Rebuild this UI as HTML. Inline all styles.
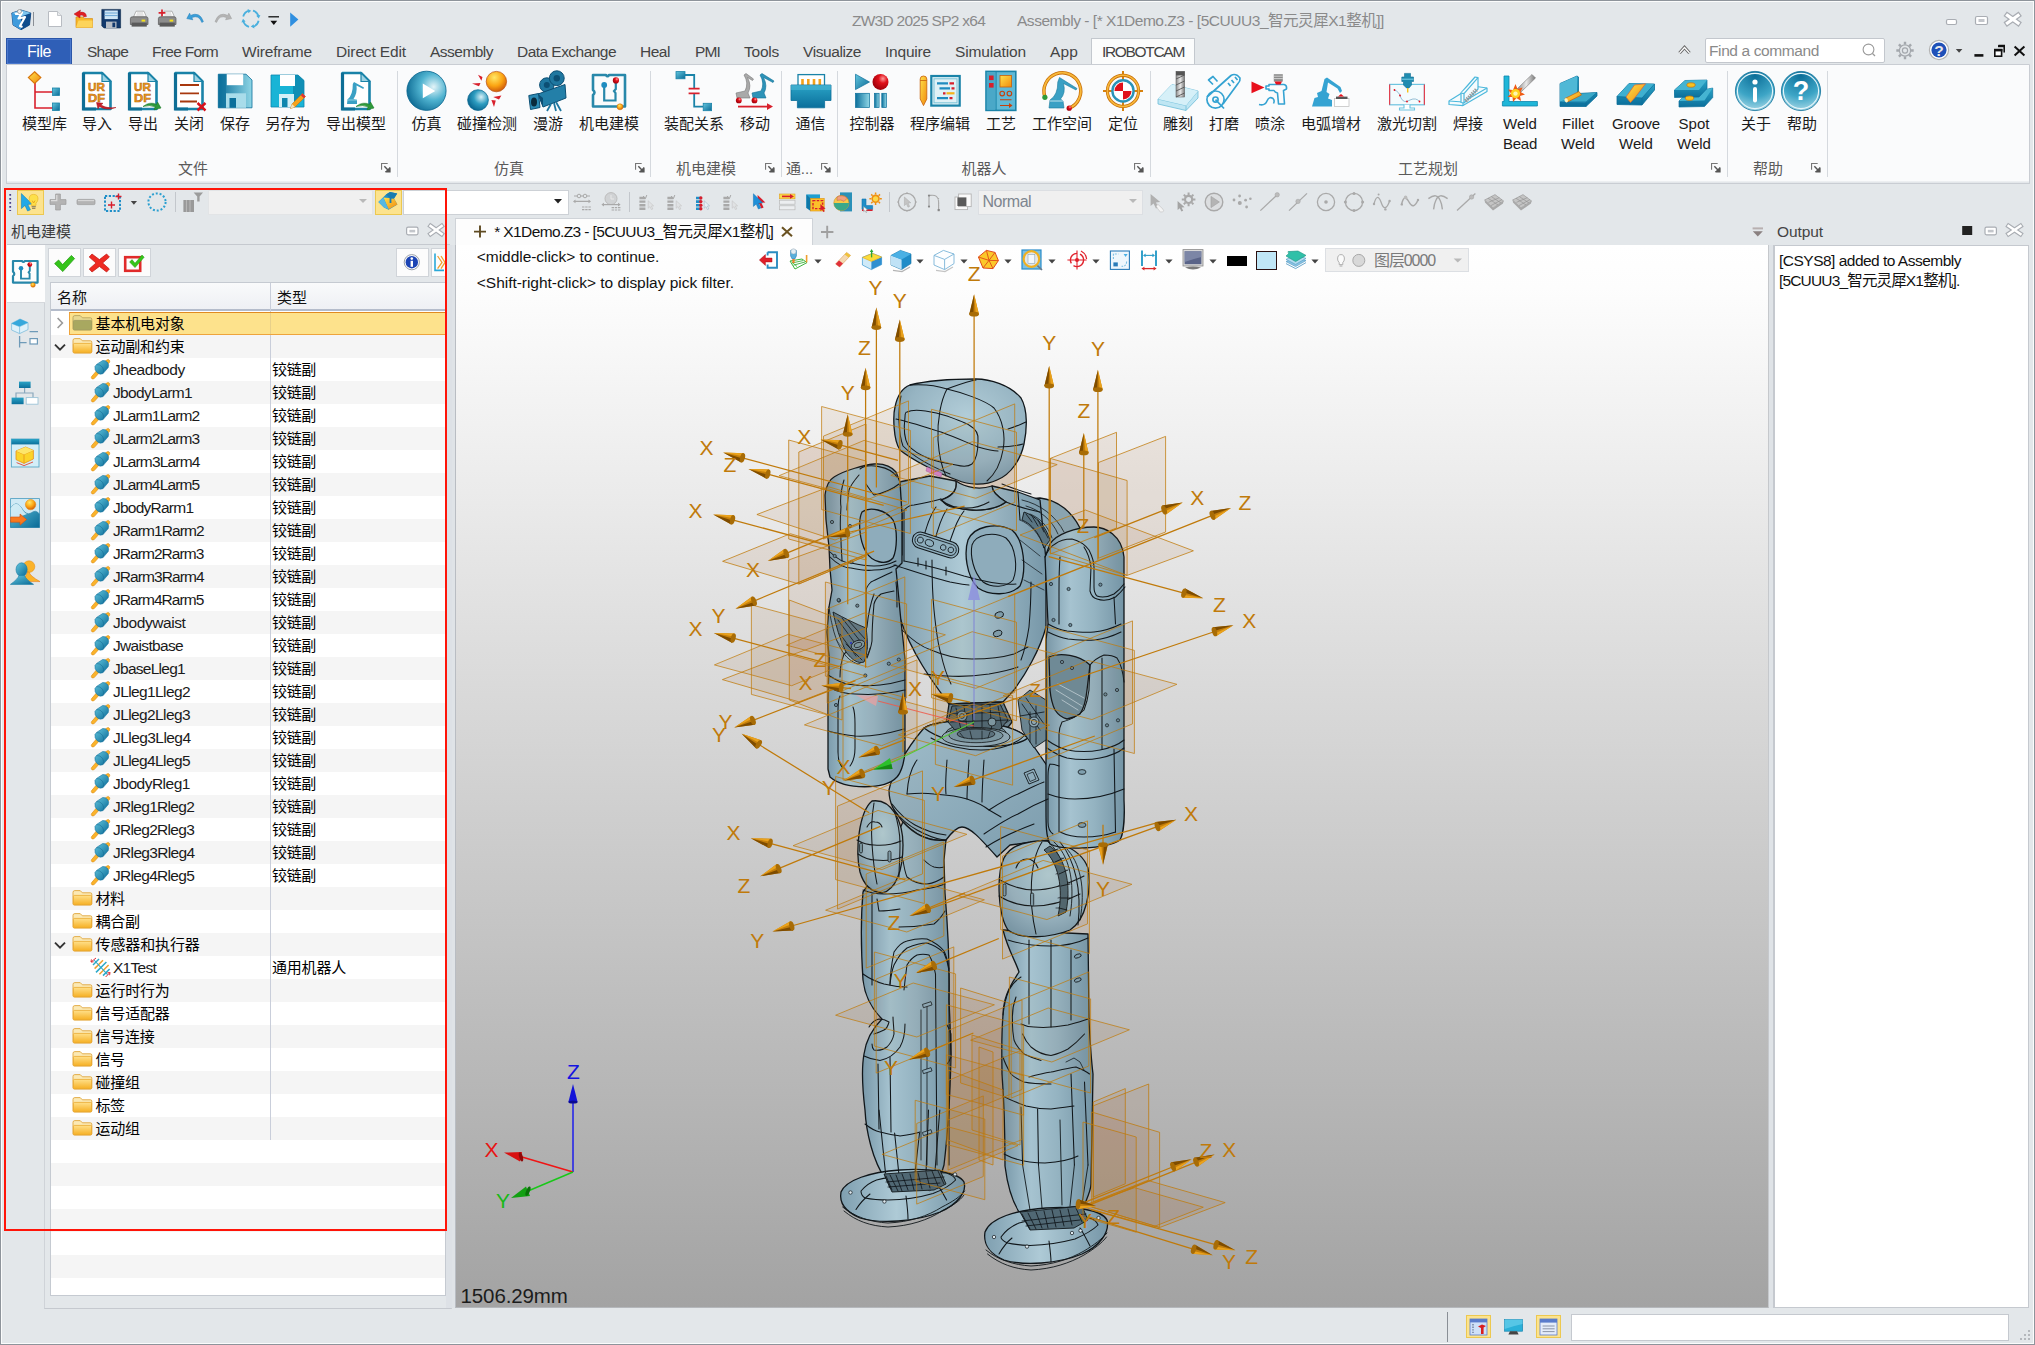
<!DOCTYPE html>
<html lang="zh"><head><meta charset="utf-8"><title>ZW3D 2025 SP2 x64 - Assembly</title><style>
html,body{margin:0;padding:0;background:#e3e7ea;}
body{width:2035px;height:1345px;overflow:hidden;position:relative;font-family:"Liberation Sans","Noto Sans CJK SC",sans-serif;font-size:15px;}
.a{position:absolute;box-sizing:border-box;}
.t{position:absolute;white-space:nowrap;}
svg{position:absolute;overflow:visible;}
</style></head><body>
<div class="a" style="left:0px;top:0px;width:2035px;height:1345px;border:1px solid #8e949b;"></div>
<div class="a" style="left:1px;top:1px;width:2033px;height:1343px;border:1px solid #fbfcfc;"></div>
<span class="t " style="left:852px;top:10.5px;line-height:20px;font-size:15.5px;color:#8a8a8a;letter-spacing:-0.74px;">ZW3D 2025 SP2 x64</span>
<span class="t " style="left:1017px;top:10.5px;line-height:20px;font-size:15.5px;color:#8a8a8a;letter-spacing:-0.47px;">Assembly - [* X1Demo.Z3 - [5CUUU3_智元灵犀X1整机]]</span>
<svg style="left:1940px;top:8px" width="90" height="24" viewBox="1940 8 90 24">
<rect x="1946.5" y="19.5" width="10" height="5" rx="1.5" fill="#fff" stroke="#a9adb3" stroke-width="1.2"/>
<rect x="1975.5" y="16.5" width="12" height="8" rx="1.5" fill="#fff" stroke="#a9adb3" stroke-width="1.2"/>
<rect x="1978.5" y="19" width="6" height="3" fill="#c3c6cb"/>
<path d="M2007.4 15.4 L2018 23 M2018 15.4 L2007.4 23" stroke="#a9adb3" stroke-width="5.6" stroke-linecap="square"/>
<path d="M2007.4 15.4 L2018 23 M2018 15.4 L2007.4 23" stroke="#fff" stroke-width="3.2" stroke-linecap="square"/>
</svg>
<div class="a" style="left:6px;top:38px;width:66px;height:26px;background:#2f5fb7;border:1px solid #2a55a8;border-bottom:none;box-shadow:inset 0 0 0 1px #4a78cd;"></div>
<span class="t " style="left:27px;top:41.5px;line-height:20px;font-size:16px;color:#fff;letter-spacing:-0.45px;">File</span>
<span class="t " style="left:87px;top:41.5px;line-height:20px;font-size:15.5px;color:#444;letter-spacing:-0.76px;">Shape</span>
<span class="t " style="left:152px;top:41.5px;line-height:20px;font-size:15.5px;color:#444;letter-spacing:-0.70px;">Free Form</span>
<span class="t " style="left:242px;top:41.5px;line-height:20px;font-size:15.5px;color:#444;letter-spacing:-0.16px;">Wireframe</span>
<span class="t " style="left:336px;top:41.5px;line-height:20px;font-size:15.5px;color:#444;letter-spacing:-0.14px;">Direct Edit</span>
<span class="t " style="left:430px;top:41.5px;line-height:20px;font-size:15.5px;color:#444;letter-spacing:-0.52px;">Assembly</span>
<span class="t " style="left:517px;top:41.5px;line-height:20px;font-size:15.5px;color:#444;letter-spacing:-0.54px;">Data Exchange</span>
<span class="t " style="left:640px;top:41.5px;line-height:20px;font-size:15.5px;color:#444;letter-spacing:-0.47px;">Heal</span>
<span class="t " style="left:695px;top:41.5px;line-height:20px;font-size:15.5px;color:#444;letter-spacing:-0.85px;">PMI</span>
<span class="t " style="left:744px;top:41.5px;line-height:20px;font-size:15.5px;color:#444;letter-spacing:-0.24px;">Tools</span>
<span class="t " style="left:803px;top:41.5px;line-height:20px;font-size:15.5px;color:#444;letter-spacing:-0.42px;">Visualize</span>
<span class="t " style="left:885px;top:41.5px;line-height:20px;font-size:15.5px;color:#444;letter-spacing:-0.20px;">Inquire</span>
<span class="t " style="left:955px;top:41.5px;line-height:20px;font-size:15.5px;color:#444;letter-spacing:-0.14px;">Simulation</span>
<span class="t " style="left:1050px;top:41.5px;line-height:20px;font-size:15.5px;color:#444;letter-spacing:0.14px;">App</span>
<div class="a" style="left:1091px;top:38px;width:104px;height:27px;background:#fbfcfc;border:1px solid #c3c8ce;border-bottom:none;"></div>
<span class="t " style="left:1102px;top:41.5px;line-height:20px;font-size:15.5px;color:#444;letter-spacing:-1.32px;">IROBOTCAM</span>
<svg style="left:0;top:0" width="310" height="38" viewBox="0 0 310 38">
<!-- app icon -->
<path d="M11.8 13 L21 10 L30.8 13 L29.5 25 L21 29.8 L13 25Z" fill="#1d6fb8" stroke="#0e3f78" stroke-width=".8"/>
<path d="M11.8 13 L21 16.5 L21 29.8 L13 25Z" fill="#3f9bdc"/><path d="M21 16.5 L30.8 13 L29.5 25 L21 29.8Z" fill="#0f4c8c"/>
<path d="M11.8 13 L21 10 L30.8 13 L21 16.5Z" fill="#7cc4ee"/>
<path d="M15 14 L22 12.5 L18.5 18.5 L25 17 L20 26 L22.5 27" fill="none" stroke="#fff" stroke-width="2.2" stroke-linejoin="round"/>
<circle cx="19.5" cy="11.5" r="2" fill="#eee" stroke="#666" stroke-width=".5"/>
<path d="M33.5 12 V26" stroke="#8a8f96" stroke-width="1"/>
<!-- new -->
<path d="M48.5 11.5 H57.5 L61.5 15.5 V26.5 H48.5Z" fill="#fff" stroke="#b8bcc2" stroke-width="1"/><path d="M57.5 11.5 V15.5 H61.5" fill="#e8eaec" stroke="#b8bcc2" stroke-width=".8"/>
<!-- open -->
<path d="M76 17 H83 L84.5 18.5 H92.5 V27.5 H76Z" fill="#f6b628" stroke="#d8901a" stroke-width=".7"/><path d="M76 27.5 L78.5 20.5 H92.5 V27.5Z" fill="#fdd45a"/>
<path d="M86.5 16.5 Q86 11.5 80 12.2 L80.5 10 L74 14 L80 18 L80.2 15.2 Q83.5 14.5 83.8 17Z" fill="#e01e22" stroke="#a81016" stroke-width=".4"/>
<!-- save -->
<path d="M101.8 9.4 H120.6 V28 H104 L101.8 26Z" fill="#12396c" stroke="#0a2648" stroke-width=".6"/><rect x="104.6" y="10.5" width="13.2" height="8.6" fill="#cfe6f6"/><path d="M104.6 13 H117.8 M104.6 15.6 H117.8" stroke="#6aa6d6" stroke-width="1"/><rect x="106" y="21.6" width="10.5" height="6.4" fill="#b8bec6"/><rect x="112.4" y="22.6" width="2.8" height="4.6" fill="#12396c"/>
<!-- print -->
<g id="prn"><path d="M133.5 17 L136 11.2 H144 L146.5 17Z" fill="#fafafa" stroke="#999" stroke-width=".7"/><path d="M137 13 H143 M136.4 15 H143.6" stroke="#bbb" stroke-width=".7"/><path d="M130.4 18.5 Q130.4 16.8 132.5 16.8 H146 Q148 16.8 148 18.5 V24.5 H130.4Z" fill="#8c8c8c" stroke="#555" stroke-width=".7"/><rect x="131.6" y="22.6" width="15.2" height="4" fill="#5a5a5a"/><rect x="141.6" y="19.6" width="3.6" height="2" fill="#f4e01a"/></g>
<use href="#prn" x="28"/><path d="M158.6 12.8 H165.4 M162 9.4 V16.2" stroke="#d8202c" stroke-width="1.7"/>
<!-- undo / redo -->
<path d="M201.8 22.4 Q199 14.5 191.8 17.6 L192.8 19.8 L186.8 18.6 L189.6 13.2 L190.6 15.4 Q199.8 11.2 203.4 21.6Z" fill="#3b9fd8" stroke="#1a78b8" stroke-width=".5"/>
<path d="M216.6 22.4 Q219.4 14.5 226.6 17.6 L225.6 19.8 L231.6 18.6 L228.8 13.2 L227.8 15.4 Q218.6 11.2 215 21.6Z" fill="#b4b4b4" stroke="#9a9a9a" stroke-width=".5"/>
<!-- refresh -->
<g fill="none" stroke="#4ab0de" stroke-width="1.8"><path d="M243.2 16.5 A8.3 8.3 0 0 1 249 10.6"/><path d="M253 10.6 A8.3 8.3 0 0 1 258.6 16.5"/><path d="M258.6 20.8 A8.3 8.3 0 0 1 253 26.8"/><path d="M249 26.8 A8.3 8.3 0 0 1 243.2 20.8"/></g>
<path d="M247.6 9 L251.2 10.8 L248.4 13.2Z M260.4 15 L258.8 18.6 L256.2 15.8Z M254.4 28.4 L250.8 26.6 L253.6 24.2Z M241.4 22.4 L243 18.8 L245.6 21.6Z" fill="#4ab0de"/>
<!-- customize dropdown -->
<path d="M268.4 16.8 H279" stroke="#111" stroke-width="1.3"/><path d="M270.4 20.8 H277.2 L273.8 25Z" fill="#111"/>
<path d="M290.2 12.4 L298.4 19.6 L290.2 26.8Z" fill="#2f8fe0"/>
</svg>
<svg style="left:1670px;top:38px" width="365" height="26" viewBox="1670 38 365 26">
<path d="M1679.5 53 L1684.5 47.5 L1689.5 53" fill="none" stroke="#666" stroke-width="3.2" stroke-linejoin="miter"/><path d="M1679.5 53 L1684.5 47.5 L1689.5 53" fill="none" stroke="#fff" stroke-width="1.2"/>
<rect x="1705.5" y="38.5" width="179" height="24" rx="1.5" fill="#fff" stroke="#c3c7cd"/>
<circle cx="1868.5" cy="49.5" r="5.4" fill="none" stroke="#9a9a9a" stroke-width="1.1"/><path d="M1872.5 53.5 L1875 56" stroke="#9a9a9a" stroke-width="1.2"/>
<g fill="none" stroke="#a4a8ad" stroke-width="1.2"><circle cx="1905" cy="50.5" r="5.6"/><circle cx="1905" cy="50.5" r="2.6"/><path d="M1905 41.8 V44.6 M1905 56.4 V59.2 M1896.3 50.5 H1899.1 M1910.9 50.5 H1913.7 M1898.9 44.4 L1900.9 46.4 M1909.1 54.6 L1911.1 56.6 M1898.9 56.6 L1900.9 54.6 M1909.1 46.4 L1911.1 44.4" stroke-width="2.4"/></g>
<circle cx="1939" cy="50" r="9.6" fill="#fff" stroke="#b4b4b4" stroke-width="1.2"/><circle cx="1939" cy="50" r="7.6" fill="#1f50b8"/>
<text x="1939" y="55.6" font-size="15.5" font-weight="bold" fill="#e8e8e8" text-anchor="middle" font-family="Liberation Sans,sans-serif">?</text>
<path d="M1955.8 49 H1962.4 L1959.1 52.8Z" fill="#444"/>
<path d="M1974.4 55.4 H1983.4" stroke="#111" stroke-width="2.6"/>
<path d="M1998.4 45.6 H2004.2 V52.4" fill="none" stroke="#111" stroke-width="1.6"/><path d="M1998 45.2 H2004.6 V47.2 H1998Z" fill="#111"/><rect x="1994.8" y="49.6" width="6.8" height="6.6" fill="#fff" stroke="#111" stroke-width="1.6"/><path d="M1994 49 H2002.4 V51.4 H1994Z" fill="#111"/>
<path d="M2014.6 46.4 L2024.4 55.6 M2024.4 46.4 L2014.6 55.6" stroke="#111" stroke-width="2"/>
</svg>
<span class="t " style="left:1709px;top:41.0px;line-height:20px;font-size:15.5px;color:#8a8a8a;letter-spacing:-0.39px;">Find a command</span>
<svg width="0" height="0" style="left:0;top:0"><defs>
<linearGradient id="gT" x1="0" y1="0" x2="1" y2="1"><stop offset="0" stop-color="#63c6de"/><stop offset="1" stop-color="#0a6a96"/></linearGradient>
<linearGradient id="gT2" x1="0" y1="0" x2="0" y2="1"><stop offset="0" stop-color="#2aa3c6"/><stop offset="1" stop-color="#0b6f9b"/></linearGradient>
<linearGradient id="gTh" x1="0" y1="0" x2="1" y2="0"><stop offset="0" stop-color="#0b6f9b"/><stop offset="1" stop-color="#8fd6e6"/></linearGradient>
<linearGradient id="gO" x1="0" y1="0" x2="1" y2="1"><stop offset="0" stop-color="#ffe14a"/><stop offset="1" stop-color="#f08a0e"/></linearGradient>
<linearGradient id="gG" x1="0" y1="0" x2="1" y2="0"><stop offset="0" stop-color="#8a8a8a"/><stop offset=".5" stop-color="#e8e8e8"/><stop offset="1" stop-color="#777"/></linearGradient>
<radialGradient id="rT" cx=".68" cy=".4" r=".75"><stop offset="0" stop-color="#e4f4f8"/><stop offset=".45" stop-color="#4fb3d0"/><stop offset="1" stop-color="#07648e"/></radialGradient>
<radialGradient id="rB" cx=".65" cy=".35" r=".7"><stop offset="0" stop-color="#d8f0f6"/><stop offset=".5" stop-color="#2d9cc0"/><stop offset="1" stop-color="#07648e"/></radialGradient>
<radialGradient id="rO" cx=".4" cy=".3" r=".75"><stop offset="0" stop-color="#ffe766"/><stop offset=".55" stop-color="#fba412"/><stop offset="1" stop-color="#c8500a"/></radialGradient>
<radialGradient id="rR" cx=".65" cy=".3" r=".7"><stop offset="0" stop-color="#ff9a9a"/><stop offset=".4" stop-color="#e0101a"/><stop offset="1" stop-color="#a0000a"/></radialGradient>
<radialGradient id="rI" cx=".5" cy=".1" r="1"><stop offset="0" stop-color="#0b6e98"/><stop offset=".55" stop-color="#3da5c6"/><stop offset="1" stop-color="#bfe4ee"/></radialGradient>
<linearGradient id="gF" x1="0" y1="0" x2="0" y2="1"><stop offset="0" stop-color="#ffe08a"/><stop offset="1" stop-color="#f6b024"/></linearGradient>
</defs></svg>
<div class="a" style="left:6px;top:64px;width:2024px;height:120px;background:#fafbfc;border:1px solid #c9cdd3;border-radius:0 0 2px 2px;"></div>
<div class="a" style="left:6px;top:181px;width:2024px;height:3px;background:linear-gradient(#f1f3f5,#dfe3e7);border:1px solid #c9cdd3;border-top:none;"></div>
<svg style="left:23.5px;top:71px" width="40" height="40" viewBox="0 0 40 40"><path d="M11 11 V37 H29 M11 21 H29" fill="none" stroke="#d9202c" stroke-width="1.6"/><path d="M10.6 .8 L16.8 6.6 L10.6 12.4 L4.4 6.6Z" fill="url(#gO)" stroke="#d8760c" stroke-width="1.2"/><rect x="28.5" y="17" width="7" height="7.5" fill="url(#gT)" stroke="#1a83a8" stroke-width=".8"/><rect x="28.5" y="32" width="7" height="7.5" fill="url(#gT)" stroke="#1a83a8" stroke-width=".8"/></svg>
<span class="t " style="left:22.0px;top:113.5px;line-height:20px;font-size:15px;color:#1a1a1a;">模型库</span>
<svg style="left:76px;top:71px" width="40" height="40" viewBox="0 0 40 40"><path d="M7.5 2 H26 L34.5 10.5 V38 H7.5 Z" fill="#fff" stroke="#1a83a8" stroke-width="2.6" stroke-linejoin="round"/><path d="M26 2 V10.5 H34.5 Z" fill="#9fd3e3" stroke="#1a83a8" stroke-width="1.2"/><path d="M7.5 2 V38 H20" fill="none" stroke="#0f6f96" stroke-width="3.2"/><text x="12" y="20" font-size="11.5" font-weight="bold" fill="#f0a018" stroke="#b05a10" stroke-width=".5" font-family="Liberation Sans,sans-serif" textLength="17" lengthAdjust="spacingAndGlyphs">UR</text><text x="12" y="30.5" font-size="11.5" font-weight="bold" fill="#f0a018" stroke="#b05a10" stroke-width=".5" font-family="Liberation Sans,sans-serif" textLength="17" lengthAdjust="spacingAndGlyphs">DF</text><path d="M40 36.5 Q30 40 23.5 35.5 L22 37.8 L20.5 31.5 L27 32.3 L25 34 Q31 37.8 40 36.5Z" fill="#c8202c" stroke="#a01018" stroke-width=".5"/></svg>
<span class="t " style="left:82.0px;top:113.5px;line-height:20px;font-size:15px;color:#1a1a1a;">导入</span>
<svg style="left:122px;top:71px" width="40" height="40" viewBox="0 0 40 40"><path d="M7.5 2 H26 L34.5 10.5 V38 H7.5 Z" fill="#fff" stroke="#1a83a8" stroke-width="2.6" stroke-linejoin="round"/><path d="M26 2 V10.5 H34.5 Z" fill="#9fd3e3" stroke="#1a83a8" stroke-width="1.2"/><path d="M7.5 2 V38 H20" fill="none" stroke="#0f6f96" stroke-width="3.2"/><text x="12" y="20" font-size="11.5" font-weight="bold" fill="#f0a018" stroke="#b05a10" stroke-width=".5" font-family="Liberation Sans,sans-serif" textLength="17" lengthAdjust="spacingAndGlyphs">UR</text><text x="12" y="30.5" font-size="11.5" font-weight="bold" fill="#f0a018" stroke="#b05a10" stroke-width=".5" font-family="Liberation Sans,sans-serif" textLength="17" lengthAdjust="spacingAndGlyphs">DF</text><path d="M21 35.5 Q28 30 34.5 33.5 L35.5 31 L39 37 L32 38.8 L33.2 36 Q28 33.5 21 35.5Z" fill="#2e9a3a" stroke="#1e7a2a" stroke-width=".6"/></svg>
<span class="t " style="left:128.0px;top:113.5px;line-height:20px;font-size:15px;color:#1a1a1a;">导出</span>
<svg style="left:168px;top:71px" width="40" height="40" viewBox="0 0 40 40"><path d="M7.5 2 H26 L34.5 10.5 V38 H7.5 Z" fill="#fff" stroke="#1a83a8" stroke-width="2.6" stroke-linejoin="round"/><path d="M26 2 V10.5 H34.5 Z" fill="#9fd3e3" stroke="#1a83a8" stroke-width="1.2"/><path d="M7.5 2 V38 H20" fill="none" stroke="#0f6f96" stroke-width="3.2"/><path d="M12 14 H31 M12 22.3 H31 M12 30.5 H29" stroke="#a8380e" stroke-width="1.8"/><path d="M29.5 32 L37.5 39.5 M37.5 32 L29.5 39.5" stroke="#d8101c" stroke-width="2.4"/></svg>
<span class="t " style="left:174.0px;top:113.5px;line-height:20px;font-size:15px;color:#1a1a1a;">关闭</span>
<svg style="left:214px;top:71px" width="40" height="40" viewBox="0 0 40 40"><path d="M4.3 3.2 H32 L38 9 V36.8 H4.3Z" fill="url(#gTh)" stroke="#0b6f9b" stroke-width=".8"/><path d="M4.3 3.2 H12 V36.8 H4.3Z" fill="#0b6f9b" opacity=".55"/><rect x="12.8" y="3.2" width="16.4" height="11" fill="#fff"/><rect x="12" y="22.3" width="20" height="14.5" fill="#a8dcea"/><rect x="15.5" y="27" width="6.5" height="9.8" fill="#0b6f9b"/></svg>
<span class="t " style="left:220.0px;top:113.5px;line-height:20px;font-size:15px;color:#1a1a1a;">保存</span>
<svg style="left:267px;top:71px" width="40" height="40" viewBox="0 0 40 40"><path d="M4 4 H31 L37 9.5 V36 H4Z" fill="#19b4d6" stroke="#0e86ad" stroke-width=".8"/><path d="M26 4 H31 L37 9.5 V24 L30 30 H26Z" fill="#0e86ad" opacity=".8"/><rect x="13" y="4" width="15" height="11" fill="#fff"/><rect x="12" y="23" width="15" height="13" fill="#d4f0f7"/><rect x="15" y="27" width="5.5" height="9" fill="#0e86ad"/><path d="M35.5 22.5 L38.5 25.5 L28 36 L23.5 37.5 L25 33Z" fill="#f6a21a" stroke="#c87610" stroke-width=".6"/><path d="M35.5 22.5 L38.5 25.5 L36.8 27.2 L33.8 24.2Z" fill="#e0303a"/><path d="M25 33 L28 36 L23.5 37.5Z" fill="#f3e3c0"/></svg>
<span class="t " style="left:265.5px;top:113.5px;line-height:20px;font-size:15px;color:#1a1a1a;">另存为</span>
<svg style="left:335px;top:71px" width="40" height="40" viewBox="0 0 40 40"><path d="M7.5 2 H26 L34.5 10.5 V38 H7.5 Z" fill="#fff" stroke="#1a83a8" stroke-width="2.6" stroke-linejoin="round"/><path d="M26 2 V10.5 H34.5 Z" fill="#9fd3e3" stroke="#1a83a8" stroke-width="1.2"/><path d="M7.5 2 V38 H20" fill="none" stroke="#0f6f96" stroke-width="3.2"/><path d="M19 11 L29 16.5 L28.3 18 L21.5 14.6 Q22.5 22 18.5 28 L22 29 L22 33 L12 33 L12.5 28.5 Q18 24 17.8 13Z" fill="#3aa0c4"/><path d="M12 29 H22" stroke="#8fd0e2" stroke-width="1"/><path d="M21 35.5 Q28 30 34.5 33.5 L35.5 31 L39 37 L32 38.8 L33.2 36 Q28 33.5 21 35.5Z" fill="#2e9a3a" stroke="#1e7a2a" stroke-width=".6"/></svg>
<span class="t " style="left:326.0px;top:113.5px;line-height:20px;font-size:15px;color:#1a1a1a;">导出模型</span>
<svg style="left:405.5px;top:71px" width="40" height="40" viewBox="0 0 40 40"><circle cx="20.5" cy="19.8" r="19.6" fill="url(#rT)" stroke="#07648e" stroke-width=".8"/><path d="M16.8 12.6 L29.2 19.9 L16.8 27.2Z" fill="#fff"/></svg>
<span class="t " style="left:411.5px;top:113.5px;line-height:20px;font-size:15px;color:#1a1a1a;">仿真</span>
<svg style="left:466px;top:71px" width="40" height="40" viewBox="0 0 40 40"><circle cx="30.4" cy="10.6" r="10.2" fill="url(#rO)" stroke="#b84a08" stroke-width=".7"/><circle cx="12" cy="29.1" r="10.4" fill="url(#rB)" stroke="#07648e" stroke-width=".7"/><path d="M12 3.8 L16.5 6 L15.4 9.8Z M6 12.4 L14.5 12 L13 15.2Z M27.2 26 L35.4 24.6 L33 28.6Z M25.4 29 L29.8 29.6 L28 36Z" fill="#d8202c"/></svg>
<span class="t " style="left:457.0px;top:113.5px;line-height:20px;font-size:15px;color:#1a1a1a;">碰撞检测</span>
<svg style="left:527px;top:71px" width="40" height="40" viewBox="0 0 40 40"><circle cx="19.8" cy="14" r="7.2" fill="#1f77a0" stroke="#0c4f74" stroke-width="1"/><circle cx="19.8" cy="14" r="3" fill="#0c4f74"/><circle cx="29.8" cy="7.2" r="7.4" fill="#1f77a0" stroke="#0c4f74" stroke-width="1"/><circle cx="29.8" cy="7.2" r="3.2" fill="#0c4f74"/><path d="M11 23 L38 13.5 L39 27 L16 36Z" fill="#237fa8" stroke="#0c4f74" stroke-width="1"/><path d="M11 23 L16 36 L16 27Z" fill="#0c4f74"/><path d="M1.8 24.5 L11.5 22.5 L13 36.5 L3.5 38.5Z" fill="#2b8ab4" stroke="#0c4f74" stroke-width="1"/><ellipse cx="7" cy="31" rx="3" ry="4.5" fill="#0a2a3c"/><path d="M24 33 L20 40 M27 32 L29 40 M29 31 L34 40" stroke="#1f77a0" stroke-width="1.8"/></svg>
<span class="t " style="left:533.0px;top:113.5px;line-height:20px;font-size:15px;color:#1a1a1a;">漫游</span>
<svg style="left:588px;top:71px" width="40" height="40" viewBox="0 0 40 40"><path d="M5 4 H18 Q19.5 6.5 21 4 H37 V35.5 H5 V24 Q8 21.5 5 19Z" fill="none" stroke="#2888aa" stroke-width="2.6" stroke-linejoin="round"/><path d="M16.2 16 V29.5 H27.5 V22 L26 20 L27.8 18 V11" fill="none" stroke="#2888aa" stroke-width="2.2"/><circle cx="16.2" cy="14" r="2.9" fill="#1f8cc0"/><circle cx="27.9" cy="9.4" r="3.1" fill="url(#rR)"/><circle cx="32" cy="35.8" r="3" fill="url(#rO)" stroke="#d8760c" stroke-width=".6"/></svg>
<span class="t " style="left:579.0px;top:113.5px;line-height:20px;font-size:15px;color:#1a1a1a;">机电建模</span>
<svg style="left:673px;top:71px" width="40" height="40" viewBox="0 0 40 40"><path d="M12 4 H21.2 V17.5 M21.2 22.6 V35.6 H30" fill="none" stroke="#1a83a8" stroke-width="1.8"/><path d="M15.6 17.7 H26.6 M15.6 22.3 H26.6" stroke="#d8202c" stroke-width="1.7"/><rect x="3" y=".6" width="9" height="7.2" fill="url(#gT)" stroke="#1a83a8" stroke-width=".8"/><rect x="30.2" y="32.3" width="8.4" height="7.4" fill="url(#gT)" stroke="#1a83a8" stroke-width=".8"/></svg>
<span class="t " style="left:664.0px;top:113.5px;line-height:20px;font-size:15px;color:#1a1a1a;">装配关系</span>
<svg style="left:734px;top:71px" width="40" height="40" viewBox="0 0 40 40"><path d="M2 22 L11 20 Q15 12 10 4 L12 2.5 L19.5 8 L18.5 9.5 L13.5 6.5 Q18 15 14 22 L16 27 H3Z" fill="#a9a9a9" stroke="#777" stroke-width=".6"/><path d="M18 22 L27 20 Q31 12 26 4 L28 2.5 L40 10 L39 11.5 L29.5 6.5 Q34 15 30 22 L32 27 H19Z" fill="#2d93b8" stroke="#0f6f96" stroke-width=".6"/><circle cx="4.8" cy="29.4" r="2.9" fill="url(#rR)"/><circle cx="20.5" cy="29.4" r="2.9" fill="url(#rR)"/><path d="M4 35.6 H34" stroke="#d8202c" stroke-width="1.8"/><path d="M33 32.2 L39 35.6 L33 39Z" fill="#d8202c"/></svg>
<span class="t " style="left:740.0px;top:113.5px;line-height:20px;font-size:15px;color:#1a1a1a;">移动</span>
<svg style="left:789.5px;top:71px" width="40" height="40" viewBox="0 0 40 40"><rect x="8" y="3.6" width="26.5" height="12" fill="#fff" stroke="#1a83a8" stroke-width="1.3"/><path d="M12.5 8 V14 M18.3 8 V14 M24 8 V14 M29.8 8 V14" stroke="#f6a21a" stroke-width="2.6"/><path d="M1 14 H41 V29.5 H34.6 V36.8 H7.4 V29.5 H1Z" fill="url(#gT2)" stroke="#0b6f9b" stroke-width=".8"/><path d="M1 14 H41 V19 H1Z" fill="#4fb8d6" opacity=".6"/></svg>
<span class="t " style="left:795.5px;top:113.5px;line-height:20px;font-size:15px;color:#1a1a1a;">通信</span>
<svg style="left:851px;top:71px" width="40" height="40" viewBox="0 0 40 40"><path d="M4.5 3.2 L18.5 11 L4.5 18.6Z" fill="url(#gT)" stroke="#0b6f9b" stroke-width=".7"/><circle cx="29.5" cy="10.9" r="8" fill="url(#rR)"/><rect x="4.5" y="22.3" width="14" height="14.2" fill="url(#gTh)" stroke="#0b6f9b" stroke-width=".7"/><rect x="23.5" y="22.3" width="4.6" height="14.2" fill="url(#gTh)" stroke="#0b6f9b" stroke-width=".7"/><rect x="30.8" y="22.3" width="4.6" height="14.2" fill="url(#gTh)" stroke="#0b6f9b" stroke-width=".7"/></svg>
<span class="t " style="left:849.5px;top:113.5px;line-height:20px;font-size:15px;color:#1a1a1a;">控制器</span>
<svg style="left:919px;top:71px" width="40" height="40" viewBox="0 0 40 40"><path d="M1.2 8 Q1.2 5 4.5 5 Q7.8 5 7.8 8 V28 L4.5 34.6 L1.2 28Z" fill="url(#gO)" stroke="#c8600a" stroke-width=".8"/><path d="M1.2 9.5 H7.8" stroke="#c8600a" stroke-width=".8"/><rect x="12.3" y="5" width="28.4" height="29.6" fill="#dff1f6" stroke="#1a83a8" stroke-width="2.2"/><rect x="15" y="7.8" width="23" height="24" fill="none" stroke="#7cc4d8" stroke-width="1"/><path d="M18 12.4 H29 M20.5 17.3 H31 M18 27.2 H29" stroke="#1f8cc0" stroke-width="2.2"/><path d="M30.5 12.4 H35 M32.5 17.3 H35.5 M24 22.3 H26.5 M30.5 27.2 H33.5" stroke="#d8202c" stroke-width="2.2"/><path d="M27.5 22.3 H35.5" stroke="#f6b21a" stroke-width="2.2"/></svg>
<span class="t " style="left:910.0px;top:113.5px;line-height:20px;font-size:15px;color:#1a1a1a;">程序编辑</span>
<svg style="left:980px;top:71px" width="40" height="40" viewBox="0 0 40 40"><rect x="6" y=".4" width="29.8" height="39" fill="#5fb9d6" stroke="#1a83a8" stroke-width="1.6"/><path d="M16 .4 V39.4" stroke="#1a83a8" stroke-width="1.2"/><rect x="6.8" y="1.2" width="8.6" height="37.4" fill="#4aa8c8"/><rect x="9" y="4.5" width="4.6" height="4.6" fill="#d8202c"/><rect x="9" y="12" width="4.6" height="4.6" fill="#d8202c"/><rect x="20" y="4.5" width="11.5" height="11.5" fill="url(#gO)" stroke="#c8600a" stroke-width=".8"/><circle cx="22.2" cy="22.6" r="2.3" fill="none" stroke="#c8400a" stroke-width="1.1"/><circle cx="29.4" cy="22.6" r="2.3" fill="none" stroke="#c8400a" stroke-width="1.1"/><path d="M20 28.8 H31.5 M20 34.5 H30" stroke="#c8400a" stroke-width="1.1"/><path d="M29 32 L32.5 34.5 L29 37Z" fill="#c8400a"/></svg>
<span class="t " style="left:986.0px;top:113.5px;line-height:20px;font-size:15px;color:#1a1a1a;">工艺</span>
<svg style="left:1041px;top:71px" width="40" height="40" viewBox="0 0 40 40"><path d="M4 26.3 A18.4 18.4 0 1 1 28.2 37.2" fill="none" stroke="#c8700a" stroke-width="3.4"/><path d="M4 26.3 A18.4 18.4 0 1 1 28.2 37.2" fill="none" stroke="#f8b83a" stroke-width="1.8"/><path d="M18.5 6.5 L36 17.5 L35 19 L22.5 12.5 Q25 22 19.5 28 L22 30 L23 37 H8 L9 29 Q17 24 16.8 11Z" fill="#3aa0c4" stroke="#1a7a9c" stroke-width=".6"/><path d="M9 30 H22" stroke="#bfe4ee" stroke-width="1"/><circle cx="3.9" cy="26.3" r="2.6" fill="#2e9a3a"/><circle cx="28.2" cy="37.2" r="2.6" fill="url(#rR)"/></svg>
<span class="t " style="left:1032.0px;top:113.5px;line-height:20px;font-size:15px;color:#1a1a1a;">工作空间</span>
<svg style="left:1102px;top:71px" width="40" height="40" viewBox="0 0 40 40"><path d="M21 0 V40 M1 19.9 H41" stroke="#d8820e" stroke-width="2"/><circle cx="21" cy="19.9" r="15.6" fill="none" stroke="#c8700a" stroke-width="3.2"/><circle cx="21" cy="19.9" r="15.6" fill="none" stroke="#f8b83a" stroke-width="1.6"/><circle cx="21" cy="19.9" r="10.6" fill="#fff" stroke="#2a93b8" stroke-width="2.4"/><path d="M21 19.9 V11.4 A8.5 8.5 0 0 0 12.5 19.9Z M21 19.9 V28.4 A8.5 8.5 0 0 0 29.5 19.9Z" fill="#e0101a"/></svg>
<span class="t " style="left:1108.0px;top:113.5px;line-height:20px;font-size:15px;color:#1a1a1a;">定位</span>
<svg style="left:1157px;top:71px" width="40" height="40" viewBox="0 0 40 40"><path d="M1 28 L15 13.5 L41 20 L41 27 L29 39.5 L1 33Z" fill="#bfe6f3" stroke="#6cbcd8" stroke-width=".8"/><path d="M1 28 L29 34.5 L41 20 M29 34.5 V39.5" fill="none" stroke="#6cbcd8" stroke-width=".8"/><path d="M15 13.5 L41 20 L29 34.5 L1 28Z" fill="#d6f0f8"/><rect x="19" y=".4" width="8.6" height="25.6" fill="url(#gG)" stroke="#666" stroke-width=".6"/><path d="M19 8 L27.6 4 M19 14 L27.6 10 M19 20 L27.6 16 M19 26 L27.6 22" stroke="#555" stroke-width=".9"/><rect x="19" y=".4" width="8.6" height="4" fill="#555"/></svg>
<span class="t " style="left:1163.0px;top:113.5px;line-height:20px;font-size:15px;color:#1a1a1a;">雕刻</span>
<svg style="left:1203px;top:71px" width="40" height="40" viewBox="0 0 40 40"><g fill="none" stroke="#35a3d2" stroke-width="1.7" stroke-linejoin="round"><circle cx="12.5" cy="28.6" r="8.6"/><circle cx="12.5" cy="28.6" r="2.6"/><path d="M4 26 L28 4.5 Q31 2.5 34.5 4.5 L37 7 Q37.5 10 35 12.5 L20 33"/><path d="M10 13.5 L5.5 9 L10 5.5 L14.5 10.5"/><path d="M25 12 L27.5 15 M28.5 9 L31 12 M32 6 L34.5 9"/><path d="M12.5 28.6 L21 37.5"/></g></svg>
<span class="t " style="left:1209.0px;top:113.5px;line-height:20px;font-size:15px;color:#1a1a1a;">打磨</span>
<svg style="left:1249px;top:71px" width="40" height="40" viewBox="0 0 40 40"><path d="M2.5 10.5 L15.5 16.4 L2.5 22.3Z" fill="#e8101c"/><g fill="none" stroke="#35a3d2" stroke-width="1.6" stroke-linejoin="round"><path d="M17 15 H20 V13.5 H35 Q38 14 37.5 18 L34.5 19.5 L35.5 33 H29.5 L28.5 22 Q26 21.5 25 19.5 H20 V18 H17Z"/><path d="M10 33.5 Q16 35 18 30 Q20 25 24 27.5 Q26 29.5 24.5 32.5"/></g><rect x="24.8" y="3.2" width="9" height="7.4" fill="#8a8a8a"/><path d="M24.8 5.2 H33.8 M24.8 7.6 H33.8" stroke="#d8d8d8" stroke-width=".9"/><path d="M25.5 10.6 H33 L31.5 13.5 H27Z" fill="#e8101c"/></svg>
<span class="t " style="left:1255.0px;top:113.5px;line-height:20px;font-size:15px;color:#1a1a1a;">喷涂</span>
<svg style="left:1310px;top:71px" width="40" height="40" viewBox="0 0 40 40"><path d="M2 35.4 L4.5 27 L8 26 L7 22 L11.5 20 L14.5 8 L17 6.5 L30.5 16 L32 20 L30 22 L27.5 17.5 L18 11.5 L16.5 21 L19.5 23 L18 27.5 L22 29 L22 35.4Z" fill="#35a3d2"/><rect x="24.5" y="27.5" width="14.5" height="8" fill="#fff" stroke="#bbb" stroke-width=".7"/><rect x="26" y="25.6" width="11.5" height="2.4" fill="#555"/><path d="M28 25.6 L31 23 L34 25.6Z" fill="#e8101c"/></svg>
<span class="t " style="left:1301.0px;top:113.5px;line-height:20px;font-size:15px;color:#1a1a1a;">电弧增材</span>
<svg style="left:1386px;top:71px" width="40" height="40" viewBox="0 0 40 40"><rect x="3.6" y="13.4" width="34.8" height="20.4" fill="#f4fbfd" stroke="#6cc4e0" stroke-width="1.2"/><path d="M3.6 13.4 V33.8 M38.4 13.4 V33.8" stroke="#e04050" stroke-width="1.2"/><path d="M8 19 Q13 20 15 27 Q18 33 24 29 Q30 26 34 31" fill="none" stroke="#8ab8d0" stroke-width=".9"/><circle cx="8.5" cy="19" r=".9" fill="#e8101c"/><circle cx="14" cy="24.5" r=".9" fill="#e8101c"/><circle cx="21" cy="30.5" r=".9" fill="#e8101c"/><circle cx="33.5" cy="30.5" r=".9" fill="#e8101c"/><path d="M18 33.8 V37 H13.5 V39 H28.5 V37 H24 V33.8" fill="#fff" stroke="#6cc4e0" stroke-width="1.1"/><path d="M18.5 2.4 H24.5 V6 H27.5 V10.5 H25.5 V14 L23 17 H20.5 L17.5 14 V10.5 H15.8 V6 H18.5Z" fill="#1f8cb0" stroke="#0f6f96" stroke-width=".6"/><path d="M15.8 8.2 H27.5" stroke="#7cd0e6" stroke-width="1"/><path d="M21.7 17 V21.5" stroke="#f6c21a" stroke-width="1.4"/></svg>
<span class="t " style="left:1377.0px;top:113.5px;line-height:20px;font-size:15px;color:#1a1a1a;">激光切割</span>
<svg style="left:1447px;top:71px" width="40" height="40" viewBox="0 0 40 40"><g fill="#f4fbfd" stroke="#4cb8dc" stroke-width="1.2" stroke-linejoin="round"><path d="M2 30 L26 15 L40 17 L40 20.5 L16 34.6 L2 33.5Z"/><path d="M2 30 L16 31 L40 17 M16 31 V34.6"/><path d="M14 22 L28 6 L31 6.6 L31 18 L17 32 L14 31.5Z"/><path d="M14 22 L17 22.6 L31 6.6 M17 22.6 V32"/></g><path d="M18.5 30 L30 18" stroke="#9a9a9a" stroke-width="4" stroke-dasharray="1.4 1"/></svg>
<span class="t " style="left:1453.0px;top:113.5px;line-height:20px;font-size:15px;color:#1a1a1a;">焊接</span>
<svg style="left:1499px;top:71px" width="40" height="40" viewBox="0 0 40 40"><path d="M5 5 H10 V30.5 H38.4 V35 H3.4 V30.5 H5Z" fill="#1fb6d8" stroke="#0e86ad" stroke-width=".8"/><path d="M33 3.5 L36.5 7 L21.5 21.5 L18 18Z" fill="url(#gG)" stroke="#777" stroke-width=".6"/><path d="M16.5 13 L18.5 18 L23.5 16.5 L21.5 21 L26 23.5 L21 25 L22 30 L17.5 27 L14 31 L13.5 26 L8.5 26 L12 22.5 L9 18.5 L14 19Z" fill="#f05a14"/><circle cx="16.5" cy="22.6" r="4.6" fill="#ffd21e"/><circle cx="16.5" cy="22.6" r="2.2" fill="#fff6b0"/></svg>
<span class="t " style="left:1503.0px;top:113.5px;line-height:20px;font-size:15px;color:#1a1a1a;letter-spacing:0.02px;">Weld</span>
<span class="t " style="left:1503.0px;top:133.5px;line-height:20px;font-size:15px;color:#1a1a1a;letter-spacing:-0.26px;">Bead</span>
<svg style="left:1557px;top:71px" width="40" height="40" viewBox="0 0 40 40"><path d="M3 12.5 L20 5 L21.5 6 L21.5 22.5 L40 21.5 L40 25 L29 35.5 L3 35.5Z" fill="url(#gT2)" stroke="#0b6f9b" stroke-width=".8"/><path d="M3 12.5 L20 5 L20 23 L3 31Z" fill="#4fb8d6"/><path d="M20 23 L40 21.5 L29 31.5 L3 31Z" fill="#39a8c8"/><path d="M3 31 H29 L40 21.5 M29 31 V35.5" fill="none" stroke="#0b6f9b" stroke-width=".7"/><path d="M8 27.5 L22 20.5 L24.5 24 L10.5 31Z" fill="url(#gO)" stroke="#c8600a" stroke-width=".7"/><ellipse cx="9.2" cy="29.3" rx="1.6" ry="2.2" fill="#fff3c0" transform="rotate(-25 9.2 29.3)"/></svg>
<span class="t " style="left:1562.0px;top:113.5px;line-height:20px;font-size:15px;color:#1a1a1a;letter-spacing:0.05px;">Fillet</span>
<span class="t " style="left:1561.0px;top:133.5px;line-height:20px;font-size:15px;color:#1a1a1a;letter-spacing:0.02px;">Weld</span>
<svg style="left:1615px;top:71px" width="40" height="40" viewBox="0 0 40 40"><path d="M2 25.5 L14 12.5 L39.5 13 L39.5 19 L27 34 L2 33.5Z" fill="url(#gT2)" stroke="#0b6f9b" stroke-width=".8"/><path d="M2 25.5 L14 12.5 L39.5 13 L27 27Z" fill="#3fb0d0"/><path d="M2 25.5 L27 27 L39.5 13 M27 27 V34 M15 26.2 V33.8" fill="none" stroke="#0b6f9b" stroke-width=".7"/><path d="M11 26 L19.5 14 L30.5 12.8 L20 26.6 L15.5 31.5Z" fill="url(#gO)" stroke="#e06030" stroke-width=".7"/></svg>
<span class="t " style="left:1612.0px;top:113.5px;line-height:20px;font-size:15px;color:#1a1a1a;letter-spacing:-0.20px;">Groove</span>
<span class="t " style="left:1619.0px;top:133.5px;line-height:20px;font-size:15px;color:#1a1a1a;letter-spacing:0.02px;">Weld</span>
<svg style="left:1673px;top:71px" width="40" height="40" viewBox="0 0 40 40"><path d="M1.5 19 L12 16 L12 21.5 L1.5 24.5Z M1.5 24.5 L6 24 L12 21.5" fill="#2aa3c6"/><path d="M6 30 L14 22.5 L39.7 17 L39.7 26.5 L31.5 35.5 L6 36Z" fill="url(#gT2)" stroke="#0b6f9b" stroke-width=".7"/><path d="M6 30 L14 22.5 L39.7 17 L31.5 29.5Z" fill="#45b4d2"/><path d="M1.5 19 L12 9.5 L34 9 L34 17.5 L26 26 L1.5 26.5Z" fill="url(#gT2)" stroke="#0b6f9b" stroke-width=".7"/><path d="M1.5 19 L12 9.5 L34 9 L26 19Z" fill="#45b4d2"/><ellipse cx="18" cy="14" rx="4.2" ry="2.2" fill="#f8c21e" stroke="#c8700a" stroke-width=".7"/><ellipse cx="16.5" cy="27.2" rx="4.2" ry="2.2" fill="#f8c21e" stroke="#c8700a" stroke-width=".7"/></svg>
<span class="t " style="left:1678.5px;top:113.5px;line-height:20px;font-size:15px;color:#1a1a1a;letter-spacing:0.04px;">Spot</span>
<span class="t " style="left:1677.0px;top:133.5px;line-height:20px;font-size:15px;color:#1a1a1a;letter-spacing:0.02px;">Weld</span>
<svg style="left:1735px;top:71px" width="40" height="40" viewBox="0 0 40 40"><circle cx="20" cy="20" r="19.6" fill="url(#rI)" stroke="#0b6e98" stroke-width=".8"/><circle cx="20" cy="20" r="17.6" fill="none" stroke="#e8f6fa" stroke-width="1.1"/><circle cx="20" cy="11" r="2.6" fill="#fff"/><rect x="18" y="16" width="4" height="15.5" rx="2" fill="#fff"/></svg>
<span class="t " style="left:1741.0px;top:113.5px;line-height:20px;font-size:15px;color:#1a1a1a;">关于</span>
<svg style="left:1781px;top:71px" width="40" height="40" viewBox="0 0 40 40"><circle cx="20" cy="20" r="19.6" fill="url(#rI)" stroke="#0b6e98" stroke-width=".8"/><circle cx="20" cy="20" r="17.6" fill="none" stroke="#e8f6fa" stroke-width="1.1"/><text x="20" y="29" font-size="27" font-weight="bold" fill="#fff" text-anchor="middle" font-family="Liberation Sans,sans-serif">?</text></svg>
<span class="t " style="left:1787.0px;top:113.5px;line-height:20px;font-size:15px;color:#1a1a1a;">帮助</span>
<div class="a" style="left:397px;top:71px;width:1px;height:106px;background:#d5d9de;"></div>
<div class="a" style="left:650px;top:71px;width:1px;height:106px;background:#d5d9de;"></div>
<div class="a" style="left:781px;top:71px;width:1px;height:106px;background:#d5d9de;"></div>
<div class="a" style="left:837px;top:71px;width:1px;height:106px;background:#d5d9de;"></div>
<div class="a" style="left:1150px;top:71px;width:1px;height:106px;background:#d5d9de;"></div>
<div class="a" style="left:1727px;top:71px;width:1px;height:106px;background:#d5d9de;"></div>
<div class="a" style="left:1827px;top:71px;width:1px;height:106px;background:#d5d9de;"></div>
<span class="t " style="left:178.0px;top:158.6px;line-height:20px;font-size:15px;color:#5a5a5a;">文件</span>
<span class="t " style="left:494.0px;top:158.6px;line-height:20px;font-size:15px;color:#5a5a5a;">仿真</span>
<span class="t " style="left:676.0px;top:158.6px;line-height:20px;font-size:15px;color:#5a5a5a;">机电建模</span>
<span class="t " style="left:961.5px;top:158.6px;line-height:20px;font-size:15px;color:#5a5a5a;">机器人</span>
<span class="t " style="left:1398.0px;top:158.6px;line-height:20px;font-size:15px;color:#5a5a5a;">工艺规划</span>
<span class="t " style="left:1753.0px;top:158.6px;line-height:20px;font-size:15px;color:#5a5a5a;">帮助</span>
<span class="t " style="left:786px;top:158.6px;line-height:20px;font-size:15px;color:#5a5a5a;letter-spacing:-0.13px;">通...</span>
<svg style="left:381px;top:163px" width="10" height="10" viewBox="0 0 9 9"><path d="M.5 6 V.5 H6" fill="none" stroke="#777" stroke-width="1"/><path d="M3 3 L8 8 M8 4 V8 H4" fill="none" stroke="#555" stroke-width="1.3"/><path d="M8 3.5 V8 H3.5Z" fill="#555"/></svg>
<svg style="left:635px;top:163px" width="10" height="10" viewBox="0 0 9 9"><path d="M.5 6 V.5 H6" fill="none" stroke="#777" stroke-width="1"/><path d="M3 3 L8 8 M8 4 V8 H4" fill="none" stroke="#555" stroke-width="1.3"/><path d="M8 3.5 V8 H3.5Z" fill="#555"/></svg>
<svg style="left:765px;top:163px" width="10" height="10" viewBox="0 0 9 9"><path d="M.5 6 V.5 H6" fill="none" stroke="#777" stroke-width="1"/><path d="M3 3 L8 8 M8 4 V8 H4" fill="none" stroke="#555" stroke-width="1.3"/><path d="M8 3.5 V8 H3.5Z" fill="#555"/></svg>
<svg style="left:821px;top:163px" width="10" height="10" viewBox="0 0 9 9"><path d="M.5 6 V.5 H6" fill="none" stroke="#777" stroke-width="1"/><path d="M3 3 L8 8 M8 4 V8 H4" fill="none" stroke="#555" stroke-width="1.3"/><path d="M8 3.5 V8 H3.5Z" fill="#555"/></svg>
<svg style="left:1134px;top:163px" width="10" height="10" viewBox="0 0 9 9"><path d="M.5 6 V.5 H6" fill="none" stroke="#777" stroke-width="1"/><path d="M3 3 L8 8 M8 4 V8 H4" fill="none" stroke="#555" stroke-width="1.3"/><path d="M8 3.5 V8 H3.5Z" fill="#555"/></svg>
<svg style="left:1711px;top:163px" width="10" height="10" viewBox="0 0 9 9"><path d="M.5 6 V.5 H6" fill="none" stroke="#777" stroke-width="1"/><path d="M3 3 L8 8 M8 4 V8 H4" fill="none" stroke="#555" stroke-width="1.3"/><path d="M8 3.5 V8 H3.5Z" fill="#555"/></svg>
<svg style="left:1811px;top:163px" width="10" height="10" viewBox="0 0 9 9"><path d="M.5 6 V.5 H6" fill="none" stroke="#777" stroke-width="1"/><path d="M3 3 L8 8 M8 4 V8 H4" fill="none" stroke="#555" stroke-width="1.3"/><path d="M8 3.5 V8 H3.5Z" fill="#555"/></svg>
<svg style="left:8px;top:192px" width="5" height="20" viewBox="0 0 5 20"><path d="M2.2 2 V19" stroke="#4a4088" stroke-width="1.8" stroke-dasharray="1.8 2.2"/></svg>
<div class="a" style="left:17px;top:190px;width:27px;height:25px;background:#fce38e;border:1px solid #ecc850;"></div>
<svg style="left:19px;top:190.5px" width="22" height="22" viewBox="-11 -11 22 22"><path d="M-8.6 -8.4 L-8.6 6.6 L-5 3.4 L-2.4 9 L.4 7.8 L-2.2 2.4 L2 2Z" fill="#23a9e6" stroke="#1383bd" stroke-width=".6"/><path d="M3.6 -7.6 Q8 -7.6 8 -3.2 Q8 -.6 6 1.2 V3.4 H1.4 V1.2 Q-.8 -.6 -.8 -3.2 Q-.8 -7.6 3.6 -7.6Z" fill="#fde04a" stroke="#e8b020" stroke-width=".6"/><path d="M1.6 4.6 H5.8 M2 6.4 H5.4" stroke="#9a8a60" stroke-width="1.1"/><path d="M2.2 -1.4 L3.6 1 L5 -1.4" fill="none" stroke="#e89a10" stroke-width=".8"/></svg>
<svg style="left:46.8px;top:191px" width="22" height="22" viewBox="-11 -11 22 22"><path d="M-2.4 -8 H2.4 V-2.4 H8 V2.4 H2.4 V8 H-2.4 V2.4 H-8 V-2.4 H-2.4Z" fill="#b4b4b4" stroke="#9c9c9c" stroke-width=".7"/><path d="M-1.2 -7 V-1.4 H-7" fill="none" stroke="#dcdcdc" stroke-width="1.2"/></svg>
<svg style="left:74.8px;top:191.2px" width="22" height="22" viewBox="-11 -11 22 22"><rect x="-9" y="-2.6" width="18" height="5.2" rx="1.2" fill="#b4b4b4" stroke="#9c9c9c" stroke-width=".7"/><path d="M-8 -1.4 H8" stroke="#d8d8d8" stroke-width="1.1"/></svg>
<svg style="left:102.2px;top:191.2px" width="22" height="22" viewBox="-11 -11 22 22"><rect x="-8" y="-6" width="15" height="15" fill="none" stroke="#1f8fc8" stroke-width="2" stroke-dasharray="2.2 1.6"/><path d="M-5 3 H2 M-1.5 -.5 V6.5 M2.5 -5.5 H8.5 M5.5 -8.5 V-2.5" stroke="#d81e2c" stroke-width="1.4"/></svg>
<svg style="left:130px;top:200px" width="8" height="6" viewBox="0 0 8 6"><path d="M.8 1 H7 L3.9 4.8Z" fill="#444"/></svg>
<svg style="left:146px;top:190.8px" width="22" height="22" viewBox="-11 -11 22 22"><circle r="8.6" fill="none" stroke="#2a9fd0" stroke-width="2" stroke-dasharray="2 1.9"/></svg>
<div class="a" style="left:175px;top:192px;width:1px;height:20px;background:#c3c7cc;"></div>
<svg style="left:181.8px;top:190.5px" width="22" height="22" viewBox="-11 -11 22 22"><rect x="-9.6" y="-2" width="10.6" height="12" fill="#999"/><path d="M-6.6 -2 V10 M-3 -2 V10" stroke="#bbb" stroke-width="1"/><path d="M.6 -9.6 H10 L6.6 -5.4 V-.6 H4.2 V-5.4Z" fill="#9c9c9c"/></svg>
<div class="a" style="left:208px;top:190px;width:165px;height:25px;background:#f0f0f0;border:1px solid #e2e4e6;"></div>
<svg style="left:358px;top:198px" width="10" height="6" viewBox="0 0 10 6"><path d="M1 1 H9 L5 5Z" fill="#b9b9b9"/></svg>
<div class="a" style="left:375px;top:190px;width:27px;height:25px;background:#fce38e;border:1px solid #ecc850;"></div>
<svg style="left:377px;top:189.6px" width="22" height="22" viewBox="-11 -11 22 22"><path d="M-9.6 1 L-2 -6.4 L2 -9 L9.2 -7.4 L6 -2.4 L9.4 3.4 L.6 8.8 L-4 6.6Z" fill="#1f8fc8"/><path d="M-4.6 -3.4 L6 -2.4 L9.4 3.4 L.6 8.2Z" fill="url(#gO)"/><path d="M-9.6 1 L-4.6 -3.4 L.6 8.2 L-4 6.6Z" fill="#56b8e4"/><path d="M-2 -6.4 L2 -9 L9.2 -7.4 L6 -2.4 L3.4 -2.6 L3.4 2 H1.6 V-3Z" fill="#1a7cb0"/></svg>
<div class="a" style="left:403px;top:190px;width:166px;height:25px;background:#fff;border:1px solid #cdd1d6;"></div>
<svg style="left:553px;top:198px" width="10" height="6" viewBox="0 0 10 6"><path d="M1 1 H9 L5 5.4Z" fill="#222"/></svg>
<svg style="left:571px;top:190.5px" width="22" height="22" viewBox="-11 -11 22 22"><path d="M-8 -6 H8 M-8 -.6 H8" stroke="#a9a9a9" stroke-width="1.1"/><circle cx="-3" cy="-6" r="1.8" fill="#e3e7ea" stroke="#a9a9a9"/><circle cx="3" cy="-6" r="1.8" fill="#e3e7ea" stroke="#a9a9a9"/><path d="M-9 -.6 L-6.5 -2.4 V1.2Z M9 -.6 L6.5 -2.4 V1.2Z" fill="#a9a9a9"/><path d="M0 5 H9 M0 7.6 H9" stroke="#a9a9a9" stroke-width="1.2" stroke-dasharray="2.4 .8"/></svg>
<svg style="left:599.5px;top:190.5px" width="22" height="22" viewBox="-11 -11 22 22"><circle cx="0" cy="-3.4" r="6" fill="#d0d2d4" stroke="#bcbcbc" stroke-width="1"/><path d="M0 -7 V-3 H3" fill="none" stroke="#e8e8e8" stroke-width="1"/><path d="M-9 2.6 H9" stroke="#a9a9a9" stroke-width="1.2"/><path d="M-9.6 2.6 L-7 .8 V4.4Z M9.6 2.6 L7 .8 V4.4Z" fill="#a9a9a9"/><path d="M.6 5.6 H9.6 M.6 8 H9.6" stroke="#a9a9a9" stroke-width="1.2" stroke-dasharray="2.4 .8"/></svg>
<div class="a" style="left:629px;top:192px;width:1px;height:20px;background:#c3c7cc;"></div>
<svg style="left:636px;top:190.5px" width="22" height="22" viewBox="-11 -11 22 22"><path d="M-7.6 -4 H-1.6 M-7.6 -.4 H-1.6 M-7.6 3.2 H-1.6 M-7.6 6.8 H-1.6" stroke="#a9a9a9" stroke-width="2.4"/><path d="M-4 -6 L-1.5 -3.5 L-.2 -7" fill="none" stroke="#a9a9a9" stroke-width="1"/><path d="M1.2 -1.2 L1.2 6.2 L3 4.6 L4.4 7.6 L5.8 7 L4.4 4 L6.6 3.8Z" fill="#e0e2e4" stroke="#c4c4c4" stroke-width=".6"/></svg>
<svg style="left:663.5px;top:190.5px" width="22" height="22" viewBox="-11 -11 22 22"><path d="M-7.6 -4 H-1.6 M-7.6 -.4 H-1.6 M-7.6 3.2 H-1.6 M-7.6 6.8 H-1.6" stroke="#a9a9a9" stroke-width="2.4"/><path d="M-4 -6 L-1.5 -3.5 L-.2 -7" fill="none" stroke="#a9a9a9" stroke-width="1"/><path d="M1.2 -1.2 L1.2 6.2 L3 4.6 L4.4 7.6 L5.8 7 L4.4 4 L6.6 3.8Z" fill="#e0e2e4" stroke="#c4c4c4" stroke-width=".6"/></svg>
<svg style="left:691.7px;top:190.5px" width="22" height="22" viewBox="-11 -11 22 22"><path d="M-7 -4 H-1.6 M-7 -.4 H-1.6 M-7 3.2 H-1.6 M-7 6.8 H-1.6" stroke="#1f8fc8" stroke-width="2.6"/><circle cx="-2.2" cy="-4" r="1.7" fill="#d81e2c"/><circle cx="-2.2" cy="-.4" r="1.7" fill="#d81e2c"/><circle cx="-2.2" cy="3.2" r="1.7" fill="#d81e2c"/><circle cx="-2.2" cy="6.8" r="1.7" fill="#d81e2c"/><path d="M1.2 -1.2 L1.2 6.2 L3 4.6 L4.4 7.6 L5.8 7 L4.4 4 L6.6 3.8Z" fill="#e8f0f6" stroke="#a4b8c8" stroke-width=".6"/></svg>
<svg style="left:719.5px;top:190.5px" width="22" height="22" viewBox="-11 -11 22 22"><path d="M-7.6 -4 H-1.6 M-7.6 -.4 H-1.6 M-7.6 3.2 H-1.6 M-7.6 6.8 H-1.6" stroke="#a9a9a9" stroke-width="2.4"/><path d="M-4 -6 L-1.5 -3.5 L-.2 -7" fill="none" stroke="#a9a9a9" stroke-width="1"/><path d="M1.2 -1.2 L1.2 6.2 L3 4.6 L4.4 7.6 L5.8 7 L4.4 4 L6.6 3.8Z" fill="#e0e2e4" stroke="#c4c4c4" stroke-width=".6"/></svg>
<svg style="left:747.8px;top:190.5px" width="22" height="22" viewBox="-11 -11 22 22"><path d="M-1.4 -7 L6.4 .4 L2.4 .8 L4.6 5.6 L2.4 6.6 L.2 1.8 L-1.4 3.6Z" fill="#d81e2c"/><path d="M-5.6 -8.2 L-5.6 4.4 L-2.8 2 L-.6 7 L1.8 6 L-.4 1.2 L3.6 .8Z" fill="#1f8fd8" stroke="#1572b0" stroke-width=".5"/></svg>
<svg style="left:776px;top:190.5px" width="22" height="22" viewBox="-11 -11 22 22"><rect x="-7.6" y="-8" width="15.6" height="4.8" fill="#fbd84a" stroke="#e0a020" stroke-width=".6"/><path d="M-5 -5.6 H4" stroke="#d81e2c" stroke-width="1.6"/><path d="M3 -8 L7 -5.6 L3 -3.2Z" fill="#d81e2c"/><rect x="-7.6" y="-1.8" width="15.6" height="4" fill="#eceef0" stroke="#b8b8b8" stroke-width=".7"/><rect x="-7.6" y="3.8" width="15.6" height="4" fill="#eceef0" stroke="#b8b8b8" stroke-width=".7"/></svg>
<svg style="left:804.6px;top:190.5px" width="22" height="22" viewBox="-11 -11 22 22"><path d="M-9.6 -7.6 H4 V6 H-9.6Z" fill="#1f9fd0"/><path d="M-9.6 -7.6 L-5.4 -3.6 V9 L-9.6 6Z" fill="#0f78a8"/><rect x="-5.4" y="-3.6" width="13.6" height="12.6" fill="#fbc02a" stroke="#e09010" stroke-width=".6"/><rect x="-3" y="-1.4" width="9.6" height="8" fill="none" stroke="#d81e2c" stroke-width="1.4" stroke-dasharray="2.4 1.4"/><path d="M4.4 2 L4.4 9 L6 7.6 L7.4 10 L8.6 9.4 L7.4 7 L9.6 6.8Z" fill="#d81e2c"/></svg>
<svg style="left:832px;top:190.5px" width="22" height="22" viewBox="-11 -11 22 22"><rect x="-3" y="-9.6" width="12" height="19" fill="#2a90b8"/><circle cx="-1.6" cy="1" r="7.6" fill="#f8c84a" stroke="#c89020" stroke-width=".6"/><path d="M-9.2 1 A7.6 7.6 0 0 0 6 1Z" fill="#3aa88a"/><path d="M-6 -5 Q-1 -8 4.4 -4 L1 -.6 Q-2 -3 -6 -1.6Z" fill="#f0a080" stroke="#c06040" stroke-width=".5"/></svg>
<svg style="left:860px;top:190.5px" width="22" height="22" viewBox="-11 -11 22 22"><path d="M-9 -3 H-5 V3.6 H1.6 V7.4 H-9Z" fill="#1f8fc8" stroke="#1572b0" stroke-width=".6"/><path d="M-9 7.4 H1.6 L1.6 9 H-9Z" fill="#d81e2c"/><circle cx="4.6" cy="-3.2" r="3.4" fill="#fbd84a" stroke="#f09010" stroke-width="1.6"/><path d="M4.6 -9.4 V-7.4 M4.6 1 V3 M-1.6 -3.2 H.4 M8.8 -3.2 H10.8 M.2 -7.6 L1.6 -6.2 M7.6 -.2 L9 1.2 M.2 1.2 L1.6 -.2 M7.6 -6.2 L9 -7.6" stroke="#f09010" stroke-width="1.5"/><path d="M-7.4 4.6 L-7.4 9.6 L-6 8.6 L-5 10.6 L-4 10 L-5 8 L-3.4 7.8Z" fill="#fff" stroke="#888" stroke-width=".5"/></svg>
<div class="a" style="left:889px;top:192px;width:1px;height:20px;background:#c3c7cc;"></div>
<svg style="left:895.7px;top:190.5px" width="22" height="22" viewBox="-11 -11 22 22"><circle r="8.6" fill="none" stroke="#a9a9a9" stroke-width="1.3"/><path d="M-2.6 -5 L-2.6 3.6 L-.6 1.8 L1 5.2 L2.6 4.4 L1 1 L3.8 .8Z" fill="#c4c4c4" stroke="#a9a9a9" stroke-width=".5"/><path d="M0 -10 L1.4 -8.2 H-1.4Z M0 10 L1.4 8.2 H-1.4Z M-10 0 L-8.2 -1.4 V1.4Z M10 0 L8.2 -1.4 V1.4Z" fill="#a9a9a9"/></svg>
<svg style="left:923px;top:190.5px" width="22" height="22" viewBox="-11 -11 22 22"><path d="M-5 5 V-6 M-4 -6.6 Q4.6 -8 4.6 0 V8" fill="none" stroke="#a9a9a9" stroke-width="1.1"/><path d="M4.6 -4 V8" stroke="#a9a9a9" stroke-width="1" stroke-dasharray="1 1.4"/><circle cx="-5" cy="4.6" r="1.1" fill="#888"/><circle cx="-5" cy="-6.4" r="1.1" fill="#888"/><rect x="3.6" y="7" width="2.2" height="2.2" fill="#888"/></svg>
<svg style="left:952px;top:190.8px" width="22" height="22" viewBox="-11 -11 22 22"><rect x="-8" y="-5" width="12.6" height="12.6" fill="#fafafa" stroke="#b4b4b4" stroke-width=".9"/><rect x="-4.4" y="-8" width="12.6" height="12.6" fill="#fafafa" stroke="#b4b4b4" stroke-width=".9"/><rect x="-5.6" y="-4.6" width="9" height="8.6" fill="#5a5a5a"/></svg>
<div class="a" style="left:978px;top:189.5px;width:165px;height:25px;background:#f0f0f0;border:1px solid #dcdfe3;"></div>
<span class="t " style="left:982.4px;top:192.4px;line-height:20px;font-size:16px;color:#7d858f;letter-spacing:-0.46px;">Normal</span>
<svg style="left:1128px;top:198px" width="10" height="6" viewBox="0 0 10 6"><path d="M1 1 H9 L5 5Z" fill="#b9b9b9"/></svg>
<svg style="left:1146px;top:190.5px" width="22" height="22" viewBox="-11 -11 22 22"><path d="M-6.4 -8 L-6.4 4 L-3.4 1.4 L-1 6.4 L1.4 5.4 L-1 .4 L3.2 0Z" fill="#b0b0b0"/><path d="M.6 2 L6 7.2 Q7.6 9 5.6 10 Q3.4 10.6 2 8.6 L-.6 4.6Z" fill="#f4f4f4" stroke="#c4c4c4" stroke-width=".7"/></svg>
<svg style="left:1175px;top:190.5px" width="22" height="22" viewBox="-11 -11 22 22"><circle cx="2.6" cy="-2.6" r="3.6" fill="none" stroke="#a9a9a9" stroke-width="2.2"/><path d="M2.6 -9.4 V-7 M2.6 1.8 V4.2 M-4.2 -2.6 H-1.8 M7 -2.6 H9.4 M-2.2 -7.4 L-.6 -5.8 M5.8 .6 L7.4 2.2 M-2.2 2.2 L-.6 .6 M5.8 -5.8 L7.4 -7.4" stroke="#a9a9a9" stroke-width="2"/><path d="M-8.4 -1 L-8.4 8 L-6.2 6.2 L-4.6 9.6 L-2.8 8.8 L-4.4 5.4 L-1.4 5.2Z" fill="#a4a4a4"/></svg>
<svg style="left:1203px;top:190.5px" width="22" height="22" viewBox="-11 -11 22 22"><circle r="8.8" fill="#dcdee0" stroke="#a9a9a9" stroke-width="1.4"/><path d="M-3 -5.6 L5.4 0 L-3 5.6Z" fill="#b4b4b4" stroke="#a0a0a0" stroke-width=".6"/></svg>
<svg style="left:1230.7px;top:190.5px" width="22" height="22" viewBox="-11 -11 22 22"><circle cx="-8" cy="-2" r="1.4" fill="#a9a9a9"/><circle cx="-2.4" cy="-6" r="1.4" fill="#a9a9a9"/><circle cx="-2.2" cy="1" r="2" fill="#a9a9a9"/><circle cx="3.6" cy="-1.8" r="1.4" fill="#a9a9a9"/><circle cx="8.4" cy="-3.2" r="1.3" fill="#a9a9a9"/><circle cx="4.6" cy="5" r="1.4" fill="#a9a9a9"/></svg>
<svg style="left:1259px;top:190.5px" width="22" height="22" viewBox="-11 -11 22 22"><path d="M-9.6 8.6 L7 -7" stroke="#a9a9a9" stroke-width="1.3"/><circle cx="7.2" cy="-7.2" r="2.2" fill="#bcbcbc" stroke="#a0a0a0" stroke-width=".5"/></svg>
<svg style="left:1287px;top:190.5px" width="22" height="22" viewBox="-11 -11 22 22"><path d="M-9 8.6 L9 -8.6" stroke="#a9a9a9" stroke-width="1.3"/><circle cx="0" cy="-.6" r="2.2" fill="#bcbcbc" stroke="#a0a0a0" stroke-width=".5"/></svg>
<svg style="left:1315px;top:190.8px" width="22" height="22" viewBox="-11 -11 22 22"><circle r="8.6" fill="none" stroke="#a9a9a9" stroke-width="1.3"/><circle r="1.8" fill="#a9a9a9"/></svg>
<svg style="left:1343px;top:190.8px" width="22" height="22" viewBox="-11 -11 22 22"><circle r="8.6" fill="none" stroke="#a9a9a9" stroke-width="1.3"/><circle cx="0" cy="-8.6" r="1.5" fill="#a9a9a9"/><circle cx="0" cy="8.6" r="1.5" fill="#a9a9a9"/><circle cx="-8.6" cy="0" r="1.5" fill="#a9a9a9"/><circle cx="8.6" cy="0" r="1.5" fill="#a9a9a9"/></svg>
<svg style="left:1371px;top:190.5px" width="22" height="22" viewBox="-11 -11 22 22"><path d="M-8 2 Q-5 -10 -1 0 Q3 12 7.6 -1" fill="none" stroke="#a9a9a9" stroke-width="1.3"/><circle cx="-3.4" cy="-7.4" r="1" fill="#a9a9a9"/><circle cx="3.4" cy="7.4" r="1.2" fill="#a9a9a9"/><circle cx="-8" cy="2" r="1.2" fill="#a9a9a9"/><circle cx="7.6" cy="-1" r="1.2" fill="#a9a9a9"/></svg>
<svg style="left:1399px;top:190.5px" width="22" height="22" viewBox="-11 -11 22 22"><path d="M-8.4 2.4 Q-6 -9 -1 0 Q3.4 8.4 8 -2" fill="none" stroke="#a9a9a9" stroke-width="1.5"/><circle cx="-4.4" cy="-4.6" r="1.8" fill="#bcbcbc"/><circle cx="-8.2" cy="2.4" r="1.2" fill="#a9a9a9"/><circle cx="8" cy="-2" r="1.2" fill="#a9a9a9"/></svg>
<svg style="left:1427px;top:190.5px" width="22" height="22" viewBox="-11 -11 22 22"><path d="M-9.6 -3.4 Q-1 -9.6 2 -2 Q4 2 4.4 7.4" fill="none" stroke="#a9a9a9" stroke-width="1.4"/><path d="M9.6 -3.4 Q1 -9.6 -2 -2 Q-4 2 -4.4 7.4" fill="none" stroke="#a9a9a9" stroke-width="1.4"/></svg>
<svg style="left:1455px;top:190.5px" width="22" height="22" viewBox="-11 -11 22 22"><path d="M-9 8.6 L9.4 -8.4" stroke="#a9a9a9" stroke-width="1.3"/><circle cx="5.6" cy="-5" r="2.2" fill="#bcbcbc" stroke="#a0a0a0" stroke-width=".5"/></svg>
<svg style="left:1482.6px;top:190.5px" width="22" height="22" viewBox="-11 -11 22 22"><path d="M-9.4 -2 L1 -7.4 L9.6 -1 L-1 6Z" fill="#c4c4c4" stroke="#9c9c9c" stroke-width=".7"/><path d="M-6 -3.8 L4 3 M-2.6 -5.4 L7 1 M-5.6 .4 L5.4 -4.4 M-3 3.6 L8 -2.4" stroke="#8e8e8e" stroke-width=".6"/><path d="M-9.4 -2 L-1 6 L9.6 -1 L9 1.4 L-1 8.6 L-9 .6Z" fill="#a8a8a8"/></svg>
<svg style="left:1510.8px;top:190.5px" width="22" height="22" viewBox="-11 -11 22 22"><path d="M-9.4 -2 L1 -7.4 L9.6 -1 L-1 6Z" fill="#c4c4c4" stroke="#9c9c9c" stroke-width=".7"/><path d="M-6 -3.8 L4 3 M-2.6 -5.4 L7 1 M-5.6 .4 L5.4 -4.4 M-3 3.6 L8 -2.4" stroke="#8e8e8e" stroke-width=".6"/><path d="M-9.4 -2 L-1 6 L9.6 -1 L9 1.4 L-1 8.6 L-9 .6Z" fill="#a8a8a8"/></svg>
<span class="t " style="left:11px;top:222.0px;line-height:20px;font-size:15px;color:#3c3c3c;">机电建模</span>
<svg style="left:400px;top:222px" width="48" height="16" viewBox="400 222 48 16">
<rect x="406.6" y="227.2" width="11.4" height="7.6" rx="1.5" fill="#fff" stroke="#a9adb3" stroke-width="1.2"/><rect x="409.4" y="229.8" width="5.8" height="2.6" fill="#c3c6cb"/>
<path d="M430.6 226 L441.6 234 M441.6 226 L430.6 234" stroke="#a9adb3" stroke-width="4.8" stroke-linecap="square"/><path d="M430.6 226 L441.6 234 M441.6 226 L430.6 234" stroke="#fff" stroke-width="2.6" stroke-linecap="square"/>
</svg>
<div class="a" style="left:7px;top:244px;width:443px;height:1px;background:#c5c9cf;"></div>
<div class="a" style="left:44px;top:245px;width:408px;height:1064px;border-left:1px solid #cfd3d8;border-bottom:1px solid #c5c9cf;border-right:1px solid #cfd3d8;"></div>
<div class="a" style="left:446px;top:245px;width:6px;height:1063px;background:#dde1e6;"></div>
<div class="a" style="left:7px;top:245px;width:38px;height:58px;background:#fdfdfd;border-bottom:1px solid #d5d8dc;"></div>
<svg style="left:10px;top:259px" width="30" height="30" viewBox="0 0 30 30"><path d="M3 2 H12 Q13.4 4 14.8 2 H27.6 V23.6 H3 V17 Q5.6 15 3 12.6Z" fill="none" stroke="#2888aa" stroke-width="2.2" stroke-linejoin="round"/><path d="M11 10.6 V19.6 H19.6 V14.6 L18.6 13.2 L19.8 11.8 V7.6" fill="none" stroke="#2888aa" stroke-width="1.9"/><circle cx="11" cy="9.2" r="2.3" fill="#1f8cc0"/><circle cx="19.8" cy="5.6" r="2.4" fill="url(#rR)"/><circle cx="23" cy="26" r="2.3" fill="url(#rO)" stroke="#d8760c" stroke-width=".5"/></svg>
<svg style="left:10px;top:318px" width="30" height="30" viewBox="0 0 30 30"><path d="M1.6 5.4 L10 1 L18 4.6 L18 11.6 L9.6 15.6 L1.6 12Z" fill="#dff1fa" stroke="#7cbcdc" stroke-width=".8"/><path d="M1.6 5.4 L9.6 8.6 L18 4.6 M9.6 8.6 V15.6" fill="none" stroke="#7cbcdc" stroke-width=".8"/><path d="M1.6 5.4 L10 1 L18 4.6 L9.6 8.6Z" fill="#36a8dc"/><path d="M19.6 13.6 H28 M9.6 18 V29.4 M9.6 24.6 H16.6" fill="none" stroke="#6e9ab8" stroke-width="1.3"/><rect x="20" y="20.6" width="7.4" height="5.4" fill="#fff" stroke="#6e9ab8" stroke-width="1.2"/></svg>
<svg style="left:10px;top:381px" width="30" height="24" viewBox="0 0 30 24"><path d="M14.6 6 V12 M6 17 V12 H23 V17" fill="none" stroke="#8aa8bc" stroke-width="1.2"/><rect x="9" y=".6" width="11.6" height="6.4" fill="url(#gT2)"/><rect x="1.6" y="16.6" width="12" height="6.6" fill="url(#gT2)"/><rect x="16.2" y="16.6" width="11.8" height="6.6" fill="#fff" stroke="#9cc4d8" stroke-width=".9"/></svg>
<svg style="left:10px;top:438px" width="30" height="30" viewBox="0 0 30 30"><rect x="1.4" y="1" width="27.6" height="28" fill="#d4eef8" stroke="#5aa8c8" stroke-width=".9"/><rect x="1.4" y="1" width="27.6" height="5.4" fill="url(#gT2)"/><path d="M6 13 L15.6 9 L23.4 12.4 L23.4 21 L14 25.4 L6 21.6Z" fill="#fbd42a" stroke="#e8901a" stroke-width=".8"/><path d="M6 13 L14 16.4 L23.4 12.4 M14 16.4 V25.4" fill="none" stroke="#e8901a" stroke-width=".8"/><path d="M6 13 L15.6 9 L23.4 12.4 L14 16.4Z" fill="#fde66a"/><path d="M6.6 24.6 L14 27.6 L23 24" fill="none" stroke="#e0584a" stroke-width="1"/></svg>
<svg style="left:10px;top:498px" width="30" height="30" viewBox="0 0 30 30"><rect x=".6" y=".6" width="28.8" height="28.8" fill="#cfeaf5" stroke="#4a9cc0" stroke-width=".8"/><path d="M.6 10 Q6 2 11 9 Q16 18 21 15 Q26 11 29.4 16 V29.4 H.6Z" fill="url(#gT)" stroke="#2a7ca4" stroke-width=".6"/><path d="M.6 10 Q6 2 11 9 Q14 15 17 16 L.6 22Z" fill="#e4f4fa" opacity=".85"/><circle cx="20.6" cy="6.6" r="5.2" fill="url(#rO)" stroke="#e8901a" stroke-width=".6"/><path d="M.6 19 H10 V16 L16.6 21.6 L10 27.2 V24.2 H.6Z" fill="#f87a1e" stroke="#d8500a" stroke-width=".6"/></svg>
<svg style="left:10px;top:559px" width="30" height="27" viewBox="0 0 30 27"><circle cx="19" cy="7.6" r="5.8" fill="#fbb32a" stroke="#e8901a" stroke-width=".6"/><path d="M19 13 Q20 17 30 22.6 H10 Q17 17 17 13Z" fill="#fbb32a" stroke="#e8801a" stroke-width=".6"/><ellipse cx="11.6" cy="10.6" rx="5.6" ry="6.8" fill="url(#gT)" stroke="#1a7ca4" stroke-width=".6"/><path d="M9 16.4 Q8 20 .4 25.4 H23.6 Q15.4 20 14.6 16.4Z" fill="url(#gT)" stroke="#1a7ca4" stroke-width=".6"/></svg>
<div class="a" style="left:48px;top:248px;width:33px;height:29px;background:#fcfcfc;border:1px solid #d0d4d9;"></div>
<div class="a" style="left:83px;top:248px;width:33px;height:29px;background:#fcfcfc;border:1px solid #d0d4d9;"></div>
<div class="a" style="left:118px;top:248px;width:33px;height:29px;background:#fcfcfc;border:1px solid #d0d4d9;"></div>
<div class="a" style="left:396px;top:248px;width:33px;height:29px;background:#fcfcfc;border:1px solid #d0d4d9;"></div>
<div class="a" style="left:431px;top:248px;width:15px;height:29px;background:#fcfcfc;border:1px solid #d0d4d9;border-right:none;"></div>
<svg style="left:48px;top:248px" width="400" height="29" viewBox="48 248 400 29">
<path d="M54.6 263.6 L58.6 260 L62.6 264.6 L71.4 255.4 L74.6 258.6 L62.8 271.6Z" fill="#35c41a" stroke="#1e9a0c" stroke-width=".7"/>
<path d="M92 254 L99.4 259.6 L106.6 254 L109.4 257 L102.6 263 L109.4 269 L106.6 272 L99.4 266.4 L92 272 L89.2 269 L96 263 L89.2 257Z" fill="#ee2a22" stroke="#c0140e" stroke-width=".7"/>
<rect x="125.2" y="257.2" width="15" height="13.6" fill="none" stroke="#e02a2a" stroke-width="2.6"/>
<path d="M129.6 262 L132 259.6 L135 263.2 L142 255 L144.2 257.2 L135 267.6Z" fill="#35c41a" stroke="#1e9a0c" stroke-width=".5"/>
<circle cx="411.8" cy="262.2" r="7.6" fill="#fff" stroke="#9aa0a8" stroke-width="1"/><circle cx="411.8" cy="262.2" r="6.2" fill="#1c44b4"/><circle cx="411.8" cy="258.6" r="1.3" fill="#fff"/><rect x="410.6" y="260.8" width="2.4" height="6" fill="#fff"/>
<path d="M435 253.6 V270.4 H444" fill="none" stroke="#2aa8d8" stroke-width="1.6"/><path d="M437.6 256 L442 262.4 L437.6 268.6 M441 256 L445 262.4 L441 268.6" fill="none" stroke="#f0a030" stroke-width="1.3"/>
</svg>
<div class="a" style="left:50px;top:282px;width:396px;height:1014px;background:#fff;border:1px solid #c5cad1;"></div>
<div class="a" style="left:51px;top:334.5px;width:394px;height:23px;background:#f5f5f5"></div><div class="a" style="left:51px;top:380.5px;width:394px;height:23px;background:#f5f5f5"></div><div class="a" style="left:51px;top:426.5px;width:394px;height:23px;background:#f5f5f5"></div><div class="a" style="left:51px;top:472.5px;width:394px;height:23px;background:#f5f5f5"></div><div class="a" style="left:51px;top:518.5px;width:394px;height:23px;background:#f5f5f5"></div><div class="a" style="left:51px;top:564.5px;width:394px;height:23px;background:#f5f5f5"></div><div class="a" style="left:51px;top:610.5px;width:394px;height:23px;background:#f5f5f5"></div><div class="a" style="left:51px;top:656.5px;width:394px;height:23px;background:#f5f5f5"></div><div class="a" style="left:51px;top:702.5px;width:394px;height:23px;background:#f5f5f5"></div><div class="a" style="left:51px;top:748.5px;width:394px;height:23px;background:#f5f5f5"></div><div class="a" style="left:51px;top:794.5px;width:394px;height:23px;background:#f5f5f5"></div><div class="a" style="left:51px;top:840.5px;width:394px;height:23px;background:#f5f5f5"></div><div class="a" style="left:51px;top:886.5px;width:394px;height:23px;background:#f5f5f5"></div><div class="a" style="left:51px;top:932.5px;width:394px;height:23px;background:#f5f5f5"></div><div class="a" style="left:51px;top:978.5px;width:394px;height:23px;background:#f5f5f5"></div><div class="a" style="left:51px;top:1024.5px;width:394px;height:23px;background:#f5f5f5"></div><div class="a" style="left:51px;top:1070.5px;width:394px;height:23px;background:#f5f5f5"></div><div class="a" style="left:51px;top:1116.5px;width:394px;height:23px;background:#f5f5f5"></div><div class="a" style="left:51px;top:1162.5px;width:394px;height:23px;background:#f5f5f5"></div><div class="a" style="left:51px;top:1208.5px;width:394px;height:23px;background:#f5f5f5"></div><div class="a" style="left:51px;top:1254.5px;width:394px;height:23px;background:#f5f5f5"></div>
<div class="a" style="left:51px;top:283px;width:394px;height:28px;background:linear-gradient(#f9fafb,#eef0f4);border-bottom:2px solid #b4bccb;"></div>
<div class="a" style="left:270px;top:283px;width:1px;height:857px;background:#c9ceda;"></div>
<span class="t " style="left:57px;top:287.5px;line-height:20px;font-size:15px;color:#111;">名称</span>
<span class="t " style="left:277px;top:287.5px;line-height:20px;font-size:15px;color:#111;">类型</span>
<div class="a" style="left:69px;top:312px;width:377px;height:23px;background:#fde28c;border:1px solid #eea43c;border-top:1.5px solid #e08a20;"></div>
<div class="a" style="left:270px;top:313px;width:1px;height:21px;background:#e8d08a;"></div>
<svg style="left:72px;top:314.4px" width="21" height="17" viewBox="0 0 21 17"><path d="M1 3.4 Q1 1.6 2.8 1.6 H8.2 L10.4 3.8 H18.4 Q19.8 3.8 19.8 5.2 V14.8 Q19.8 16 18.4 16 H2.4 Q1 16 1 14.8Z" fill="#e8d890" stroke="#b8a45c" stroke-width=".9"/><path d="M1.4 7.4 Q1.4 6.4 2.6 6.4 H18.4 Q19.6 6.4 19.6 7.4 V14.8 Q19.6 15.8 18.4 15.8 H2.6 Q1.4 15.8 1.4 14.8Z" fill="#a8a860" stroke="#98965a" stroke-width=".7"/></svg>
<span class="t " style="left:95.6px;top:313.0px;line-height:22px;font-size:15px;color:#000;letter-spacing:-0.17px;">基本机电对象</span>
<svg style="left:56px;top:317.4px" width="8" height="12" viewBox="0 0 8 12"><path d="M1.6 1 L6.4 6 L1.6 11" fill="none" stroke="#9a9a9a" stroke-width="1.6"/></svg>
<svg style="left:72px;top:337.4px" width="21" height="17" viewBox="0 0 21 17"><path d="M1 3.4 Q1 1.6 2.8 1.6 H8.2 L10.4 3.8 H18.4 Q19.8 3.8 19.8 5.2 V14.8 Q19.8 16 18.4 16 H2.4 Q1 16 1 14.8Z" fill="#fbe9b4" stroke="#e0a63c" stroke-width=".9"/><path d="M1.4 7.4 Q1.4 6.4 2.6 6.4 H18.4 Q19.6 6.4 19.6 7.4 V14.8 Q19.6 15.8 18.4 15.8 H2.6 Q1.4 15.8 1.4 14.8Z" fill="url(#gF)" stroke="#e8a020" stroke-width=".7"/></svg>
<span class="t " style="left:95.6px;top:336.0px;line-height:22px;font-size:15px;color:#000;letter-spacing:-0.17px;">运动副和约束</span>
<svg style="left:53.6px;top:342.8px" width="12" height="9" viewBox="0 0 12 9"><path d="M1 1.6 L6 6.6 L11 1.6" fill="none" stroke="#333" stroke-width="1.9"/></svg>
<svg style="left:90px;top:358.6px" width="21" height="21" viewBox="0 0 21 21"><path d="M1.6 17.6 L6.4 12 L9 14.2 L4.2 19.6 Q2.6 20.4 1.6 19.4 Q1 18.4 1.6 17.6Z" fill="#fbb32a" stroke="#d88a10" stroke-width=".6"/><path d="M14.6 2.6 L17.2 .8 Q18.8 .2 19.6 1.6 Q20.2 3 19 4 L17 5.6Z" fill="#fbb32a" stroke="#d88a10" stroke-width=".6"/><path d="M6.6 5.4 L12.6 1.6 Q15.4 1 17.6 3.6 Q19.4 6.2 18.2 8.6 L13 14.6 Q10 16.2 7 13.6 Q4.4 10.6 5 7.6Z" fill="url(#gT)" stroke="#1272a0" stroke-width=".6"/><path d="M6.6 5.6 Q10 5 12.6 8.4 Q14.6 11.6 13 14.6" fill="none" stroke="#0d5f88" stroke-width=".7" opacity=".6"/></svg>
<span class="t " style="left:113px;top:359.0px;line-height:22px;font-size:15.5px;color:#1a1a1a;letter-spacing:-0.46px;">Jheadbody</span>
<span class="t " style="left:272px;top:359.0px;line-height:22px;font-size:15px;color:#000;letter-spacing:-0.33px;">铰链副</span>
<svg style="left:90px;top:381.6px" width="21" height="21" viewBox="0 0 21 21"><path d="M1.6 17.6 L6.4 12 L9 14.2 L4.2 19.6 Q2.6 20.4 1.6 19.4 Q1 18.4 1.6 17.6Z" fill="#fbb32a" stroke="#d88a10" stroke-width=".6"/><path d="M14.6 2.6 L17.2 .8 Q18.8 .2 19.6 1.6 Q20.2 3 19 4 L17 5.6Z" fill="#fbb32a" stroke="#d88a10" stroke-width=".6"/><path d="M6.6 5.4 L12.6 1.6 Q15.4 1 17.6 3.6 Q19.4 6.2 18.2 8.6 L13 14.6 Q10 16.2 7 13.6 Q4.4 10.6 5 7.6Z" fill="url(#gT)" stroke="#1272a0" stroke-width=".6"/><path d="M6.6 5.6 Q10 5 12.6 8.4 Q14.6 11.6 13 14.6" fill="none" stroke="#0d5f88" stroke-width=".7" opacity=".6"/></svg>
<span class="t " style="left:113px;top:382.0px;line-height:22px;font-size:15.5px;color:#1a1a1a;letter-spacing:-0.63px;">JbodyLarm1</span>
<span class="t " style="left:272px;top:382.0px;line-height:22px;font-size:15px;color:#000;letter-spacing:-0.33px;">铰链副</span>
<svg style="left:90px;top:404.6px" width="21" height="21" viewBox="0 0 21 21"><path d="M1.6 17.6 L6.4 12 L9 14.2 L4.2 19.6 Q2.6 20.4 1.6 19.4 Q1 18.4 1.6 17.6Z" fill="#fbb32a" stroke="#d88a10" stroke-width=".6"/><path d="M14.6 2.6 L17.2 .8 Q18.8 .2 19.6 1.6 Q20.2 3 19 4 L17 5.6Z" fill="#fbb32a" stroke="#d88a10" stroke-width=".6"/><path d="M6.6 5.4 L12.6 1.6 Q15.4 1 17.6 3.6 Q19.4 6.2 18.2 8.6 L13 14.6 Q10 16.2 7 13.6 Q4.4 10.6 5 7.6Z" fill="url(#gT)" stroke="#1272a0" stroke-width=".6"/><path d="M6.6 5.6 Q10 5 12.6 8.4 Q14.6 11.6 13 14.6" fill="none" stroke="#0d5f88" stroke-width=".7" opacity=".6"/></svg>
<span class="t " style="left:113px;top:405.0px;line-height:22px;font-size:15.5px;color:#1a1a1a;letter-spacing:-0.84px;">JLarm1Larm2</span>
<span class="t " style="left:272px;top:405.0px;line-height:22px;font-size:15px;color:#000;letter-spacing:-0.33px;">铰链副</span>
<svg style="left:90px;top:427.6px" width="21" height="21" viewBox="0 0 21 21"><path d="M1.6 17.6 L6.4 12 L9 14.2 L4.2 19.6 Q2.6 20.4 1.6 19.4 Q1 18.4 1.6 17.6Z" fill="#fbb32a" stroke="#d88a10" stroke-width=".6"/><path d="M14.6 2.6 L17.2 .8 Q18.8 .2 19.6 1.6 Q20.2 3 19 4 L17 5.6Z" fill="#fbb32a" stroke="#d88a10" stroke-width=".6"/><path d="M6.6 5.4 L12.6 1.6 Q15.4 1 17.6 3.6 Q19.4 6.2 18.2 8.6 L13 14.6 Q10 16.2 7 13.6 Q4.4 10.6 5 7.6Z" fill="url(#gT)" stroke="#1272a0" stroke-width=".6"/><path d="M6.6 5.6 Q10 5 12.6 8.4 Q14.6 11.6 13 14.6" fill="none" stroke="#0d5f88" stroke-width=".7" opacity=".6"/></svg>
<span class="t " style="left:113px;top:428.0px;line-height:22px;font-size:15.5px;color:#1a1a1a;letter-spacing:-0.84px;">JLarm2Larm3</span>
<span class="t " style="left:272px;top:428.0px;line-height:22px;font-size:15px;color:#000;letter-spacing:-0.33px;">铰链副</span>
<svg style="left:90px;top:450.6px" width="21" height="21" viewBox="0 0 21 21"><path d="M1.6 17.6 L6.4 12 L9 14.2 L4.2 19.6 Q2.6 20.4 1.6 19.4 Q1 18.4 1.6 17.6Z" fill="#fbb32a" stroke="#d88a10" stroke-width=".6"/><path d="M14.6 2.6 L17.2 .8 Q18.8 .2 19.6 1.6 Q20.2 3 19 4 L17 5.6Z" fill="#fbb32a" stroke="#d88a10" stroke-width=".6"/><path d="M6.6 5.4 L12.6 1.6 Q15.4 1 17.6 3.6 Q19.4 6.2 18.2 8.6 L13 14.6 Q10 16.2 7 13.6 Q4.4 10.6 5 7.6Z" fill="url(#gT)" stroke="#1272a0" stroke-width=".6"/><path d="M6.6 5.6 Q10 5 12.6 8.4 Q14.6 11.6 13 14.6" fill="none" stroke="#0d5f88" stroke-width=".7" opacity=".6"/></svg>
<span class="t " style="left:113px;top:451.0px;line-height:22px;font-size:15.5px;color:#1a1a1a;letter-spacing:-0.82px;">JLarm3Larm4</span>
<span class="t " style="left:272px;top:451.0px;line-height:22px;font-size:15px;color:#000;letter-spacing:-0.33px;">铰链副</span>
<svg style="left:90px;top:473.6px" width="21" height="21" viewBox="0 0 21 21"><path d="M1.6 17.6 L6.4 12 L9 14.2 L4.2 19.6 Q2.6 20.4 1.6 19.4 Q1 18.4 1.6 17.6Z" fill="#fbb32a" stroke="#d88a10" stroke-width=".6"/><path d="M14.6 2.6 L17.2 .8 Q18.8 .2 19.6 1.6 Q20.2 3 19 4 L17 5.6Z" fill="#fbb32a" stroke="#d88a10" stroke-width=".6"/><path d="M6.6 5.4 L12.6 1.6 Q15.4 1 17.6 3.6 Q19.4 6.2 18.2 8.6 L13 14.6 Q10 16.2 7 13.6 Q4.4 10.6 5 7.6Z" fill="url(#gT)" stroke="#1272a0" stroke-width=".6"/><path d="M6.6 5.6 Q10 5 12.6 8.4 Q14.6 11.6 13 14.6" fill="none" stroke="#0d5f88" stroke-width=".7" opacity=".6"/></svg>
<span class="t " style="left:113px;top:474.0px;line-height:22px;font-size:15.5px;color:#1a1a1a;letter-spacing:-0.84px;">JLarm4Larm5</span>
<span class="t " style="left:272px;top:474.0px;line-height:22px;font-size:15px;color:#000;letter-spacing:-0.33px;">铰链副</span>
<svg style="left:90px;top:496.6px" width="21" height="21" viewBox="0 0 21 21"><path d="M1.6 17.6 L6.4 12 L9 14.2 L4.2 19.6 Q2.6 20.4 1.6 19.4 Q1 18.4 1.6 17.6Z" fill="#fbb32a" stroke="#d88a10" stroke-width=".6"/><path d="M14.6 2.6 L17.2 .8 Q18.8 .2 19.6 1.6 Q20.2 3 19 4 L17 5.6Z" fill="#fbb32a" stroke="#d88a10" stroke-width=".6"/><path d="M6.6 5.4 L12.6 1.6 Q15.4 1 17.6 3.6 Q19.4 6.2 18.2 8.6 L13 14.6 Q10 16.2 7 13.6 Q4.4 10.6 5 7.6Z" fill="url(#gT)" stroke="#1272a0" stroke-width=".6"/><path d="M6.6 5.6 Q10 5 12.6 8.4 Q14.6 11.6 13 14.6" fill="none" stroke="#0d5f88" stroke-width=".7" opacity=".6"/></svg>
<span class="t " style="left:113px;top:497.0px;line-height:22px;font-size:15.5px;color:#1a1a1a;letter-spacing:-0.76px;">JbodyRarm1</span>
<span class="t " style="left:272px;top:497.0px;line-height:22px;font-size:15px;color:#000;letter-spacing:-0.33px;">铰链副</span>
<svg style="left:90px;top:519.6px" width="21" height="21" viewBox="0 0 21 21"><path d="M1.6 17.6 L6.4 12 L9 14.2 L4.2 19.6 Q2.6 20.4 1.6 19.4 Q1 18.4 1.6 17.6Z" fill="#fbb32a" stroke="#d88a10" stroke-width=".6"/><path d="M14.6 2.6 L17.2 .8 Q18.8 .2 19.6 1.6 Q20.2 3 19 4 L17 5.6Z" fill="#fbb32a" stroke="#d88a10" stroke-width=".6"/><path d="M6.6 5.4 L12.6 1.6 Q15.4 1 17.6 3.6 Q19.4 6.2 18.2 8.6 L13 14.6 Q10 16.2 7 13.6 Q4.4 10.6 5 7.6Z" fill="url(#gT)" stroke="#1272a0" stroke-width=".6"/><path d="M6.6 5.6 Q10 5 12.6 8.4 Q14.6 11.6 13 14.6" fill="none" stroke="#0d5f88" stroke-width=".7" opacity=".6"/></svg>
<span class="t " style="left:113px;top:520.0px;line-height:22px;font-size:15.5px;color:#1a1a1a;letter-spacing:-0.92px;">JRarm1Rarm2</span>
<span class="t " style="left:272px;top:520.0px;line-height:22px;font-size:15px;color:#000;letter-spacing:-0.33px;">铰链副</span>
<svg style="left:90px;top:542.6px" width="21" height="21" viewBox="0 0 21 21"><path d="M1.6 17.6 L6.4 12 L9 14.2 L4.2 19.6 Q2.6 20.4 1.6 19.4 Q1 18.4 1.6 17.6Z" fill="#fbb32a" stroke="#d88a10" stroke-width=".6"/><path d="M14.6 2.6 L17.2 .8 Q18.8 .2 19.6 1.6 Q20.2 3 19 4 L17 5.6Z" fill="#fbb32a" stroke="#d88a10" stroke-width=".6"/><path d="M6.6 5.4 L12.6 1.6 Q15.4 1 17.6 3.6 Q19.4 6.2 18.2 8.6 L13 14.6 Q10 16.2 7 13.6 Q4.4 10.6 5 7.6Z" fill="url(#gT)" stroke="#1272a0" stroke-width=".6"/><path d="M6.6 5.6 Q10 5 12.6 8.4 Q14.6 11.6 13 14.6" fill="none" stroke="#0d5f88" stroke-width=".7" opacity=".6"/></svg>
<span class="t " style="left:113px;top:543.0px;line-height:22px;font-size:15.5px;color:#1a1a1a;letter-spacing:-0.94px;">JRarm2Rarm3</span>
<span class="t " style="left:272px;top:543.0px;line-height:22px;font-size:15px;color:#000;letter-spacing:-0.33px;">铰链副</span>
<svg style="left:90px;top:565.6px" width="21" height="21" viewBox="0 0 21 21"><path d="M1.6 17.6 L6.4 12 L9 14.2 L4.2 19.6 Q2.6 20.4 1.6 19.4 Q1 18.4 1.6 17.6Z" fill="#fbb32a" stroke="#d88a10" stroke-width=".6"/><path d="M14.6 2.6 L17.2 .8 Q18.8 .2 19.6 1.6 Q20.2 3 19 4 L17 5.6Z" fill="#fbb32a" stroke="#d88a10" stroke-width=".6"/><path d="M6.6 5.4 L12.6 1.6 Q15.4 1 17.6 3.6 Q19.4 6.2 18.2 8.6 L13 14.6 Q10 16.2 7 13.6 Q4.4 10.6 5 7.6Z" fill="url(#gT)" stroke="#1272a0" stroke-width=".6"/><path d="M6.6 5.6 Q10 5 12.6 8.4 Q14.6 11.6 13 14.6" fill="none" stroke="#0d5f88" stroke-width=".7" opacity=".6"/></svg>
<span class="t " style="left:113px;top:566.0px;line-height:22px;font-size:15.5px;color:#1a1a1a;letter-spacing:-0.92px;">JRarm3Rarm4</span>
<span class="t " style="left:272px;top:566.0px;line-height:22px;font-size:15px;color:#000;letter-spacing:-0.33px;">铰链副</span>
<svg style="left:90px;top:588.6px" width="21" height="21" viewBox="0 0 21 21"><path d="M1.6 17.6 L6.4 12 L9 14.2 L4.2 19.6 Q2.6 20.4 1.6 19.4 Q1 18.4 1.6 17.6Z" fill="#fbb32a" stroke="#d88a10" stroke-width=".6"/><path d="M14.6 2.6 L17.2 .8 Q18.8 .2 19.6 1.6 Q20.2 3 19 4 L17 5.6Z" fill="#fbb32a" stroke="#d88a10" stroke-width=".6"/><path d="M6.6 5.4 L12.6 1.6 Q15.4 1 17.6 3.6 Q19.4 6.2 18.2 8.6 L13 14.6 Q10 16.2 7 13.6 Q4.4 10.6 5 7.6Z" fill="url(#gT)" stroke="#1272a0" stroke-width=".6"/><path d="M6.6 5.6 Q10 5 12.6 8.4 Q14.6 11.6 13 14.6" fill="none" stroke="#0d5f88" stroke-width=".7" opacity=".6"/></svg>
<span class="t " style="left:113px;top:589.0px;line-height:22px;font-size:15.5px;color:#1a1a1a;letter-spacing:-0.94px;">JRarm4Rarm5</span>
<span class="t " style="left:272px;top:589.0px;line-height:22px;font-size:15px;color:#000;letter-spacing:-0.33px;">铰链副</span>
<svg style="left:90px;top:611.6px" width="21" height="21" viewBox="0 0 21 21"><path d="M1.6 17.6 L6.4 12 L9 14.2 L4.2 19.6 Q2.6 20.4 1.6 19.4 Q1 18.4 1.6 17.6Z" fill="#fbb32a" stroke="#d88a10" stroke-width=".6"/><path d="M14.6 2.6 L17.2 .8 Q18.8 .2 19.6 1.6 Q20.2 3 19 4 L17 5.6Z" fill="#fbb32a" stroke="#d88a10" stroke-width=".6"/><path d="M6.6 5.4 L12.6 1.6 Q15.4 1 17.6 3.6 Q19.4 6.2 18.2 8.6 L13 14.6 Q10 16.2 7 13.6 Q4.4 10.6 5 7.6Z" fill="url(#gT)" stroke="#1272a0" stroke-width=".6"/><path d="M6.6 5.6 Q10 5 12.6 8.4 Q14.6 11.6 13 14.6" fill="none" stroke="#0d5f88" stroke-width=".7" opacity=".6"/></svg>
<span class="t " style="left:113px;top:612.0px;line-height:22px;font-size:15.5px;color:#1a1a1a;letter-spacing:-0.42px;">Jbodywaist</span>
<span class="t " style="left:272px;top:612.0px;line-height:22px;font-size:15px;color:#000;letter-spacing:-0.33px;">铰链副</span>
<svg style="left:90px;top:634.6px" width="21" height="21" viewBox="0 0 21 21"><path d="M1.6 17.6 L6.4 12 L9 14.2 L4.2 19.6 Q2.6 20.4 1.6 19.4 Q1 18.4 1.6 17.6Z" fill="#fbb32a" stroke="#d88a10" stroke-width=".6"/><path d="M14.6 2.6 L17.2 .8 Q18.8 .2 19.6 1.6 Q20.2 3 19 4 L17 5.6Z" fill="#fbb32a" stroke="#d88a10" stroke-width=".6"/><path d="M6.6 5.4 L12.6 1.6 Q15.4 1 17.6 3.6 Q19.4 6.2 18.2 8.6 L13 14.6 Q10 16.2 7 13.6 Q4.4 10.6 5 7.6Z" fill="url(#gT)" stroke="#1272a0" stroke-width=".6"/><path d="M6.6 5.6 Q10 5 12.6 8.4 Q14.6 11.6 13 14.6" fill="none" stroke="#0d5f88" stroke-width=".7" opacity=".6"/></svg>
<span class="t " style="left:113px;top:635.0px;line-height:22px;font-size:15.5px;color:#1a1a1a;letter-spacing:-0.67px;">Jwaistbase</span>
<span class="t " style="left:272px;top:635.0px;line-height:22px;font-size:15px;color:#000;letter-spacing:-0.33px;">铰链副</span>
<svg style="left:90px;top:657.6px" width="21" height="21" viewBox="0 0 21 21"><path d="M1.6 17.6 L6.4 12 L9 14.2 L4.2 19.6 Q2.6 20.4 1.6 19.4 Q1 18.4 1.6 17.6Z" fill="#fbb32a" stroke="#d88a10" stroke-width=".6"/><path d="M14.6 2.6 L17.2 .8 Q18.8 .2 19.6 1.6 Q20.2 3 19 4 L17 5.6Z" fill="#fbb32a" stroke="#d88a10" stroke-width=".6"/><path d="M6.6 5.4 L12.6 1.6 Q15.4 1 17.6 3.6 Q19.4 6.2 18.2 8.6 L13 14.6 Q10 16.2 7 13.6 Q4.4 10.6 5 7.6Z" fill="url(#gT)" stroke="#1272a0" stroke-width=".6"/><path d="M6.6 5.6 Q10 5 12.6 8.4 Q14.6 11.6 13 14.6" fill="none" stroke="#0d5f88" stroke-width=".7" opacity=".6"/></svg>
<span class="t " style="left:113px;top:658.0px;line-height:22px;font-size:15.5px;color:#1a1a1a;letter-spacing:-0.73px;">JbaseLleg1</span>
<span class="t " style="left:272px;top:658.0px;line-height:22px;font-size:15px;color:#000;letter-spacing:-0.33px;">铰链副</span>
<svg style="left:90px;top:680.6px" width="21" height="21" viewBox="0 0 21 21"><path d="M1.6 17.6 L6.4 12 L9 14.2 L4.2 19.6 Q2.6 20.4 1.6 19.4 Q1 18.4 1.6 17.6Z" fill="#fbb32a" stroke="#d88a10" stroke-width=".6"/><path d="M14.6 2.6 L17.2 .8 Q18.8 .2 19.6 1.6 Q20.2 3 19 4 L17 5.6Z" fill="#fbb32a" stroke="#d88a10" stroke-width=".6"/><path d="M6.6 5.4 L12.6 1.6 Q15.4 1 17.6 3.6 Q19.4 6.2 18.2 8.6 L13 14.6 Q10 16.2 7 13.6 Q4.4 10.6 5 7.6Z" fill="url(#gT)" stroke="#1272a0" stroke-width=".6"/><path d="M6.6 5.6 Q10 5 12.6 8.4 Q14.6 11.6 13 14.6" fill="none" stroke="#0d5f88" stroke-width=".7" opacity=".6"/></svg>
<span class="t " style="left:113px;top:681.0px;line-height:22px;font-size:15.5px;color:#1a1a1a;letter-spacing:-0.60px;">JLleg1Lleg2</span>
<span class="t " style="left:272px;top:681.0px;line-height:22px;font-size:15px;color:#000;letter-spacing:-0.33px;">铰链副</span>
<svg style="left:90px;top:703.6px" width="21" height="21" viewBox="0 0 21 21"><path d="M1.6 17.6 L6.4 12 L9 14.2 L4.2 19.6 Q2.6 20.4 1.6 19.4 Q1 18.4 1.6 17.6Z" fill="#fbb32a" stroke="#d88a10" stroke-width=".6"/><path d="M14.6 2.6 L17.2 .8 Q18.8 .2 19.6 1.6 Q20.2 3 19 4 L17 5.6Z" fill="#fbb32a" stroke="#d88a10" stroke-width=".6"/><path d="M6.6 5.4 L12.6 1.6 Q15.4 1 17.6 3.6 Q19.4 6.2 18.2 8.6 L13 14.6 Q10 16.2 7 13.6 Q4.4 10.6 5 7.6Z" fill="url(#gT)" stroke="#1272a0" stroke-width=".6"/><path d="M6.6 5.6 Q10 5 12.6 8.4 Q14.6 11.6 13 14.6" fill="none" stroke="#0d5f88" stroke-width=".7" opacity=".6"/></svg>
<span class="t " style="left:113px;top:704.0px;line-height:22px;font-size:15.5px;color:#1a1a1a;letter-spacing:-0.60px;">JLleg2Lleg3</span>
<span class="t " style="left:272px;top:704.0px;line-height:22px;font-size:15px;color:#000;letter-spacing:-0.33px;">铰链副</span>
<svg style="left:90px;top:726.6px" width="21" height="21" viewBox="0 0 21 21"><path d="M1.6 17.6 L6.4 12 L9 14.2 L4.2 19.6 Q2.6 20.4 1.6 19.4 Q1 18.4 1.6 17.6Z" fill="#fbb32a" stroke="#d88a10" stroke-width=".6"/><path d="M14.6 2.6 L17.2 .8 Q18.8 .2 19.6 1.6 Q20.2 3 19 4 L17 5.6Z" fill="#fbb32a" stroke="#d88a10" stroke-width=".6"/><path d="M6.6 5.4 L12.6 1.6 Q15.4 1 17.6 3.6 Q19.4 6.2 18.2 8.6 L13 14.6 Q10 16.2 7 13.6 Q4.4 10.6 5 7.6Z" fill="url(#gT)" stroke="#1272a0" stroke-width=".6"/><path d="M6.6 5.6 Q10 5 12.6 8.4 Q14.6 11.6 13 14.6" fill="none" stroke="#0d5f88" stroke-width=".7" opacity=".6"/></svg>
<span class="t " style="left:113px;top:727.0px;line-height:22px;font-size:15.5px;color:#1a1a1a;letter-spacing:-0.56px;">JLleg3Lleg4</span>
<span class="t " style="left:272px;top:727.0px;line-height:22px;font-size:15px;color:#000;letter-spacing:-0.33px;">铰链副</span>
<svg style="left:90px;top:749.6px" width="21" height="21" viewBox="0 0 21 21"><path d="M1.6 17.6 L6.4 12 L9 14.2 L4.2 19.6 Q2.6 20.4 1.6 19.4 Q1 18.4 1.6 17.6Z" fill="#fbb32a" stroke="#d88a10" stroke-width=".6"/><path d="M14.6 2.6 L17.2 .8 Q18.8 .2 19.6 1.6 Q20.2 3 19 4 L17 5.6Z" fill="#fbb32a" stroke="#d88a10" stroke-width=".6"/><path d="M6.6 5.4 L12.6 1.6 Q15.4 1 17.6 3.6 Q19.4 6.2 18.2 8.6 L13 14.6 Q10 16.2 7 13.6 Q4.4 10.6 5 7.6Z" fill="url(#gT)" stroke="#1272a0" stroke-width=".6"/><path d="M6.6 5.6 Q10 5 12.6 8.4 Q14.6 11.6 13 14.6" fill="none" stroke="#0d5f88" stroke-width=".7" opacity=".6"/></svg>
<span class="t " style="left:113px;top:750.0px;line-height:22px;font-size:15.5px;color:#1a1a1a;letter-spacing:-0.60px;">JLleg4Lleg5</span>
<span class="t " style="left:272px;top:750.0px;line-height:22px;font-size:15px;color:#000;letter-spacing:-0.33px;">铰链副</span>
<svg style="left:90px;top:772.6px" width="21" height="21" viewBox="0 0 21 21"><path d="M1.6 17.6 L6.4 12 L9 14.2 L4.2 19.6 Q2.6 20.4 1.6 19.4 Q1 18.4 1.6 17.6Z" fill="#fbb32a" stroke="#d88a10" stroke-width=".6"/><path d="M14.6 2.6 L17.2 .8 Q18.8 .2 19.6 1.6 Q20.2 3 19 4 L17 5.6Z" fill="#fbb32a" stroke="#d88a10" stroke-width=".6"/><path d="M6.6 5.4 L12.6 1.6 Q15.4 1 17.6 3.6 Q19.4 6.2 18.2 8.6 L13 14.6 Q10 16.2 7 13.6 Q4.4 10.6 5 7.6Z" fill="url(#gT)" stroke="#1272a0" stroke-width=".6"/><path d="M6.6 5.6 Q10 5 12.6 8.4 Q14.6 11.6 13 14.6" fill="none" stroke="#0d5f88" stroke-width=".7" opacity=".6"/></svg>
<span class="t " style="left:113px;top:773.0px;line-height:22px;font-size:15.5px;color:#1a1a1a;letter-spacing:-0.49px;">JbodyRleg1</span>
<span class="t " style="left:272px;top:773.0px;line-height:22px;font-size:15px;color:#000;letter-spacing:-0.33px;">铰链副</span>
<svg style="left:90px;top:795.6px" width="21" height="21" viewBox="0 0 21 21"><path d="M1.6 17.6 L6.4 12 L9 14.2 L4.2 19.6 Q2.6 20.4 1.6 19.4 Q1 18.4 1.6 17.6Z" fill="#fbb32a" stroke="#d88a10" stroke-width=".6"/><path d="M14.6 2.6 L17.2 .8 Q18.8 .2 19.6 1.6 Q20.2 3 19 4 L17 5.6Z" fill="#fbb32a" stroke="#d88a10" stroke-width=".6"/><path d="M6.6 5.4 L12.6 1.6 Q15.4 1 17.6 3.6 Q19.4 6.2 18.2 8.6 L13 14.6 Q10 16.2 7 13.6 Q4.4 10.6 5 7.6Z" fill="url(#gT)" stroke="#1272a0" stroke-width=".6"/><path d="M6.6 5.6 Q10 5 12.6 8.4 Q14.6 11.6 13 14.6" fill="none" stroke="#0d5f88" stroke-width=".7" opacity=".6"/></svg>
<span class="t " style="left:113px;top:796.0px;line-height:22px;font-size:15.5px;color:#1a1a1a;letter-spacing:-0.70px;">JRleg1Rleg2</span>
<span class="t " style="left:272px;top:796.0px;line-height:22px;font-size:15px;color:#000;letter-spacing:-0.33px;">铰链副</span>
<svg style="left:90px;top:818.6px" width="21" height="21" viewBox="0 0 21 21"><path d="M1.6 17.6 L6.4 12 L9 14.2 L4.2 19.6 Q2.6 20.4 1.6 19.4 Q1 18.4 1.6 17.6Z" fill="#fbb32a" stroke="#d88a10" stroke-width=".6"/><path d="M14.6 2.6 L17.2 .8 Q18.8 .2 19.6 1.6 Q20.2 3 19 4 L17 5.6Z" fill="#fbb32a" stroke="#d88a10" stroke-width=".6"/><path d="M6.6 5.4 L12.6 1.6 Q15.4 1 17.6 3.6 Q19.4 6.2 18.2 8.6 L13 14.6 Q10 16.2 7 13.6 Q4.4 10.6 5 7.6Z" fill="url(#gT)" stroke="#1272a0" stroke-width=".6"/><path d="M6.6 5.6 Q10 5 12.6 8.4 Q14.6 11.6 13 14.6" fill="none" stroke="#0d5f88" stroke-width=".7" opacity=".6"/></svg>
<span class="t " style="left:113px;top:819.0px;line-height:22px;font-size:15.5px;color:#1a1a1a;letter-spacing:-0.70px;">JRleg2Rleg3</span>
<span class="t " style="left:272px;top:819.0px;line-height:22px;font-size:15px;color:#000;letter-spacing:-0.33px;">铰链副</span>
<svg style="left:90px;top:841.6px" width="21" height="21" viewBox="0 0 21 21"><path d="M1.6 17.6 L6.4 12 L9 14.2 L4.2 19.6 Q2.6 20.4 1.6 19.4 Q1 18.4 1.6 17.6Z" fill="#fbb32a" stroke="#d88a10" stroke-width=".6"/><path d="M14.6 2.6 L17.2 .8 Q18.8 .2 19.6 1.6 Q20.2 3 19 4 L17 5.6Z" fill="#fbb32a" stroke="#d88a10" stroke-width=".6"/><path d="M6.6 5.4 L12.6 1.6 Q15.4 1 17.6 3.6 Q19.4 6.2 18.2 8.6 L13 14.6 Q10 16.2 7 13.6 Q4.4 10.6 5 7.6Z" fill="url(#gT)" stroke="#1272a0" stroke-width=".6"/><path d="M6.6 5.6 Q10 5 12.6 8.4 Q14.6 11.6 13 14.6" fill="none" stroke="#0d5f88" stroke-width=".7" opacity=".6"/></svg>
<span class="t " style="left:113px;top:842.0px;line-height:22px;font-size:15.5px;color:#1a1a1a;letter-spacing:-0.67px;">JRleg3Rleg4</span>
<span class="t " style="left:272px;top:842.0px;line-height:22px;font-size:15px;color:#000;letter-spacing:-0.33px;">铰链副</span>
<svg style="left:90px;top:864.6px" width="21" height="21" viewBox="0 0 21 21"><path d="M1.6 17.6 L6.4 12 L9 14.2 L4.2 19.6 Q2.6 20.4 1.6 19.4 Q1 18.4 1.6 17.6Z" fill="#fbb32a" stroke="#d88a10" stroke-width=".6"/><path d="M14.6 2.6 L17.2 .8 Q18.8 .2 19.6 1.6 Q20.2 3 19 4 L17 5.6Z" fill="#fbb32a" stroke="#d88a10" stroke-width=".6"/><path d="M6.6 5.4 L12.6 1.6 Q15.4 1 17.6 3.6 Q19.4 6.2 18.2 8.6 L13 14.6 Q10 16.2 7 13.6 Q4.4 10.6 5 7.6Z" fill="url(#gT)" stroke="#1272a0" stroke-width=".6"/><path d="M6.6 5.6 Q10 5 12.6 8.4 Q14.6 11.6 13 14.6" fill="none" stroke="#0d5f88" stroke-width=".7" opacity=".6"/></svg>
<span class="t " style="left:113px;top:865.0px;line-height:22px;font-size:15.5px;color:#1a1a1a;letter-spacing:-0.70px;">JRleg4Rleg5</span>
<span class="t " style="left:272px;top:865.0px;line-height:22px;font-size:15px;color:#000;letter-spacing:-0.33px;">铰链副</span>
<svg style="left:72px;top:889.4px" width="21" height="17" viewBox="0 0 21 17"><path d="M1 3.4 Q1 1.6 2.8 1.6 H8.2 L10.4 3.8 H18.4 Q19.8 3.8 19.8 5.2 V14.8 Q19.8 16 18.4 16 H2.4 Q1 16 1 14.8Z" fill="#fbe9b4" stroke="#e0a63c" stroke-width=".9"/><path d="M1.4 7.4 Q1.4 6.4 2.6 6.4 H18.4 Q19.6 6.4 19.6 7.4 V14.8 Q19.6 15.8 18.4 15.8 H2.6 Q1.4 15.8 1.4 14.8Z" fill="url(#gF)" stroke="#e8a020" stroke-width=".7"/></svg>
<span class="t " style="left:95.6px;top:888.0px;line-height:22px;font-size:15px;color:#000;letter-spacing:-0.50px;">材料</span>
<svg style="left:72px;top:912.4px" width="21" height="17" viewBox="0 0 21 17"><path d="M1 3.4 Q1 1.6 2.8 1.6 H8.2 L10.4 3.8 H18.4 Q19.8 3.8 19.8 5.2 V14.8 Q19.8 16 18.4 16 H2.4 Q1 16 1 14.8Z" fill="#fbe9b4" stroke="#e0a63c" stroke-width=".9"/><path d="M1.4 7.4 Q1.4 6.4 2.6 6.4 H18.4 Q19.6 6.4 19.6 7.4 V14.8 Q19.6 15.8 18.4 15.8 H2.6 Q1.4 15.8 1.4 14.8Z" fill="url(#gF)" stroke="#e8a020" stroke-width=".7"/></svg>
<span class="t " style="left:95.6px;top:911.0px;line-height:22px;font-size:15px;color:#000;letter-spacing:-0.33px;">耦合副</span>
<svg style="left:72px;top:935.4px" width="21" height="17" viewBox="0 0 21 17"><path d="M1 3.4 Q1 1.6 2.8 1.6 H8.2 L10.4 3.8 H18.4 Q19.8 3.8 19.8 5.2 V14.8 Q19.8 16 18.4 16 H2.4 Q1 16 1 14.8Z" fill="#fbe9b4" stroke="#e0a63c" stroke-width=".9"/><path d="M1.4 7.4 Q1.4 6.4 2.6 6.4 H18.4 Q19.6 6.4 19.6 7.4 V14.8 Q19.6 15.8 18.4 15.8 H2.6 Q1.4 15.8 1.4 14.8Z" fill="url(#gF)" stroke="#e8a020" stroke-width=".7"/></svg>
<span class="t " style="left:95.6px;top:934.0px;line-height:22px;font-size:15px;color:#000;letter-spacing:-0.14px;">传感器和执行器</span>
<svg style="left:53.6px;top:940.8px" width="12" height="9" viewBox="0 0 12 9"><path d="M1 1.6 L6 6.6 L11 1.6" fill="none" stroke="#333" stroke-width="1.9"/></svg>
<svg style="left:90px;top:956.6px" width="21" height="21" viewBox="0 0 21 21"><g stroke-width="1.5" fill="none"><path d="M3 8 L9 2" stroke="#2aa8c8"/><path d="M4.6 11.6 L13 3.2" stroke="#f0a030"/><path d="M6 15.4 L16.4 5" stroke="#2aa8c8"/><path d="M9.4 17.2 L18.6 8" stroke="#f0a030"/><path d="M13 18.6 L19.6 12" stroke="#2aa8c8"/><path d="M4 3 L17.6 17.6" stroke="#2aa8c8" stroke-width="1.1"/></g><path d="M1 5 L6 1 M1 5 L1.4 2.4 M1 5 L3.6 4.8 M15.6 20 L20 15.6 M20 15.6 L19.6 18.2 M20 15.6 L17.4 15.8" stroke="#e0303a" stroke-width="1" fill="none"/></svg>
<span class="t " style="left:113px;top:957.0px;line-height:22px;font-size:15.5px;color:#1a1a1a;letter-spacing:-0.73px;">X1Test</span>
<span class="t " style="left:272px;top:957.0px;line-height:22px;font-size:15px;color:#000;letter-spacing:-0.20px;">通用机器人</span>
<svg style="left:72px;top:981.4px" width="21" height="17" viewBox="0 0 21 17"><path d="M1 3.4 Q1 1.6 2.8 1.6 H8.2 L10.4 3.8 H18.4 Q19.8 3.8 19.8 5.2 V14.8 Q19.8 16 18.4 16 H2.4 Q1 16 1 14.8Z" fill="#fbe9b4" stroke="#e0a63c" stroke-width=".9"/><path d="M1.4 7.4 Q1.4 6.4 2.6 6.4 H18.4 Q19.6 6.4 19.6 7.4 V14.8 Q19.6 15.8 18.4 15.8 H2.6 Q1.4 15.8 1.4 14.8Z" fill="url(#gF)" stroke="#e8a020" stroke-width=".7"/></svg>
<span class="t " style="left:95.6px;top:980.0px;line-height:22px;font-size:15px;color:#000;letter-spacing:-0.20px;">运行时行为</span>
<svg style="left:72px;top:1004.4px" width="21" height="17" viewBox="0 0 21 17"><path d="M1 3.4 Q1 1.6 2.8 1.6 H8.2 L10.4 3.8 H18.4 Q19.8 3.8 19.8 5.2 V14.8 Q19.8 16 18.4 16 H2.4 Q1 16 1 14.8Z" fill="#fbe9b4" stroke="#e0a63c" stroke-width=".9"/><path d="M1.4 7.4 Q1.4 6.4 2.6 6.4 H18.4 Q19.6 6.4 19.6 7.4 V14.8 Q19.6 15.8 18.4 15.8 H2.6 Q1.4 15.8 1.4 14.8Z" fill="url(#gF)" stroke="#e8a020" stroke-width=".7"/></svg>
<span class="t " style="left:95.6px;top:1003.0px;line-height:22px;font-size:15px;color:#000;letter-spacing:-0.20px;">信号适配器</span>
<svg style="left:72px;top:1027.4px" width="21" height="17" viewBox="0 0 21 17"><path d="M1 3.4 Q1 1.6 2.8 1.6 H8.2 L10.4 3.8 H18.4 Q19.8 3.8 19.8 5.2 V14.8 Q19.8 16 18.4 16 H2.4 Q1 16 1 14.8Z" fill="#fbe9b4" stroke="#e0a63c" stroke-width=".9"/><path d="M1.4 7.4 Q1.4 6.4 2.6 6.4 H18.4 Q19.6 6.4 19.6 7.4 V14.8 Q19.6 15.8 18.4 15.8 H2.6 Q1.4 15.8 1.4 14.8Z" fill="url(#gF)" stroke="#e8a020" stroke-width=".7"/></svg>
<span class="t " style="left:95.6px;top:1026.0px;line-height:22px;font-size:15px;color:#000;letter-spacing:-0.25px;">信号连接</span>
<svg style="left:72px;top:1050.4px" width="21" height="17" viewBox="0 0 21 17"><path d="M1 3.4 Q1 1.6 2.8 1.6 H8.2 L10.4 3.8 H18.4 Q19.8 3.8 19.8 5.2 V14.8 Q19.8 16 18.4 16 H2.4 Q1 16 1 14.8Z" fill="#fbe9b4" stroke="#e0a63c" stroke-width=".9"/><path d="M1.4 7.4 Q1.4 6.4 2.6 6.4 H18.4 Q19.6 6.4 19.6 7.4 V14.8 Q19.6 15.8 18.4 15.8 H2.6 Q1.4 15.8 1.4 14.8Z" fill="url(#gF)" stroke="#e8a020" stroke-width=".7"/></svg>
<span class="t " style="left:95.6px;top:1049.0px;line-height:22px;font-size:15px;color:#000;letter-spacing:-0.50px;">信号</span>
<svg style="left:72px;top:1073.4px" width="21" height="17" viewBox="0 0 21 17"><path d="M1 3.4 Q1 1.6 2.8 1.6 H8.2 L10.4 3.8 H18.4 Q19.8 3.8 19.8 5.2 V14.8 Q19.8 16 18.4 16 H2.4 Q1 16 1 14.8Z" fill="#fbe9b4" stroke="#e0a63c" stroke-width=".9"/><path d="M1.4 7.4 Q1.4 6.4 2.6 6.4 H18.4 Q19.6 6.4 19.6 7.4 V14.8 Q19.6 15.8 18.4 15.8 H2.6 Q1.4 15.8 1.4 14.8Z" fill="url(#gF)" stroke="#e8a020" stroke-width=".7"/></svg>
<span class="t " style="left:95.6px;top:1072.0px;line-height:22px;font-size:15px;color:#000;letter-spacing:-0.33px;">碰撞组</span>
<svg style="left:72px;top:1096.4px" width="21" height="17" viewBox="0 0 21 17"><path d="M1 3.4 Q1 1.6 2.8 1.6 H8.2 L10.4 3.8 H18.4 Q19.8 3.8 19.8 5.2 V14.8 Q19.8 16 18.4 16 H2.4 Q1 16 1 14.8Z" fill="#fbe9b4" stroke="#e0a63c" stroke-width=".9"/><path d="M1.4 7.4 Q1.4 6.4 2.6 6.4 H18.4 Q19.6 6.4 19.6 7.4 V14.8 Q19.6 15.8 18.4 15.8 H2.6 Q1.4 15.8 1.4 14.8Z" fill="url(#gF)" stroke="#e8a020" stroke-width=".7"/></svg>
<span class="t " style="left:95.6px;top:1095.0px;line-height:22px;font-size:15px;color:#000;letter-spacing:-0.50px;">标签</span>
<svg style="left:72px;top:1119.4px" width="21" height="17" viewBox="0 0 21 17"><path d="M1 3.4 Q1 1.6 2.8 1.6 H8.2 L10.4 3.8 H18.4 Q19.8 3.8 19.8 5.2 V14.8 Q19.8 16 18.4 16 H2.4 Q1 16 1 14.8Z" fill="#fbe9b4" stroke="#e0a63c" stroke-width=".9"/><path d="M1.4 7.4 Q1.4 6.4 2.6 6.4 H18.4 Q19.6 6.4 19.6 7.4 V14.8 Q19.6 15.8 18.4 15.8 H2.6 Q1.4 15.8 1.4 14.8Z" fill="url(#gF)" stroke="#e8a020" stroke-width=".7"/></svg>
<span class="t " style="left:95.6px;top:1118.0px;line-height:22px;font-size:15px;color:#000;letter-spacing:-0.33px;">运动组</span>
<div class="a" style="left:455px;top:218px;width:358px;height:28px;background:#fdfdfd;border:1px solid #cfd3d8;border-bottom:none;"></div>
<svg style="left:470px;top:222px" width="370" height="20" viewBox="470 222 370 20">
<path d="M474 231.6 H486 M480 225.6 V237.6" stroke="#5f4b22" stroke-width="1.9"/>
<path d="M782 227.2 L792 236.2 M792 227.2 L782 236.2" stroke="#6a5222" stroke-width="2.1"/>
<path d="M821 232 H833.4 M827.2 225.8 V238.2" stroke="#a0a0a0" stroke-width="1.9"/></svg>
<span class="t " style="left:494.2px;top:221.6px;line-height:20px;font-size:15.5px;color:#111;letter-spacing:-0.61px;">* X1Demo.Z3 - [5CUUU3_智元灵犀X1整机]</span>
<div class="a" style="left:455px;top:245px;width:1314px;height:1063px;background:linear-gradient(#ffffff 0%,#fdfdfd 4%,#a3a3a3 100%);border-left:1px solid #b9bdc3;border-right:1px solid #c5c8cc;border-bottom:1px solid #b4b7bb;"></div>
<div class="a" style="left:1769px;top:245px;width:5px;height:1063px;background:#dfe3e7;border-right:1px solid #c5c9cf;"></div>
<div class="a" style="left:452px;top:245px;width:3px;height:1063px;background:#dfe3e7;"></div>
<span class="t " style="left:476.8px;top:247.0px;line-height:20px;font-size:15.5px;color:#111;letter-spacing:-0.04px;">&lt;middle-click&gt; to continue.</span>
<span class="t " style="left:476.8px;top:273.0px;line-height:20px;font-size:15.5px;color:#111;letter-spacing:-0.03px;">&lt;Shift-right-click&gt; to display pick filter.</span>
<span class="t " style="left:460.6px;top:1283.8px;line-height:24px;font-size:20.5px;color:#1c1c1c;letter-spacing:-0.14px;">1506.29mm</span>
<svg style="left:757.4px;top:248.39999999999998px" width="24" height="24" viewBox="-12 -12 24 24"><path d="M-1.4 -7.8 H8 V7.8 H-1.4 V4.6 M-1.4 -7.8 V-4.6" fill="none" stroke="#2a8cc0" stroke-width="1.9"/><path d="M-9.6 0 L-3.6 -5.4 V-1.9 H3 V1.9 H-3.6 V5.4Z" fill="#e0202a" stroke="#a81018" stroke-width=".5"/></svg>
<svg style="left:786.4px;top:248.39999999999998px" width="24" height="24" viewBox="-12 -12 24 24"><path d="M-8 1 L4 -1 L9 2.6 L-3 9Z" fill="none" stroke="#3cb43c" stroke-width="1"/><path d="M-6 3 L5 .6 M-4.6 5.2 L7 2 M-6.4 1.6 L-1 6.6" stroke="#3cb43c" stroke-width=".9"/><path d="M8.6 -5 V2.4" stroke="#f0a030" stroke-width="1.6"/><path d="M-7.4 -9.6 H-1.6 V-4 L-3.2 -1 H-5.8 L-7.4 -4Z" fill="#5ab0dc" stroke="#2a7cb0" stroke-width=".6"/><circle cx="-4.5" cy="-8.6" r="2.6" fill="#e4eef4" stroke="#8aa0b0" stroke-width=".5"/><path d="M-5.6 -1 H-3.4 V3 H-5.6Z" fill="#f0802a"/></svg>
<svg style="left:814.4px;top:258.6px" width="8" height="5" viewBox="0 0 8 5"><path d="M.4 .4 H7.6 L4 4.6Z" fill="#444"/></svg>
<svg style="left:831.4px;top:248.39999999999998px" width="24" height="24" viewBox="-12 -12 24 24"><path d="M-7.4 4 L3.6 -7.6 L7.6 -4.6 L-3.4 7Z" fill="#f4d8b0" stroke="#d8a060" stroke-width=".6"/><path d="M-7.4 4 L-4 .4 L0 3.4 L-3.4 7Z" fill="#e0303a"/><path d="M1.6 -5.6 L3.6 -7.6 L7.6 -4.6 L5.6 -2.6Z" fill="#f0c23a"/></svg>
<svg style="left:859.6px;top:248.39999999999998px" width="24" height="24" viewBox="-12 -12 24 24"><path d="M-9.6 -2.6 L.4 -6.6 L9.6 -3 L9.6 4.6 L-.6 9.6 L-9.6 5Z" fill="#cfeaf8" stroke="#3a98d0" stroke-width=".7"/><path d="M-.6 1.4 L9.6 -3 L9.6 4.6 L-.6 9.6Z" fill="#2f8fd0"/><path d="M-9.6 -2.6 L.4 -6.6 L9.6 -3 L-.6 1.4Z" fill="#fbdc3a" stroke="#e0a820" stroke-width=".6"/><path d="M-.4 -2.6 V-9" stroke="#2aa83a" stroke-width="1.3"/><path d="M-.4 -11 L1.4 -8 H-2.2Z" fill="#2aa83a"/></svg>
<svg style="left:888.6px;top:248px" width="24" height="24" viewBox="-12 -12 24 24"><path d="M-10 -4.6 L-.6 -9.6 L10 -6 L10 3.6 L.6 9.6 L-10 5Z" fill="#1f8cc8" stroke="#0f6ca0" stroke-width=".6"/><path d="M-10 -4.6 L.6 -.6 L.6 9.6 L-10 5Z" fill="#bfe2f6"/><path d="M-10 -4.6 L-.6 -9.6 L10 -6 L.6 -.6Z" fill="#4ab0e4"/><path d="M-8 10.4 L1 11.6 L9 7" fill="none" stroke="#b4b4b4" stroke-width="1.2"/></svg>
<svg style="left:916.4px;top:258.6px" width="8" height="5" viewBox="0 0 8 5"><path d="M.4 .4 H7.6 L4 4.6Z" fill="#444"/></svg>
<svg style="left:932.4px;top:248px" width="24" height="24" viewBox="-12 -12 24 24"><path d="M-10 -4.6 L-.6 -9.6 L10 -6 L10 3.6 L.6 9.6 L-10 5Z" fill="#fdfeff" stroke="#7ab4d8" stroke-width=".9"/><path d="M-10 -4.6 L.6 -.6 L10 -6 M.6 -.6 V9.6" fill="none" stroke="#7ab4d8" stroke-width=".9"/><path d="M-8 10.4 L1 11.6 L9 7" fill="none" stroke="#c4c4c4" stroke-width="1.2"/></svg>
<svg style="left:960px;top:258.6px" width="8" height="5" viewBox="0 0 8 5"><path d="M.4 .4 H7.6 L4 4.6Z" fill="#444"/></svg>
<svg style="left:976.2px;top:247.60000000000002px" width="24" height="24" viewBox="-12 -12 24 24"><path d="M-9.6 -3 L-1.6 -9.6 L7 -7.6 L10.4 .6 L5 8.6 L-5 8Z" fill="#fbc82a" stroke="#e04a1a" stroke-width="1"/><path d="M-9.6 -3 L1 .4 L-1.6 -9.6 M7 -7.6 L1 .4 L10.4 .6 M5 8.6 L1 .4 L-5 8" fill="none" stroke="#e04a1a" stroke-width=".9"/></svg>
<svg style="left:1003.8px;top:258.6px" width="8" height="5" viewBox="0 0 8 5"><path d="M.4 .4 H7.6 L4 4.6Z" fill="#444"/></svg>
<svg style="left:1020px;top:248px" width="24" height="24" viewBox="-12 -12 24 24"><rect x="-10" y="-10" width="19" height="19" fill="#7cc0e4" stroke="#2a8cc8" stroke-width="1.2"/><circle cx="-.6" cy="-1" r="7.8" fill="#e4e6e8" stroke="#f0b020" stroke-width="2.2"/><rect x="-4" y="-5.4" width="6.8" height="8.8" fill="#f4f8fb" stroke="#8aa4b8" stroke-width=".6"/><path d="M5.4 5.6 L10 10" stroke="#6a7a88" stroke-width="1.6"/></svg>
<svg style="left:1047.8px;top:258.6px" width="8" height="5" viewBox="0 0 8 5"><path d="M.4 .4 H7.6 L4 4.6Z" fill="#444"/></svg>
<svg style="left:1064.6px;top:248.39999999999998px" width="24" height="24" viewBox="-12 -12 24 24"><circle r="6.6" fill="none" stroke="#e0202a" stroke-width="1.4" stroke-dasharray="14 3"/><path d="M0 -9.6 V9.6 M-9.6 0 H9.6" stroke="#e0202a" stroke-width="1.1"/><circle r="2" fill="#e0202a"/><path d="M4 -9 Q9.4 -6 9.6 -1" fill="none" stroke="#e0202a" stroke-width="1.2"/></svg>
<svg style="left:1092px;top:258.6px" width="8" height="5" viewBox="0 0 8 5"><path d="M.4 .4 H7.6 L4 4.6Z" fill="#444"/></svg>
<svg style="left:1108.2px;top:248.39999999999998px" width="24" height="24" viewBox="-12 -12 24 24"><rect x="-9.6" y="-9" width="19" height="18.4" fill="#eef7fc" stroke="#2a7cb8" stroke-width="1.1"/><path d="M-6.6 -1 V-6 H-1.6 M6.6 1.6 Q6.6 6.4 1.6 6.4" fill="none" stroke="#7cc0e4" stroke-width="1.1" stroke-dasharray="2 1.2"/><rect x="-6.6" y="2.4" width="4.4" height="4" fill="#2a7cb8"/><path d="M3.6 -6 H7.6 L5.6 -3Z" fill="#4ab0e4"/></svg>
<svg style="left:1137.2px;top:248.39999999999998px" width="24" height="24" viewBox="-12 -12 24 24"><path d="M-7 -9.6 V6 M7 -9.6 V6" stroke="#2a9cc8" stroke-width="1.9"/><path d="M-4 -4.6 H4" stroke="#2a9cc8" stroke-width="1.1"/><path d="M-6 -4.6 L-3.4 -6.4 V-2.8Z M6 -4.6 L3.4 -6.4 V-2.8Z" fill="#2a9cc8"/><path d="M-5 8.6 H5" stroke="#d82a2a" stroke-width="1.3"/><path d="M-7.6 8.6 L-4.6 6.8 V10.4Z M7.6 8.6 L4.6 6.8 V10.4Z" fill="#d82a2a"/></svg>
<svg style="left:1165px;top:258.6px" width="8" height="5" viewBox="0 0 8 5"><path d="M.4 .4 H7.6 L4 4.6Z" fill="#444"/></svg>
<svg style="left:1181.2px;top:248px" width="24" height="24" viewBox="-12 -12 24 24"><rect x="-10" y="-10.4" width="20" height="16.4" fill="#d8d8d8" stroke="#8a8a8a" stroke-width=".8"/><rect x="-8.4" y="-8.8" width="16.8" height="13" fill="#5a6488"/><path d="M-8.4 -8.8 H8.4 V-3 Q0 -1 -8.4 2Z" fill="#8a94b4" opacity=".7"/><path d="M-8 7.6 Q0 5.4 8 7.6 Q0 11.4 -8 7.6Z" fill="#7a7a7a"/></svg>
<svg style="left:1209px;top:258.6px" width="8" height="5" viewBox="0 0 8 5"><path d="M.4 .4 H7.6 L4 4.6Z" fill="#444"/></svg>
<div class="a" style="left:1227px;top:256px;width:20px;height:10px;background:#000;"></div>
<div class="a" style="left:1256px;top:250.6px;width:21px;height:19.6px;background:#c0e6f6;border:1px solid #2a1010;"></div>
<svg style="left:1283.6px;top:248.39999999999998px" width="24" height="24" viewBox="-12 -12 24 24"><path d="M-10 1.6 L.6 -3 L10 .6 L-.4 6.6Z" fill="#8ac4e4" stroke="#4a94c0" stroke-width=".6"/><path d="M-10 -.6 L.6 -5.2 L10 -1.6 L-.4 4.4Z" fill="#b4dcf0" stroke="#4a94c0" stroke-width=".6"/><path d="M-10 -4 Q-6 -6.6 -8 -8.4 L2 -9 L10 -4.6 L-.4 1.6Z" fill="#2fc0a8" stroke="#1a9080" stroke-width=".6"/><path d="M-10 3.6 L-.4 8.6 L10 2.6" fill="none" stroke="#4a94c0" stroke-width=".8"/></svg>
<svg style="left:1311.2px;top:258.6px" width="8" height="5" viewBox="0 0 8 5"><path d="M.4 .4 H7.6 L4 4.6Z" fill="#444"/></svg>
<div class="a" style="left:1325px;top:248px;width:144px;height:24.4px;background:#f0f0f0;border:1px solid #dcdfe3;"></div>
<svg style="left:1330px;top:250px" width="136" height="22" viewBox="1330 250 136 22">
<path d="M1337.6 259 Q1337.6 254.6 1341 254.6 Q1344.4 254.6 1344.4 259 Q1344.4 261 1342.8 262.6 V264.6 H1339.2 V262.6 Q1337.6 261 1337.6 259Z" fill="#fafafa" stroke="#a8a8a8" stroke-width=".9"/><path d="M1339.6 266 H1342.4" stroke="#a8a8a8" stroke-width="1"/>
<circle cx="1358.8" cy="260.4" r="6" fill="#d8d8d8" stroke="#a8a8a8" stroke-width="1"/>
<path d="M1453.6 258.4 H1462 L1457.8 262.6Z" fill="#b9b9b9"/></svg>
<span class="t " style="left:1374px;top:250.6px;line-height:20px;font-size:16px;color:#7a7a7a;letter-spacing:-1.10px;">图层0000</span>
<span class="t " style="left:1777px;top:221.6px;line-height:20px;font-size:15.5px;color:#444;letter-spacing:-0.09px;">Output</span>
<svg style="left:1750px;top:222px" width="280" height="18" viewBox="1750 222 280 18">
<path d="M1752.6 227.4 H1763 V229.4 H1752.6Z" fill="#b8b0b0"/><path d="M1752.8 231.2 H1762.8 L1757.8 236.6Z" fill="#8a8080"/>
<rect x="1962.2" y="226" width="10" height="9" fill="#222"/>
<rect x="1985" y="227.2" width="11.4" height="7.6" rx="1.5" fill="#fff" stroke="#a9adb3" stroke-width="1.2"/><rect x="1987.8" y="229.8" width="5.8" height="2.6" fill="#c3c6cb"/>
<path d="M2008.6 226 L2020.4 234 M2020.4 226 L2008.6 234" stroke="#a9adb3" stroke-width="4.8" stroke-linecap="square"/><path d="M2008.6 226 L2020.4 234 M2020.4 226 L2008.6 234" stroke="#fff" stroke-width="2.6" stroke-linecap="square"/>
</svg>
<div class="a" style="left:1774px;top:245px;width:255px;height:1063px;background:#fff;border:1px solid #c5c9cf;"></div>
<span class="t " style="left:1779px;top:251.0px;line-height:20px;font-size:15.5px;color:#111;letter-spacing:-0.51px;">[CSYS8] added to Assembly</span>
<span class="t " style="left:1779px;top:270.6px;line-height:20px;font-size:15.5px;color:#111;letter-spacing:-0.84px;">[5CUUU3_智元灵犀X1整机].</span>
<div class="a" style="left:1447px;top:1312px;width:1px;height:30px;background:#8a8f96;"></div>
<div class="a" style="left:1466px;top:1315.4px;width:25px;height:23px;background:#fce38e;border:1px solid #ecc850;"></div>
<div class="a" style="left:1536px;top:1315.4px;width:25px;height:23px;background:#fce38e;border:1px solid #ecc850;"></div>
<svg style="left:1466px;top:1315px" width="100" height="24" viewBox="1466 1315 100 24">
<rect x="1470" y="1319" width="17" height="16" fill="#cfe0f8" stroke="#5a7ccc" stroke-width=".8"/><rect x="1470" y="1319" width="17" height="3.4" fill="#5a7ccc"/><path d="M1473 1324 V1333" stroke="#5a6a8a" stroke-width="1.2" stroke-dasharray="1.4 1.2"/><path d="M1478 1326.6 L1482 1324.6 L1486 1326 L1483.6 1327.6 L1483.6 1334 H1481 V1328Z" fill="#d81e1e"/>
<rect x="1504.6" y="1319.6" width="18" height="11.6" fill="#2ab0d8" stroke="#1a86b0" stroke-width=".7"/><path d="M1504.6 1319.6 H1522.6 V1324 Q1513 1326 1504.6 1329Z" fill="#6ad0ec" opacity=".7"/><path d="M1510 1331.2 H1517 L1518.6 1334.4 H1508.4Z" fill="#444"/>
<rect x="1540" y="1319" width="17" height="16" fill="#e4ecfa" stroke="#5a7ccc" stroke-width=".8"/><rect x="1540" y="1319" width="17" height="3.6" fill="#5a7ccc"/><path d="M1542.6 1326 H1554.6 M1542.6 1328.8 H1554.6 M1542.6 1331.6 H1554.6" stroke="#8a94a8" stroke-width="1"/>
</svg>
<div class="a" style="left:1571px;top:1314px;width:438px;height:27px;background:#fff;border:1px solid #c5c9cf;"></div>
<svg style="left:2018px;top:1328px" width="14" height="14" viewBox="0 0 14 14"><g fill="#b4b8bc"><rect x="10" y="2" width="2" height="2"/><rect x="6" y="6" width="2" height="2"/><rect x="10" y="6" width="2" height="2"/><rect x="2" y="10" width="2" height="2"/><rect x="6" y="10" width="2" height="2"/><rect x="10" y="10" width="2" height="2"/></g></svg>
<svg style="left:0;top:0" width="2035" height="1345" viewBox="0 0 2035 1345"><g clip-path="url(#vp)"><defs>
<linearGradient id="bH" x1="0" y1="0" x2="1" y2="0"><stop offset="0" stop-color="#7797a8"/><stop offset=".32" stop-color="#a6c3d0"/><stop offset=".62" stop-color="#94b3c1"/><stop offset="1" stop-color="#7494a5"/></linearGradient>
<linearGradient id="bH2" x1="0" y1="0" x2="1" y2="0"><stop offset="0" stop-color="#7f9fb0"/><stop offset=".45" stop-color="#aecad6"/><stop offset="1" stop-color="#7797a8"/></linearGradient>
<linearGradient id="bD" x1="0" y1="0" x2="1" y2="1"><stop offset="0" stop-color="#a0bdca"/><stop offset="1" stop-color="#7c9cad"/></linearGradient>
<radialGradient id="bR" cx=".55" cy=".35" r=".75"><stop offset="0" stop-color="#b2cdd8"/><stop offset=".6" stop-color="#96b4c2"/><stop offset="1" stop-color="#7595a6"/></radialGradient>
<linearGradient id="cone" x1="0" y1="0" x2="1" y2="0"><stop offset="0" stop-color="#a86400"/><stop offset=".45" stop-color="#ffc02a"/><stop offset="1" stop-color="#b06a00"/></linearGradient>
<clipPath id="vp"><rect x="456" y="245" width="1312" height="1062"/></clipPath>
</defs><g><path d="M1014.7 502.4 L933.3 536.1 L933.3 437.6 L1014.7 403.9Z" fill="rgba(178,120,60,.085)"/><path d="M1016.5 530.7 L931.5 507.8 L931.5 409.3 L1016.5 432.2Z" fill="rgba(178,120,60,.085)"/><path d="M1057.2 464.6 L972.2 441.7 L890.8 475.4 L975.8 498.3Z" fill="rgba(178,120,60,.085)"/><path d="M908.5 503.9 L823.5 539.1 L823.5 436.1 L908.5 400.9Z" fill="rgba(178,120,60,.085)"/><path d="M910.4 533.5 L821.6 509.6 L821.6 406.5 L910.4 430.4Z" fill="rgba(178,120,60,.085)"/><path d="M952.9 464.3 L864.1 440.4 L779.1 475.7 L867.9 499.6Z" fill="rgba(178,120,60,.085)"/><path d="M904.8 671.0 L827.2 703.1 L827.2 609.0 L904.8 576.9Z" fill="rgba(178,120,60,.085)"/><path d="M906.6 698.0 L825.4 676.1 L825.4 582.0 L906.6 603.9Z" fill="rgba(178,120,60,.085)"/><path d="M945.4 634.8 L864.2 613.0 L786.6 645.2 L867.8 667.0Z" fill="rgba(178,120,60,.085)"/><path d="M917.0 749.5 L843.0 780.1 L843.0 690.5 L917.0 659.9Z" fill="rgba(178,120,60,.085)"/><path d="M955.6 715.1 L878.3 694.3 L804.4 724.9 L881.7 745.7Z" fill="rgba(178,120,60,.085)"/><path d="M1132.5 723.9 L1047.5 759.1 L1047.5 656.1 L1132.5 620.9Z" fill="rgba(178,120,60,.085)"/><path d="M1134.4 753.5 L1045.6 729.6 L1045.6 626.5 L1134.4 650.4Z" fill="rgba(178,120,60,.085)"/><path d="M1176.9 684.3 L1088.1 660.4 L1003.1 695.7 L1091.9 719.6Z" fill="rgba(178,120,60,.085)"/><path d="M1014.7 692.4 L933.3 726.1 L933.3 627.6 L1014.7 593.9Z" fill="rgba(178,120,60,.085)"/><path d="M1016.5 720.7 L931.5 697.8 L931.5 599.3 L1016.5 622.2Z" fill="rgba(178,120,60,.085)"/><path d="M1057.2 654.6 L972.2 631.7 L890.8 665.4 L975.8 688.3Z" fill="rgba(178,120,60,.085)"/><path d="M1012.6 785.2 L935.4 764.4 L935.4 674.8 L1012.6 695.6Z" fill="rgba(178,120,60,.085)"/><path d="M1049.6 725.1 L972.3 704.3 L898.4 734.9 L975.7 755.7Z" fill="rgba(178,120,60,.085)"/><path d="M922.5 873.9 L837.5 909.1 L837.5 806.1 L922.5 770.9Z" fill="rgba(178,120,60,.085)"/><path d="M924.4 903.5 L835.6 879.6 L835.6 776.5 L924.4 800.4Z" fill="rgba(178,120,60,.085)"/><path d="M966.9 834.3 L878.1 810.4 L793.1 845.7 L881.9 869.6Z" fill="rgba(178,120,60,.085)"/><path d="M943.8 936.0 L866.2 968.1 L866.2 874.0 L943.8 841.9Z" fill="rgba(178,120,60,.085)"/><path d="M984.4 899.8 L903.2 878.0 L825.6 910.2 L906.8 932.0Z" fill="rgba(178,120,60,.085)"/><path d="M953.8 1041.0 L876.2 1073.1 L876.2 979.0 L953.8 946.9Z" fill="rgba(178,120,60,.085)"/><path d="M955.6 1068.0 L874.4 1046.1 L874.4 952.0 L955.6 973.9Z" fill="rgba(178,120,60,.085)"/><path d="M994.4 1004.8 L913.2 983.0 L835.6 1015.2 L916.8 1037.0Z" fill="rgba(178,120,60,.085)"/><path d="M1022.0 1089.5 L948.0 1120.1 L948.0 1030.5 L1022.0 999.9Z" fill="rgba(178,120,60,.085)"/><path d="M1023.6 1115.2 L946.4 1094.4 L946.4 1004.8 L1023.6 1025.6Z" fill="rgba(178,120,60,.085)"/><path d="M1022.0 1139.5 L948.0 1170.1 L948.0 1080.5 L1022.0 1049.9Z" fill="rgba(178,120,60,.085)"/><path d="M1023.6 1165.2 L946.4 1144.4 L946.4 1054.8 L1023.6 1075.6Z" fill="rgba(178,120,60,.085)"/><path d="M983.3 1176.5 L916.7 1204.1 L916.7 1123.5 L983.3 1095.9Z" fill="rgba(178,120,60,.085)"/><path d="M984.8 1199.7 L915.2 1181.0 L915.2 1100.3 L984.8 1119.0Z" fill="rgba(178,120,60,.085)"/><path d="M1018.0 1145.6 L948.5 1126.9 L882.0 1154.4 L951.5 1173.1Z" fill="rgba(178,120,60,.085)"/><path d="M1087.5 923.9 L1002.5 959.1 L1002.5 856.1 L1087.5 820.9Z" fill="rgba(178,120,60,.085)"/><path d="M1089.4 953.5 L1000.6 929.6 L1000.6 826.5 L1089.4 850.4Z" fill="rgba(178,120,60,.085)"/><path d="M1131.9 884.3 L1043.1 860.4 L958.1 895.7 L1046.9 919.6Z" fill="rgba(178,120,60,.085)"/><path d="M1088.8 1066.0 L1011.2 1098.1 L1011.2 1004.0 L1088.8 971.9Z" fill="rgba(178,120,60,.085)"/><path d="M1090.6 1093.0 L1009.4 1071.1 L1009.4 977.0 L1090.6 998.9Z" fill="rgba(178,120,60,.085)"/><path d="M1129.4 1029.8 L1048.2 1008.0 L970.6 1040.2 L1051.8 1062.0Z" fill="rgba(178,120,60,.085)"/><path d="M828.6 715.2 L751.4 694.4 L751.4 604.8 L828.6 625.6Z" fill="rgba(178,120,60,.085)"/><path d="M865.6 655.1 L788.3 634.3 L714.4 664.9 L791.7 685.7Z" fill="rgba(178,120,60,.085)"/><path d="M1125.3 1088.6 L1093.3 1102.0 L1093.3 1197.0 L1125.3 1183.8Z" fill="rgba(178,120,60,.095)"/><path d="M1148.7 1084.0 L1093.3 1105.8 L1093.3 1201.8 L1148.7 1180.0Z" fill="rgba(178,120,60,.095)"/><path d="M1091.7 1112.0 L1159.6 1132.3 L1159.6 1227.5 L1091.7 1207.0Z" fill="rgba(178,120,60,.095)"/><path d="M1083.0 1122.0 L1136.2 1137.0 L1136.2 1232.2 L1083.0 1217.0Z" fill="rgba(178,120,60,.095)"/><path d="M1050.3 458.4 L1127.1 480.5 L1127.1 575.4 L1050.3 553.0Z" fill="rgba(178,120,60,.095)"/><path d="M1098.5 462.5 L1165.6 436.4 L1165.6 532.0 L1098.5 558.2Z" fill="rgba(178,120,60,.095)"/><path d="M1050.3 458.4 L1116.5 432.3 L1116.5 528.0 L1050.3 554.0Z" fill="rgba(178,120,60,.095)"/><path d="M1085.4 510.0 L1193.4 550.8 L1127.1 575.4 L1020.0 535.0Z" fill="rgba(178,120,60,.095)"/><path d="M788.7 440.0 L866.0 461.0 L866.0 560.0 L788.7 539.0Z" fill="rgba(178,120,60,.095)"/><path d="M798.8 452.0 L798.8 584.0 L866.0 556.0 L866.0 424.0Z" fill="rgba(178,120,60,.095)"/><path d="M756.9 514.5 L828.9 486.9 L907.0 510.0 L835.0 540.0Z" fill="rgba(178,120,60,.095)"/><path d="M722.6 561.3 L790.4 533.7 L866.0 556.0 L798.8 584.0Z" fill="rgba(178,120,60,.095)"/><path d="M788.7 560.0 L788.7 656.0 L866.0 628.0 L866.0 532.0Z" fill="rgba(178,120,60,.095)"/><path d="M722.4 679.6 L788.5 654.3 L866.0 676.0 L799.0 701.9Z" fill="rgba(178,120,60,.095)"/><path d="M789.3 600.0 L789.3 700.0 L842.0 720.0 L842.0 620.0Z" fill="rgba(178,120,60,.095)"/><path d="M960.6 988.0 L1009.0 1003.0 L1009.0 1098.0 L960.6 1083.0Z" fill="rgba(178,120,60,.095)"/><path d="M972.0 1035.0 L1020.0 1050.0 L1020.0 1145.0 L972.0 1130.0Z" fill="rgba(178,120,60,.095)"/><path d="M979.0 1047.0 L993.0 1052.0 L993.0 1165.0 L979.0 1160.0Z" fill="rgba(178,120,60,.095)"/><path d="M948.0 1070.0 L1003.0 1090.0 L1003.0 1160.0 L948.0 1140.0Z" fill="rgba(178,120,60,.095)"/><path d="M1134.6 1187.7 L1203.3 1207.2 L1153.4 1226.8 L1081.6 1206.5Z" fill="rgba(178,120,60,.095)"/><path d="M1148.7 1180.7 L1225.2 1202.6 L1159.6 1227.5 L1085.0 1205.0Z" fill="rgba(178,120,60,.095)"/></g><path d="M1018 500 L1040 498 C1058 500 1072 512 1080 528 L1060 545 L1046 560 L1040 600 L1020 596Z" fill="#8aa8b6" stroke="#10161a" stroke-width="1.3" stroke-linejoin="round" /><path d="M899 482 L930 476 L956 481 C958 492 950 497 941 500 C955 512 990 514 1006 502 C998 497 992 492 992 486 L1018 492 L1040 500 L1046 560 L1046 627 C1040 650 1025 675 1014 690 L1003 702 L949 704 C935 685 912 655 900 618 C894 595 893 575 894 560 L902 555 L902 514Z" fill="url(#bH2)" stroke="#10161a" stroke-width="1.3" stroke-linejoin="round" /><path d="M956 481 C958 492 950 497 941 500 C955 512 990 514 1006 502 C998 497 992 492 992 486 C980 490 966 488 956 481Z" fill="url(#bH2)" stroke="#10161a" stroke-width="1.3" stroke-linejoin="round" /><path d="M949 704 L1003 702 L1012 722 L1000 738 L960 740 L946 724Z" fill="#66808e" stroke="#10161a" stroke-width="1.3" stroke-linejoin="round" /><path d="M924 728 C905 750 892 775 889 790 C889 805 895 812 903 822 C915 835 930 842 946 840 C952 832 958 827 962 827 C970 827 980 838 997 857 L1010 845 L1050 840 L1050 770 L1028 738 C1010 720 945 716 924 728Z" fill="url(#bD)" stroke="#10161a" stroke-width="1.3" stroke-linejoin="round" /><path d="M924 728 C945 716 1010 720 1028 738 C1010 752 950 748 924 728Z" fill="#9ab6c4" stroke="#10161a" stroke-width="1.3" stroke-linejoin="round" /><path d="M903 822 C915 835 930 842 946 840 L944 860 L945 893 C948 930 950 960 949 1000 L950 1023 L951 1057 C950 1100 947 1140 944 1165 L940 1178 L886 1180 C872 1160 866 1130 865 1110 C862 1085 862 1065 864 1054 C866 1040 873 1028 882 1019 C873 1010 865 998 863 980 C861 950 861 915 863 892 C872 880 890 850 903 822Z" fill="url(#bH)" stroke="#10161a" stroke-width="1.3" stroke-linejoin="round" /><path d="M872 801 C859 812 855 850 860 872 C864 886 872 892 882 893 C896 890 903 870 903 845 C903 822 892 798 872 801Z" fill="url(#bR)" stroke="#10161a" stroke-width="1.3" stroke-linejoin="round" /><path d="M841 1192 C846 1180 870 1172 900 1170 C930 1168 958 1172 964 1182 C967 1192 958 1204 940 1212 C915 1222 880 1224 860 1218 C846 1212 839 1203 841 1192Z" fill="url(#bH2)" stroke="#10161a" stroke-width="1.3" stroke-linejoin="round" /><path d="M1003 930 C1008 950 1016 962 1019 972 C1014 980 1008 988 1005 1000 C1003 1008 1003 1012 1003 1015 C1001 1040 1002 1060 1002 1074 C1004 1100 1005 1140 1005 1166 C1008 1190 1014 1204 1019 1212 L1084 1206 C1088 1196 1091 1190 1091 1184 L1093 1074 C1091 1058 1090 1040 1089 1020 L1088 934Z" fill="url(#bH)" stroke="#10161a" stroke-width="1.3" stroke-linejoin="round" /><path d="M1004 858 C996 875 998 915 1008 930 C1020 940 1050 938 1070 930 C1086 920 1092 890 1088 868 C1080 846 1050 838 1030 842 C1016 844 1008 850 1004 858Z" fill="url(#bR)" stroke="#10161a" stroke-width="1.3" stroke-linejoin="round" /><path d="M985 1232 C990 1218 1016 1210 1046 1208 C1076 1206 1102 1210 1107 1220 C1110 1232 1100 1246 1082 1254 C1058 1264 1024 1266 1004 1260 C990 1254 983 1244 985 1232Z" fill="url(#bH2)" stroke="#10161a" stroke-width="1.3" stroke-linejoin="round" /><path d="M834 477 C845 470 865 465 874 464 C885 463 893 468 896 472 L900 482 L902 514 L902 563 L896 569 L899 600 C901 625 904 645 905 660 L905 752 C904 765 900 774 897 777 C885 790 845 790 830 777 L828 769 L828 700 L829 657 L827 632 L829 607 L832 590 L830 569 L829 547 L826 520 L825 495 C826 486 829 480 834 477Z" fill="url(#bH)" stroke="#10161a" stroke-width="1.3" stroke-linejoin="round" /><path d="M862 512 C870 506 886 510 893 520 C898 530 897 550 893 558 C886 566 872 562 866 552 C859 540 858 520 862 512Z" fill="#8eacbb" stroke="#10161a" stroke-width="1.3" stroke-linejoin="round" /><path d="M1045 557 L1050 544 C1055 535 1075 527 1094 527 C1105 527 1122 535 1124 557 L1124 800 C1125 820 1123 835 1120 840 C1105 850 1060 850 1050 844 C1046 836 1046 825 1046 810 L1046 640 L1048 624Z" fill="url(#bH)" stroke="#10161a" stroke-width="1.3" stroke-linejoin="round" /><path d="M968 540 C974 526 996 522 1012 530 C1024 540 1027 570 1020 586 C1010 596 990 596 978 588 C966 576 964 552 968 540Z" fill="#8eacbb" stroke="#10161a" stroke-width="1.3" stroke-linejoin="round" /><path d="M910 385 C930 380 960 379 976 379 C990 379 1010 385 1021 398 C1028 410 1027 430 1024 444 C1021 458 1012 474 997 480 C985 486 968 485 957 480 C940 474 912 460 900 450 C893 440 893 415 895 407 C897 397 902 388 910 385Z" fill="url(#bR)" stroke="#10161a" stroke-width="1.3" stroke-linejoin="round" /><path d="M947 389 C941 400 937 420 938 440 C939 455 942 468 946 476" fill="none" stroke="#10161a" stroke-width="1.05" stroke-linejoin="round" stroke-linecap="round" /><path d="M910 385 C925 384 938 386 947 389 C960 392 985 400 994 408 C1002 418 1006 435 1003 450 C1001 462 995 474 987 481" fill="none" stroke="#10161a" stroke-width="1.05" stroke-linejoin="round" stroke-linecap="round" /><path d="M947 389 C958 385 968 381 976 380" fill="none" stroke="#10161a" stroke-width="1.05" stroke-linejoin="round" stroke-linecap="round" /><path d="M907 412 C915 408 935 412 947 416 C958 420 966 423 969 425 C976 429 979 434 978 441 C978 452 976 460 972 464 C968 467 960 466 956 465 C945 463 935 461 930 459 C920 455 912 450 908 445 C904 438 904 425 905 417 C905 414 906 412 907 412Z" fill="none" stroke="#10161a" stroke-width="1.05" stroke-linejoin="round" stroke-linecap="round" /><path d="M896 419 C910 422 925 427 941 432 C955 437 968 443 978 447 C985 449 992 451 998 451" fill="none" stroke="#10161a" stroke-width="1.05" stroke-linejoin="round" stroke-linecap="round" /><path d="M1008 429 C1015 427 1021 424 1026 422 M998 447 C1008 447 1016 446 1023 444" fill="none" stroke="#10161a" stroke-width="1.05" stroke-linejoin="round" stroke-linecap="round" /><path d="M901 396 C898 410 898 432 903 446 C915 458 935 468 950 474" fill="none" stroke="#10161a" stroke-width="1.05" stroke-linejoin="round" stroke-linecap="round" /><path d="M927 467 L942 473 L941 477 L926 471Z" fill="#d884c8" stroke="#a060a0" stroke-width=".5"/><path d="M860 469 C868 463 890 466 897 477 M866 484 C870 490 873 494 874 495 C884 493 894 488 899 484" fill="none" stroke="#10161a" stroke-width="1.05" stroke-linejoin="round" stroke-linecap="round" /><path d="M904 510 L904 561 M904 510 C908 506 911 505 914 505 C925 503 934 501 941 499" fill="none" stroke="#10161a" stroke-width="1.05" stroke-linejoin="round" stroke-linecap="round" /><path d="M941 499 C945 506 952 508 956 507 C970 510 982 506 989 502" fill="none" stroke="#10161a" stroke-width="1.05" stroke-linejoin="round" stroke-linecap="round" /><path d="M936 507 C930 515 926 527 922 544 M947 509 C941 518 938 527 934 544 M964 511 C958 518 955 527 949 544" fill="none" stroke="#10161a" stroke-width="1.05" stroke-linejoin="round" stroke-linecap="round" /><path d="M904 561 C925 565 945 570 964 576 C985 582 1005 585 1016 584" fill="none" stroke="#10161a" stroke-width="1.05" stroke-linejoin="round" stroke-linecap="round" /><g transform="translate(935.6 545) rotate(18)"><rect x="-24" y="-8" width="48" height="16" rx="8" fill="#8fafbe" stroke="#10161a" stroke-width="1"/><rect x="-21.5" y="-5.6" width="43" height="11.2" rx="5.6" fill="none" stroke="#10161a" stroke-width=".8"/><circle cx="-16" cy="0" r="3" fill="none" stroke="#10161a" stroke-width=".8"/><ellipse cx="-6.5" cy="0" rx="4.4" ry="3.2" fill="none" stroke="#10161a" stroke-width=".8"/><circle cx="8" cy="0" r="2.8" fill="none" stroke="#10161a" stroke-width=".8"/><circle cx="16" cy="0" r="2.8" fill="none" stroke="#10161a" stroke-width=".8"/></g><path d="M918 558 L918 566 M926 561 L926 569 M946 567 L946 575" fill="none" stroke="#10161a" stroke-width="1.05" stroke-linejoin="round" stroke-linecap="round" /><path d="M972 545 C976 534 994 531 1006 538 C1016 547 1018 568 1013 580 C1006 588 992 588 983 582 C973 572 970 555 972 545Z" fill="none" stroke="#10161a" stroke-width="1.05" stroke-linejoin="round" stroke-linecap="round" /><path d="M1002 484 C1012 488 1024 492 1031 494 M1006 502 C1016 506 1030 510 1040 512 M1018 492 L1020 520" fill="none" stroke="#10161a" stroke-width="1.05" stroke-linejoin="round" stroke-linecap="round" /><path d="M894 565 C910 570 930 577 950 582 C960 584 966 585 969 585" fill="none" stroke="#10161a" stroke-width="1.05" stroke-linejoin="round" stroke-linecap="round" /><path d="M932 560 C932 580 933 600 934 610 C936 630 938 645 941 654 C944 668 948 678 951 684" fill="none" stroke="#10161a" stroke-width="1.05" stroke-linejoin="round" stroke-linecap="round" /><path d="M1031 582 C1031 600 1030 615 1029 627 C1027 640 1024 652 1021 660" fill="none" stroke="#10161a" stroke-width="1.05" stroke-linejoin="round" stroke-linecap="round" /><path d="M902 630 C912 640 922 647 931 650 C945 656 960 659 972 659 C990 659 1004 657 1014 654 C1020 651 1024 649 1028 647" fill="none" stroke="#10161a" stroke-width="1.05" stroke-linejoin="round" stroke-linecap="round" /><path d="M924 674 C932 675 940 676 947 676 C962 677 976 676 989 674 C1000 672 1010 670 1018 667" fill="none" stroke="#10161a" stroke-width="1.05" stroke-linejoin="round" stroke-linecap="round" /><ellipse cx="999.2" cy="615" rx="4.4" ry="3" fill="#7f9fae" stroke="#10161a" stroke-width=".9" transform="rotate(-15 999 615)"/><ellipse cx="997.5" cy="633.6" rx="4.4" ry="3" fill="#7f9fae" stroke="#10161a" stroke-width=".9" transform="rotate(-15 997 633)"/><path d="M952 708 C960 716 990 716 1002 706 M950 722 C965 732 995 732 1010 720 M962 708 L958 738 M990 706 L998 736 M975 712 L975 738" fill="none" stroke="#10161a" stroke-width="0.8" stroke-linejoin="round" stroke-linecap="round" /><ellipse cx="976" cy="733" rx="30" ry="9" fill="#7a96a4" stroke="#10161a" stroke-width=".9"/><ellipse cx="976" cy="731" rx="20" ry="6" fill="#607a88" stroke="#10161a" stroke-width=".8"/><path d="M931 738 C945 746 965 750 981 750 C1000 750 1016 744 1024 736" fill="none" stroke="#10161a" stroke-width="1.05" stroke-linejoin="round" stroke-linecap="round" /><path d="M844 480 C841 490 840 500 841 507 C840 520 840 530 841 540 C841 550 842 556 842 561" fill="none" stroke="#10161a" stroke-width="1.05" stroke-linejoin="round" stroke-linecap="round" /><path d="M859 475 C853 482 850 487 849 490 C848 498 847 505 847 510" fill="none" stroke="#10161a" stroke-width="1.05" stroke-linejoin="round" stroke-linecap="round" /><path d="M830 552 C838 560 845 563 851 563 C860 565 868 566 874 566 C882 566 890 564 896 561 M830 557 C838 565 845 568 851 568 C860 570 868 571 874 570 C882 570 890 568 896 565" fill="none" stroke="#10161a" stroke-width="1.05" stroke-linejoin="round" stroke-linecap="round" /><path d="M892 572 C884 576 876 579 871 582 C868 585 866 588 866 591 L866 624 C866 635 867 642 867 649" fill="none" stroke="#10161a" stroke-width="1.05" stroke-linejoin="round" stroke-linecap="round" /><path d="M894 591 C888 592 884 593 881 594 C877 597 875 600 874 604 C873 615 872 630 872 641 C871 648 869 653 867 658" fill="none" stroke="#10161a" stroke-width="1.05" stroke-linejoin="round" stroke-linecap="round" /><path d="M896 582 C897 590 897 600 897 607" fill="none" stroke="#10161a" stroke-width="1.05" stroke-linejoin="round" stroke-linecap="round" /><path d="M829 607 C830 615 831 620 832 624 C834 634 837 642 841 649 C846 658 852 662 858 664 C864 662 868 656 870 648" fill="none" stroke="#10161a" stroke-width="0.8" stroke-linejoin="round" stroke-linecap="round" /><path d="M836 640 L850 656 M840 636 L856 652 M846 634 L860 648 M852 632 L864 644" fill="none" stroke="#28343c" stroke-width="0.6" stroke-linejoin="round" stroke-linecap="round" /><path d="M828 675 C836 680 842 683 847 684 C858 686 870 686 880 685 C890 684 898 682 905 680 M828 687 C838 692 846 694 855 694 C870 695 885 694 895 692 C900 691 903 690 905 690" fill="none" stroke="#10161a" stroke-width="1.05" stroke-linejoin="round" stroke-linecap="round" /><path d="M840 696 C838 700 838 705 838 710 L838 752 C838 760 840 765 843 768 M853 707 C855 712 855 718 855 724 L855 748 C855 756 853 762 850 766" fill="none" stroke="#10161a" stroke-width="1.05" stroke-linejoin="round" stroke-linecap="round" /><path d="M828 731 C838 734 846 735 855 736 C872 737 890 733 904 729" fill="none" stroke="#10161a" stroke-width="1.05" stroke-linejoin="round" stroke-linecap="round" /><path d="M874 594 C870 605 868 616 867 627 C862 640 852 648 844 654 C841 662 840 670 840 677" fill="none" stroke="#10161a" stroke-width="1.05" stroke-linejoin="round" stroke-linecap="round" /><circle cx="832" cy="522" r="1.6" fill="#6f8e9d" stroke="#10161a" stroke-width=".7"/><circle cx="850" cy="526" r="1.6" fill="#6f8e9d" stroke="#10161a" stroke-width=".7"/><circle cx="834.7" cy="556" r="1.6" fill="#6f8e9d" stroke="#10161a" stroke-width=".7"/><circle cx="851.5" cy="562" r="1.6" fill="#6f8e9d" stroke="#10161a" stroke-width=".7"/><circle cx="839" cy="600.6" r="1.6" fill="#6f8e9d" stroke="#10161a" stroke-width=".7"/><circle cx="857.3" cy="605.7" r="1.6" fill="#6f8e9d" stroke="#10161a" stroke-width=".7"/><circle cx="838.6" cy="600" r="1.6" fill="#6f8e9d" stroke="#10161a" stroke-width=".7"/><circle cx="888.8" cy="663.7" r="1.6" fill="#6f8e9d" stroke="#10161a" stroke-width=".7"/><circle cx="898.8" cy="659.6" r="1.6" fill="#6f8e9d" stroke="#10161a" stroke-width=".7"/><circle cx="865.3" cy="675.5" r="1.6" fill="#6f8e9d" stroke="#10161a" stroke-width=".7"/><circle cx="848" cy="628" r="1.6" fill="#6f8e9d" stroke="#10161a" stroke-width=".7"/><circle cx="836" cy="705" r="1.6" fill="#6f8e9d" stroke="#10161a" stroke-width=".7"/><path d="M1022 500 C1040 504 1056 516 1064 532 M1026 506 C1040 510 1052 520 1058 534 M1030 514 C1040 518 1048 526 1052 538 M1034 522 C1040 526 1044 532 1046 542" fill="none" stroke="#10161a" stroke-width="0.8" stroke-linejoin="round" stroke-linecap="round" /><path d="M1020 520 C1030 524 1040 534 1044 548 M1020 540 L1040 556 M1022 560 L1042 574 M1024 580 L1044 590" fill="none" stroke="#10161a" stroke-width="0.7" stroke-linejoin="round" stroke-linecap="round" /><path d="M1045 557 C1048 550 1051 546 1055 544 C1060 540 1066 539 1072 539 C1080 541 1086 546 1089 550 C1092 556 1094 562 1094 567 L1094 587 C1094 591 1095 594 1097 596 C1102 598 1108 597 1114 594 C1118 591 1121 588 1124 584" fill="none" stroke="#10161a" stroke-width="1.05" stroke-linejoin="round" stroke-linecap="round" /><path d="M1084 547 C1088 553 1090 560 1091 567 L1090 591 C1091 595 1093 598 1097 599 C1103 601 1110 600 1115.5 597 C1119 594 1122 591 1125 587" fill="none" stroke="#10161a" stroke-width="1.05" stroke-linejoin="round" stroke-linecap="round" /><path d="M1060 557 C1059 570 1059 580 1059 591 L1059 624 M1114 597 L1115.5 624" fill="none" stroke="#10161a" stroke-width="1.05" stroke-linejoin="round" stroke-linecap="round" /><path d="M1048 624 C1055 628 1061 630 1067 631 C1076 632 1085 633 1094 632 C1104 631 1113 628 1121 624 M1048 632 C1056 636 1062 638 1068 639 C1078 640 1086 641 1094 640 C1104 639 1113 636 1121 632" fill="none" stroke="#10161a" stroke-width="1.05" stroke-linejoin="round" stroke-linecap="round" /><path d="M1049 657 L1050 690 C1051 700 1053 706 1055 710 C1059 716 1063 718 1067 719 C1072 718 1077 716 1080 714 C1084 708 1086 700 1087 690 L1090 665 C1080 655 1060 652 1049 657Z" fill="#6f8c9b" stroke="#10161a" stroke-width="1.3" stroke-linejoin="round" /><path d="M1056 690 L1082 706 M1058 684 L1084 698 M1062 700 L1078 710" fill="none" stroke="#cfe0e6" stroke-width="0.7" stroke-linejoin="round" stroke-linecap="round" /><path d="M1090 665 C1094 660 1099 657 1104 655 C1110 655 1114 656 1117 658 C1121 664 1123 672 1124 682" fill="none" stroke="#10161a" stroke-width="1.05" stroke-linejoin="round" stroke-linecap="round" /><path d="M1090 665 C1090 675 1089 682 1089 690 C1088 698 1086 705 1084 710 C1078 716 1070 720 1062 722 C1060 726 1059 730 1059 734 L1059 832" fill="none" stroke="#10161a" stroke-width="1.05" stroke-linejoin="round" stroke-linecap="round" /><path d="M1102 658 L1102 749 M1114 749 L1115.5 832" fill="none" stroke="#10161a" stroke-width="1.05" stroke-linejoin="round" stroke-linecap="round" /><path d="M1047 740 C1054 745 1060 748 1067 750 C1078 752 1090 752 1100 750 C1110 748 1118 745 1124 740 M1047 748 C1054 753 1060 756 1067 758 C1078 760 1090 760 1100 758 C1110 756 1118 753 1124 748" fill="none" stroke="#10161a" stroke-width="1.05" stroke-linejoin="round" stroke-linecap="round" /><path d="M1050 764 C1048 768 1048 772 1048 776 L1048 822 C1048 828 1050 832 1053 834 M1059 766 C1054 764 1051 764 1050 764" fill="none" stroke="#10161a" stroke-width="1.05" stroke-linejoin="round" stroke-linecap="round" /><path d="M1048 794 C1056 797 1066 799 1075 799 C1092 799 1110 795 1124 789" fill="none" stroke="#10161a" stroke-width="1.05" stroke-linejoin="round" stroke-linecap="round" /><path d="M1060 832 C1068 836 1076 837 1084 837 C1096 837 1107 835 1115.5 832" fill="none" stroke="#10161a" stroke-width="1.05" stroke-linejoin="round" stroke-linecap="round" /><circle cx="1051" cy="584" r="1.6" fill="#6f8e9d" stroke="#10161a" stroke-width=".7"/><circle cx="1068.6" cy="589" r="1.6" fill="#6f8e9d" stroke="#10161a" stroke-width=".7"/><circle cx="1100.4" cy="584.7" r="1.6" fill="#6f8e9d" stroke="#10161a" stroke-width=".7"/><circle cx="1053.5" cy="620" r="1.6" fill="#6f8e9d" stroke="#10161a" stroke-width=".7"/><circle cx="1070.3" cy="625" r="1.6" fill="#6f8e9d" stroke="#10161a" stroke-width=".7"/><circle cx="1105.4" cy="694.4" r="1.6" fill="#6f8e9d" stroke="#10161a" stroke-width=".7"/><circle cx="1117" cy="690" r="1.6" fill="#6f8e9d" stroke="#10161a" stroke-width=".7"/><circle cx="1107" cy="725.3" r="1.6" fill="#6f8e9d" stroke="#10161a" stroke-width=".7"/><circle cx="1118" cy="720.3" r="1.6" fill="#6f8e9d" stroke="#10161a" stroke-width=".7"/><circle cx="1062" cy="662" r="1.6" fill="#6f8e9d" stroke="#10161a" stroke-width=".7"/><circle cx="1072" cy="668" r="1.6" fill="#6f8e9d" stroke="#10161a" stroke-width=".7"/><ellipse cx="1082" cy="772" rx="4" ry="2.4" fill="#7f9fae" stroke="#10161a" stroke-width=".8"/><ellipse cx="1082" cy="825" rx="4" ry="2.4" fill="#7f9fae" stroke="#10161a" stroke-width=".8"/><path d="M917 760 C911 768 908 777 907 794 M947 760 C946 775 945 785 946 794 M969 760 C968 775 967 790 967 799 M984 760 C983 775 982 790 982 802" fill="none" stroke="#10161a" stroke-width="1.05" stroke-linejoin="round" stroke-linecap="round" /><path d="M907 794 C918 793 926 793 934 794 C948 795 958 796 967 799 C976 802 984 806 989 810 C994 813 998 815 1001 817" fill="none" stroke="#10161a" stroke-width="1.05" stroke-linejoin="round" stroke-linecap="round" /><path d="M989 810 C1000 803 1010 797 1018 794 C1028 789 1036 785 1044 782 M984 834 C996 826 1008 818 1018 814 C1028 808 1038 803 1048 799 M986 847 C1000 838 1018 830 1034 824" fill="none" stroke="#10161a" stroke-width="1.05" stroke-linejoin="round" stroke-linecap="round" /><path d="M894 810 C900 818 908 825 917 830 C926 835 936 839 944 840 M892 804 C898 812 906 820 915 825 C926 831 936 834 946 835" fill="none" stroke="#10161a" stroke-width="1.05" stroke-linejoin="round" stroke-linecap="round" /><path d="M1024 773 L1034 769 L1039 780 L1029 784Z" fill="#8eacbb" stroke="#10161a" stroke-width=".9"/><path d="M1027 774.5 L1033 772 L1036 779 L1030 781.5Z" fill="none" stroke="#10161a" stroke-width=".7"/><path d="M874 803 C872 815 871 830 872 844 C873 860 875 874 877 884 M894 810 C898 822 900 832 900 844 C900 858 899 868 899 877" fill="none" stroke="#10161a" stroke-width="1.05" stroke-linejoin="round" stroke-linecap="round" /><path d="M858 854 C864 858 870 860 875 860 C885 861 895 860 902 857 M857 840 C862 843 868 845 874 845 C884 846 894 844 901 841" fill="none" stroke="#10161a" stroke-width="1.05" stroke-linejoin="round" stroke-linecap="round" /><path d="M867 827 C869 823 872 821 875 822 C878 822 881 824 882 827" fill="none" stroke="#10161a" stroke-width="1.05" stroke-linejoin="round" stroke-linecap="round" /><rect x="859.6" y="843" width="2.8" height="10" rx="1.4" fill="#7f9fae" stroke="#10161a" stroke-width=".8"/><rect x="888" y="851" width="3" height="11" rx="1.5" fill="#7f9fae" stroke="#10161a" stroke-width=".8"/><path d="M903 860 C904 867 905 872 907 877 C913 882 920 884 927 884 C934 883 940 880 944 877 M924 860 C928 864 931 866 934 867 C938 868 941 868 944 867" fill="none" stroke="#10161a" stroke-width="1.05" stroke-linejoin="round" stroke-linecap="round" /><path d="M863 890 C870 893 877 894 884 894 C895 894 907 893 917 890 C927 889 937 887 945 884" fill="none" stroke="#10161a" stroke-width="1.05" stroke-linejoin="round" stroke-linecap="round" /><path d="M872 894 L872 985 M877 899 C878 903 878 907 879 911 C887 911 894 910 900 909" fill="none" stroke="#10161a" stroke-width="1.05" stroke-linejoin="round" stroke-linecap="round" /><path d="M899 927 C910 927 922 926 934 924 C939 920 942 916 945 911" fill="none" stroke="#10161a" stroke-width="1.05" stroke-linejoin="round" stroke-linecap="round" /><path d="M890 985 C890 972 892 962 894 952 C898 946 902 942 907 941 C914 939 920 938 927 939 C934 942 940 946 944 951 C947 957 948 963 949 969" fill="none" stroke="#10161a" stroke-width="1.05" stroke-linejoin="round" stroke-linecap="round" /><path d="M890 984 C891 976 892 970 894 965 C898 957 902 952 907 948 C914 945 920 943 927 943 C934 945 940 949 944 953 C947 960 949 967 949 974 L949 1165" fill="none" stroke="#10161a" stroke-width="1.05" stroke-linejoin="round" stroke-linecap="round" /><path d="M904 990 C905 980 906 972 907 965 C910 960 913 957 917 955 C921 954 925 954 929 955 C932 960 934 966 935.5 974 L937 1165" fill="none" stroke="#10161a" stroke-width="1.05" stroke-linejoin="round" stroke-linecap="round" /><path d="M927 1004 L927 1165 M921 1010 L921 1160" fill="none" stroke="#10161a" stroke-width="0.8" stroke-linejoin="round" stroke-linecap="round" /><path d="M863 974 C870 979 877 982 884 984 C892 986 900 987 907 987" fill="none" stroke="#10161a" stroke-width="1.05" stroke-linejoin="round" stroke-linecap="round" /><path d="M869 1027 C872 1022 875 1020 879 1019 C883 1019 886 1020 889 1022 C888 1026 886 1029 884 1030 C880 1032 877 1033 874 1034" fill="none" stroke="#10161a" stroke-width="1.05" stroke-linejoin="round" stroke-linecap="round" /><path d="M872 1044 C872 1047 873 1049 874 1050 C879 1051 883 1050 887 1047 C891 1043 893 1039 894 1034 C894 1028 893 1022 893 1017" fill="none" stroke="#10161a" stroke-width="1.05" stroke-linejoin="round" stroke-linecap="round" /><path d="M864 1056 C870 1059 875 1060 880 1060.5 C888 1059 895 1054 900 1047 C904 1040 905 1032 905 1024" fill="none" stroke="#10161a" stroke-width="1.05" stroke-linejoin="round" stroke-linecap="round" /><path d="M878 1064 L879 1129 M890 1057 L891 1132" fill="none" stroke="#10161a" stroke-width="1.05" stroke-linejoin="round" stroke-linecap="round" /><path d="M865 1124 C870 1128 875 1131 880 1132 C887 1134 894 1135 900 1136 C908 1135 915 1134 920 1132" fill="none" stroke="#10161a" stroke-width="1.05" stroke-linejoin="round" stroke-linecap="round" /><path d="M947 1025 C949 1028 950 1031 951 1034 L951 1057 C950 1060 949 1062 947 1064" fill="none" stroke="#10161a" stroke-width="1.05" stroke-linejoin="round" stroke-linecap="round" /><rect x="922.5" y="1003" width="9" height="3.4" fill="#8eacbb" stroke="#10161a" stroke-width=".7" transform="rotate(-18 927 1004)"/><rect x="922.5" y="1069" width="9" height="3.4" fill="#8eacbb" stroke="#10161a" stroke-width=".7" transform="rotate(-18 927 1070)"/><rect x="922.5" y="1131" width="9" height="3.4" fill="#8eacbb" stroke="#10161a" stroke-width=".7" transform="rotate(-18 927 1132)"/><path d="M879 1110 L885.5 1173 M894.6 1133 L899 1175 M919.5 1133 L915 1173 M928.5 1110 L926 1173 M939.8 1110 L935 1171" fill="none" stroke="#10161a" stroke-width="1.05" stroke-linejoin="round" stroke-linecap="round" /><path d="M885 1176 L890 1188 M893 1176 L897 1190 M903 1178 L905 1190 M913 1176 L916 1188 M923 1176 L927 1187 M932 1174 L938 1184 M888 1182 L936 1178" fill="none" stroke="#10161a" stroke-width="0.8" stroke-linejoin="round" stroke-linecap="round" /><path d="M861 1191 C866 1185 871 1182 876.5 1180 C890 1176 930 1172 946.6 1173 C952 1175 955 1177 955.6 1180 C950 1186 942 1190 933 1193.6 C918 1198 900 1200 888 1200 C878 1200 870 1199 865 1198 C862 1196 861 1193 861 1191Z" fill="none" stroke="#10161a" stroke-width="1.05" stroke-linejoin="round" stroke-linecap="round" /><path d="M856 1209.5 C860 1203 865 1198 870 1194 M906 1196 C907 1204 908 1212 908 1219 M937.5 1184.6 C941 1190 944 1195 946.6 1200" fill="none" stroke="#10161a" stroke-width="1.05" stroke-linejoin="round" stroke-linecap="round" /><path d="M842.6 1207 C855 1217 870 1222 888 1223 C910 1222 928 1216 942 1207 C952 1202 960 1197 964.7 1191 M844 1211 C856 1221 870 1226 888 1227 C910 1226 928 1220 942 1211 C952 1206 960 1201 964 1195" fill="none" stroke="#10161a" stroke-width="0.9" stroke-linejoin="round" stroke-linecap="round" /><circle cx="850.5" cy="1192.5" r="1.7" fill="#dfeaf0" stroke="#10161a" stroke-width=".7"/><circle cx="884.4" cy="1201.5" r="1.7" fill="#dfeaf0" stroke="#10161a" stroke-width=".7"/><circle cx="955" cy="1174.4" r="1.7" fill="#dfeaf0" stroke="#10161a" stroke-width=".7"/><circle cx="929.6" cy="1189" r="1.7" fill="#dfeaf0" stroke="#10161a" stroke-width=".7"/><circle cx="937.5" cy="1186.9" r="1.7" fill="#dfeaf0" stroke="#10161a" stroke-width=".7"/><path d="M1042 842 C1030 860 1028 900 1036 934 M1060 842 C1075 860 1082 890 1078 925" fill="none" stroke="#10161a" stroke-width="1.05" stroke-linejoin="round" stroke-linecap="round" /><path d="M999 896 C1010 903 1022 906 1034 906 C1050 906 1066 901 1080 894 M1000 880 C1012 887 1024 890 1034 890 C1050 890 1066 885 1084 876" fill="none" stroke="#10161a" stroke-width="1.05" stroke-linejoin="round" stroke-linecap="round" /><path d="M1016 868 C1018 862 1022 859 1027 859 C1032 859 1036 863 1038 868" fill="none" stroke="#10161a" stroke-width="1.05" stroke-linejoin="round" stroke-linecap="round" /><rect x="1003" y="884" width="3" height="12" rx="1.5" fill="#7f9fae" stroke="#10161a" stroke-width=".8"/><rect x="1030.5" y="893" width="3.2" height="13" rx="1.6" fill="#7f9fae" stroke="#10161a" stroke-width=".8"/><path d="M1048 842 C1062 852 1070 880 1064 912 M1054 842 C1068 854 1076 880 1070 916 M1066 848 C1080 862 1086 888 1080 920" fill="none" stroke="#10161a" stroke-width="0.9" stroke-linejoin="round" stroke-linecap="round" /><path d="M1052 862 L1062 858 M1056 874 L1066 870 M1058 886 L1068 882 M1058 898 L1068 896 M1056 908 L1066 908" fill="none" stroke="#28343c" stroke-width="0.8" stroke-linejoin="round" stroke-linecap="round" /><path d="M1029 940 L1029 1024 M1051 940 L1051 1027 M1071 950 L1071 1020" fill="none" stroke="#10161a" stroke-width="1.05" stroke-linejoin="round" stroke-linecap="round" /><path d="M1008 940 C1020 944 1035 946 1050 946 C1065 946 1078 943 1088 938" fill="none" stroke="#10161a" stroke-width="1.05" stroke-linejoin="round" stroke-linecap="round" /><ellipse cx="1077.8" cy="956" rx="3.6" ry="1.8" fill="none" stroke="#10161a" stroke-width=".8" transform="rotate(-20 1077.8 956)"/><ellipse cx="1077.8" cy="980" rx="3.6" ry="1.8" fill="none" stroke="#10161a" stroke-width=".8" transform="rotate(-20 1077.8 980)"/><path d="M1021 1024 C1025 1026 1030 1027 1034 1027 C1045 1028 1057 1027 1068 1025 C1076 1023 1083 1021 1089.5 1018.6" fill="none" stroke="#10161a" stroke-width="1.05" stroke-linejoin="round" stroke-linecap="round" /><path d="M1022.6 1034 C1025 1040 1028 1044 1031 1047 C1037 1052 1044 1055 1051 1055.5 C1057 1054 1063 1052 1068 1049 C1075 1044 1080 1039 1084.5 1034" fill="none" stroke="#10161a" stroke-width="1.05" stroke-linejoin="round" stroke-linecap="round" /><path d="M1003 1015 C1004 1005 1006 997 1009 990 C1012 984 1016 980 1021 977 M1016 997 C1013 1005 1012 1012 1012.5 1020 C1012 1028 1013 1034 1014 1040 C1016 1046 1020 1050 1024 1054 C1030 1057 1036 1059 1041 1060.5" fill="none" stroke="#10161a" stroke-width="1.05" stroke-linejoin="round" stroke-linecap="round" /><path d="M1003 1057 C1005 1064 1008 1069 1011 1074 C1015 1078 1019 1080 1024 1082 C1033 1084 1042 1084 1051 1084" fill="none" stroke="#10161a" stroke-width="1.05" stroke-linejoin="round" stroke-linecap="round" /><path d="M1029 1077 C1036 1075 1044 1073 1051 1072 C1060 1070 1068 1068 1076 1067 C1081 1069 1086 1071 1089.5 1074" fill="none" stroke="#10161a" stroke-width="1.05" stroke-linejoin="round" stroke-linecap="round" /><path d="M1003 1096 C1010 1100 1018 1103 1026 1106 C1034 1108 1042 1109 1051 1109 C1059 1108 1067 1107 1074 1106" fill="none" stroke="#10161a" stroke-width="1.05" stroke-linejoin="round" stroke-linecap="round" /><path d="M1021 1107 L1022.6 1165 M1037.6 1109 L1038.5 1165 M1071 1074 L1074.4 1165 M1084.5 1082 L1088 1165" fill="none" stroke="#10161a" stroke-width="1.05" stroke-linejoin="round" stroke-linecap="round" /><path d="M1066 1062 L1074 1058 L1080 1062 L1084 1070" fill="none" stroke="#10161a" stroke-width="0.8" stroke-linejoin="round" stroke-linecap="round" /><path d="M1004 1154 C1015 1160 1030 1163 1045 1163 C1060 1162 1070 1160 1078 1156" fill="none" stroke="#10161a" stroke-width="1.05" stroke-linejoin="round" stroke-linecap="round" /><path d="M1022.6 1165 L1030 1210 M1038.5 1165 L1042 1208 M1074.4 1165 L1070 1206 M1088 1165 L1082 1204 M1060 1120 L1062 1205" fill="none" stroke="#10161a" stroke-width="0.9" stroke-linejoin="round" stroke-linecap="round" /><path d="M1022 1214 L1028 1226 M1032 1212 L1036 1228 M1042 1212 L1045 1228 M1054 1212 L1056 1226 M1064 1210 L1068 1224 M1074 1208 L1080 1220 M1026 1220 L1078 1214" fill="none" stroke="#10161a" stroke-width="0.8" stroke-linejoin="round" stroke-linecap="round" /><path d="M1001 1237 C1006 1230 1012 1226 1019 1223 C1034 1219 1052 1217 1068.6 1216 C1078 1216 1086 1217 1091 1218.5 C1095 1220 1097 1222 1098 1225 C1092 1231 1084 1235 1075 1239 C1060 1243 1044 1245 1030 1245.6 C1020 1245 1012 1244 1007.6 1243 C1003 1241 1001 1239 1001 1237Z" fill="none" stroke="#10161a" stroke-width="1.05" stroke-linejoin="round" stroke-linecap="round" /><path d="M999 1254 C1003 1247 1007 1242 1012 1238 M1049 1241 C1050 1249 1051 1256 1051 1262 M1080 1228 C1084 1234 1087 1240 1090 1246" fill="none" stroke="#10161a" stroke-width="1.05" stroke-linejoin="round" stroke-linecap="round" /><path d="M986 1250 C998 1260 1014 1265 1031 1266 C1052 1265 1070 1259 1084 1251 C1094 1245 1102 1239 1107 1233 M987.5 1254 C1000 1264 1014 1269 1031 1270 C1052 1269 1070 1263 1084 1255 C1094 1249 1102 1243 1106.5 1237" fill="none" stroke="#10161a" stroke-width="0.9" stroke-linejoin="round" stroke-linecap="round" /><circle cx="994" cy="1237" r="1.7" fill="#dfeaf0" stroke="#10161a" stroke-width=".7"/><circle cx="1027" cy="1246.6" r="1.7" fill="#dfeaf0" stroke="#10161a" stroke-width=".7"/><circle cx="1098.5" cy="1218" r="1.7" fill="#dfeaf0" stroke="#10161a" stroke-width=".7"/><circle cx="1072" cy="1233" r="1.7" fill="#dfeaf0" stroke="#10161a" stroke-width=".7"/><circle cx="1080.5" cy="1230.6" r="1.7" fill="#dfeaf0" stroke="#10161a" stroke-width=".7"/><path d="M833 612 C836 626 840 640 846 652 C852 660 858 664 864 662 C868 654 868 640 866 628 C856 624 844 618 833 612Z" fill="#5f7b89" stroke="#10161a" stroke-width=".9" stroke-linejoin="round"/><path d="M838 620 L860 650 M842 618 L864 646 M848 620 L866 640 M840 634 L856 656 M846 644 L862 660" fill="none" stroke="#0c1216" stroke-width="0.8" stroke-linejoin="round" stroke-linecap="round" /><ellipse cx="858" cy="645" rx="7" ry="4.5" fill="#7d98a5" stroke="#10161a" stroke-width=".8" transform="rotate(-20 858 645)"/><ellipse cx="858" cy="645" rx="4" ry="2.4" fill="none" stroke="#10161a" stroke-width=".7" transform="rotate(-20 858 645)"/><circle cx="851" cy="643" r="1" fill="#2030d0"/><circle cx="866" cy="642" r="1" fill="#2030d0"/><path d="M952 706 L1000 704 L1008 720 L996 734 L960 736 L948 722Z" fill="#4f6874" stroke="#10161a" stroke-width=".9" stroke-linejoin="round"/><path d="M956 708 L962 734 M964 706 L968 736 M972 706 L974 738 M982 705 L982 737 M990 705 L992 735 M998 706 L1002 728 M950 714 L1006 712 M950 722 L1008 720" fill="none" stroke="#0c1216" stroke-width="0.8" stroke-linejoin="round" stroke-linecap="round" /><circle cx="962" cy="716" r="5" fill="#7d98a5" stroke="#10161a" stroke-width=".8"/><circle cx="962" cy="716" r="2.4" fill="none" stroke="#10161a" stroke-width=".7"/><circle cx="992" cy="722" r="4" fill="#7d98a5" stroke="#10161a" stroke-width=".8"/><ellipse cx="976" cy="737" rx="34" ry="9.5" fill="#8faab7" stroke="#10161a" stroke-width=".9"/><ellipse cx="976" cy="735.5" rx="27" ry="7.2" fill="#7a96a4" stroke="#10161a" stroke-width=".8"/><ellipse cx="976" cy="734" rx="19" ry="5" fill="#5a7380" stroke="#10161a" stroke-width=".8"/><path d="M960 733 L964 738 M970 731 L972 739 M982 731 L982 739 M990 732 L988 738" fill="none" stroke="#0c1216" stroke-width="0.7" stroke-linejoin="round" stroke-linecap="round" /><path d="M1018 700 L1030 690 L1046 700 L1046 740 L1034 748 L1022 730Z" fill="#6a8592" stroke="#10161a" stroke-width=".9" stroke-linejoin="round"/><path d="M1022 704 L1040 730 M1026 698 L1044 724 M1030 712 L1030 742 M1036 706 L1036 744 M1020 716 L1044 712" fill="none" stroke="#0c1216" stroke-width="0.8" stroke-linejoin="round" stroke-linecap="round" /><circle cx="1034" cy="722" r="5" fill="#8faab7" stroke="#10161a" stroke-width=".8"/><circle cx="1034" cy="722" r="2.6" fill="none" stroke="#10161a" stroke-width=".7"/><path d="M884 1174 L940 1170 L946 1184 L934 1190 L892 1192Z" fill="#506874" stroke="#10161a" stroke-width=".9" stroke-linejoin="round"/><path d="M886 1176 L892 1190 M890 1175 L898 1191 M896 1175 L902 1191 M902 1174 L908 1190 M910 1174 L914 1190 M918 1173 L922 1189 M926 1172 L930 1188 M932 1171 L938 1186 M938 1171 L944 1184 M886 1182 L944 1177 M888 1187 L940 1183" fill="none" stroke="#0c1216" stroke-width="0.8" stroke-linejoin="round" stroke-linecap="round" /><path d="M1020 1212 L1082 1206 L1088 1220 L1074 1228 L1030 1230Z" fill="#506874" stroke="#10161a" stroke-width=".9" stroke-linejoin="round"/><path d="M1022 1214 L1030 1229 M1028 1213 L1036 1229 M1036 1212 L1042 1228 M1044 1211 L1048 1228 M1052 1210 L1056 1227 M1060 1210 L1064 1226 M1068 1209 L1072 1225 M1076 1208 L1082 1222 M1022 1221 L1086 1214 M1026 1226 L1080 1220" fill="none" stroke="#0c1216" stroke-width="0.8" stroke-linejoin="round" stroke-linecap="round" /><path d="M1050 846 C1064 856 1072 882 1066 912 L1058 916 C1064 888 1058 862 1044 850Z" fill="#4f6874" stroke="#10161a" stroke-width=".9" stroke-linejoin="round"/><path d="M1050 852 L1058 849 M1055 862 L1064 858 M1059 874 L1068 870 M1061 886 L1070 884 M1061 898 L1070 898 M1059 908 L1067 910" fill="none" stroke="#0c1216" stroke-width="0.9" stroke-linejoin="round" stroke-linecap="round" /><path d="M1024 512 C1036 516 1046 526 1050 540 L1044 548 C1040 534 1032 524 1022 520Z" fill="#5a7684" stroke="#10161a" stroke-width=".9" stroke-linejoin="round"/><path d="M1026 514 L1032 522 M1032 516 L1038 526 M1038 520 L1044 532 M1042 526 L1048 538" fill="none" stroke="#0c1216" stroke-width="0.8" stroke-linejoin="round" stroke-linecap="round" /><g><path d="M1014.7 502.4 L933.3 536.1 L933.3 437.6 L1014.7 403.9Z" fill="rgba(178,120,60,.018)" stroke="#c07a0a" stroke-width=".9" stroke-opacity=".8"/><path d="M1016.5 530.7 L931.5 507.8 L931.5 409.3 L1016.5 432.2Z" fill="rgba(178,120,60,.018)" stroke="#c07a0a" stroke-width=".9" stroke-opacity=".8"/><path d="M1057.2 464.6 L972.2 441.7 L890.8 475.4 L975.8 498.3Z" fill="rgba(178,120,60,.018)" stroke="#c07a0a" stroke-width=".9" stroke-opacity=".8"/><path d="M908.5 503.9 L823.5 539.1 L823.5 436.1 L908.5 400.9Z" fill="rgba(178,120,60,.018)" stroke="#c07a0a" stroke-width=".9" stroke-opacity=".8"/><path d="M910.4 533.5 L821.6 509.6 L821.6 406.5 L910.4 430.4Z" fill="rgba(178,120,60,.018)" stroke="#c07a0a" stroke-width=".9" stroke-opacity=".8"/><path d="M952.9 464.3 L864.1 440.4 L779.1 475.7 L867.9 499.6Z" fill="rgba(178,120,60,.018)" stroke="#c07a0a" stroke-width=".9" stroke-opacity=".8"/><path d="M904.8 671.0 L827.2 703.1 L827.2 609.0 L904.8 576.9Z" fill="rgba(178,120,60,.018)" stroke="#c07a0a" stroke-width=".9" stroke-opacity=".8"/><path d="M906.6 698.0 L825.4 676.1 L825.4 582.0 L906.6 603.9Z" fill="rgba(178,120,60,.018)" stroke="#c07a0a" stroke-width=".9" stroke-opacity=".8"/><path d="M945.4 634.8 L864.2 613.0 L786.6 645.2 L867.8 667.0Z" fill="rgba(178,120,60,.018)" stroke="#c07a0a" stroke-width=".9" stroke-opacity=".8"/><path d="M917.0 749.5 L843.0 780.1 L843.0 690.5 L917.0 659.9Z" fill="rgba(178,120,60,.018)" stroke="#c07a0a" stroke-width=".9" stroke-opacity=".8"/><path d="M955.6 715.1 L878.3 694.3 L804.4 724.9 L881.7 745.7Z" fill="rgba(178,120,60,.018)" stroke="#c07a0a" stroke-width=".9" stroke-opacity=".8"/><path d="M1132.5 723.9 L1047.5 759.1 L1047.5 656.1 L1132.5 620.9Z" fill="rgba(178,120,60,.018)" stroke="#c07a0a" stroke-width=".9" stroke-opacity=".8"/><path d="M1134.4 753.5 L1045.6 729.6 L1045.6 626.5 L1134.4 650.4Z" fill="rgba(178,120,60,.018)" stroke="#c07a0a" stroke-width=".9" stroke-opacity=".8"/><path d="M1176.9 684.3 L1088.1 660.4 L1003.1 695.7 L1091.9 719.6Z" fill="rgba(178,120,60,.018)" stroke="#c07a0a" stroke-width=".9" stroke-opacity=".8"/><path d="M1014.7 692.4 L933.3 726.1 L933.3 627.6 L1014.7 593.9Z" fill="rgba(178,120,60,.018)" stroke="#c07a0a" stroke-width=".9" stroke-opacity=".8"/><path d="M1016.5 720.7 L931.5 697.8 L931.5 599.3 L1016.5 622.2Z" fill="rgba(178,120,60,.018)" stroke="#c07a0a" stroke-width=".9" stroke-opacity=".8"/><path d="M1057.2 654.6 L972.2 631.7 L890.8 665.4 L975.8 688.3Z" fill="rgba(178,120,60,.018)" stroke="#c07a0a" stroke-width=".9" stroke-opacity=".8"/><path d="M1012.6 785.2 L935.4 764.4 L935.4 674.8 L1012.6 695.6Z" fill="rgba(178,120,60,.018)" stroke="#c07a0a" stroke-width=".9" stroke-opacity=".8"/><path d="M1049.6 725.1 L972.3 704.3 L898.4 734.9 L975.7 755.7Z" fill="rgba(178,120,60,.018)" stroke="#c07a0a" stroke-width=".9" stroke-opacity=".8"/><path d="M922.5 873.9 L837.5 909.1 L837.5 806.1 L922.5 770.9Z" fill="rgba(178,120,60,.018)" stroke="#c07a0a" stroke-width=".9" stroke-opacity=".8"/><path d="M924.4 903.5 L835.6 879.6 L835.6 776.5 L924.4 800.4Z" fill="rgba(178,120,60,.018)" stroke="#c07a0a" stroke-width=".9" stroke-opacity=".8"/><path d="M966.9 834.3 L878.1 810.4 L793.1 845.7 L881.9 869.6Z" fill="rgba(178,120,60,.018)" stroke="#c07a0a" stroke-width=".9" stroke-opacity=".8"/><path d="M943.8 936.0 L866.2 968.1 L866.2 874.0 L943.8 841.9Z" fill="rgba(178,120,60,.018)" stroke="#c07a0a" stroke-width=".9" stroke-opacity=".8"/><path d="M984.4 899.8 L903.2 878.0 L825.6 910.2 L906.8 932.0Z" fill="rgba(178,120,60,.018)" stroke="#c07a0a" stroke-width=".9" stroke-opacity=".8"/><path d="M953.8 1041.0 L876.2 1073.1 L876.2 979.0 L953.8 946.9Z" fill="rgba(178,120,60,.018)" stroke="#c07a0a" stroke-width=".9" stroke-opacity=".8"/><path d="M955.6 1068.0 L874.4 1046.1 L874.4 952.0 L955.6 973.9Z" fill="rgba(178,120,60,.018)" stroke="#c07a0a" stroke-width=".9" stroke-opacity=".8"/><path d="M994.4 1004.8 L913.2 983.0 L835.6 1015.2 L916.8 1037.0Z" fill="rgba(178,120,60,.018)" stroke="#c07a0a" stroke-width=".9" stroke-opacity=".8"/><path d="M1022.0 1089.5 L948.0 1120.1 L948.0 1030.5 L1022.0 999.9Z" fill="rgba(178,120,60,.018)" stroke="#c07a0a" stroke-width=".9" stroke-opacity=".8"/><path d="M1023.6 1115.2 L946.4 1094.4 L946.4 1004.8 L1023.6 1025.6Z" fill="rgba(178,120,60,.018)" stroke="#c07a0a" stroke-width=".9" stroke-opacity=".8"/><path d="M1022.0 1139.5 L948.0 1170.1 L948.0 1080.5 L1022.0 1049.9Z" fill="rgba(178,120,60,.018)" stroke="#c07a0a" stroke-width=".9" stroke-opacity=".8"/><path d="M1023.6 1165.2 L946.4 1144.4 L946.4 1054.8 L1023.6 1075.6Z" fill="rgba(178,120,60,.018)" stroke="#c07a0a" stroke-width=".9" stroke-opacity=".8"/><path d="M983.3 1176.5 L916.7 1204.1 L916.7 1123.5 L983.3 1095.9Z" fill="rgba(178,120,60,.018)" stroke="#c07a0a" stroke-width=".9" stroke-opacity=".8"/><path d="M984.8 1199.7 L915.2 1181.0 L915.2 1100.3 L984.8 1119.0Z" fill="rgba(178,120,60,.018)" stroke="#c07a0a" stroke-width=".9" stroke-opacity=".8"/><path d="M1018.0 1145.6 L948.5 1126.9 L882.0 1154.4 L951.5 1173.1Z" fill="rgba(178,120,60,.018)" stroke="#c07a0a" stroke-width=".9" stroke-opacity=".8"/><path d="M1087.5 923.9 L1002.5 959.1 L1002.5 856.1 L1087.5 820.9Z" fill="rgba(178,120,60,.018)" stroke="#c07a0a" stroke-width=".9" stroke-opacity=".8"/><path d="M1089.4 953.5 L1000.6 929.6 L1000.6 826.5 L1089.4 850.4Z" fill="rgba(178,120,60,.018)" stroke="#c07a0a" stroke-width=".9" stroke-opacity=".8"/><path d="M1131.9 884.3 L1043.1 860.4 L958.1 895.7 L1046.9 919.6Z" fill="rgba(178,120,60,.018)" stroke="#c07a0a" stroke-width=".9" stroke-opacity=".8"/><path d="M1088.8 1066.0 L1011.2 1098.1 L1011.2 1004.0 L1088.8 971.9Z" fill="rgba(178,120,60,.018)" stroke="#c07a0a" stroke-width=".9" stroke-opacity=".8"/><path d="M1090.6 1093.0 L1009.4 1071.1 L1009.4 977.0 L1090.6 998.9Z" fill="rgba(178,120,60,.018)" stroke="#c07a0a" stroke-width=".9" stroke-opacity=".8"/><path d="M1129.4 1029.8 L1048.2 1008.0 L970.6 1040.2 L1051.8 1062.0Z" fill="rgba(178,120,60,.018)" stroke="#c07a0a" stroke-width=".9" stroke-opacity=".8"/><path d="M828.6 715.2 L751.4 694.4 L751.4 604.8 L828.6 625.6Z" fill="rgba(178,120,60,.018)" stroke="#c07a0a" stroke-width=".9" stroke-opacity=".8"/><path d="M865.6 655.1 L788.3 634.3 L714.4 664.9 L791.7 685.7Z" fill="rgba(178,120,60,.018)" stroke="#c07a0a" stroke-width=".9" stroke-opacity=".8"/><path d="M1125.3 1088.6 L1093.3 1102.0 L1093.3 1197.0 L1125.3 1183.8Z" fill="rgba(178,120,60,.018)" stroke="#c07a0a" stroke-width=".9" stroke-opacity=".85"/><path d="M1148.7 1084.0 L1093.3 1105.8 L1093.3 1201.8 L1148.7 1180.0Z" fill="rgba(178,120,60,.018)" stroke="#c07a0a" stroke-width=".9" stroke-opacity=".85"/><path d="M1091.7 1112.0 L1159.6 1132.3 L1159.6 1227.5 L1091.7 1207.0Z" fill="rgba(178,120,60,.018)" stroke="#c07a0a" stroke-width=".9" stroke-opacity=".85"/><path d="M1083.0 1122.0 L1136.2 1137.0 L1136.2 1232.2 L1083.0 1217.0Z" fill="rgba(178,120,60,.018)" stroke="#c07a0a" stroke-width=".9" stroke-opacity=".85"/><path d="M1050.3 458.4 L1127.1 480.5 L1127.1 575.4 L1050.3 553.0Z" fill="rgba(178,120,60,.018)" stroke="#c07a0a" stroke-width=".9" stroke-opacity=".85"/><path d="M1098.5 462.5 L1165.6 436.4 L1165.6 532.0 L1098.5 558.2Z" fill="rgba(178,120,60,.018)" stroke="#c07a0a" stroke-width=".9" stroke-opacity=".85"/><path d="M1050.3 458.4 L1116.5 432.3 L1116.5 528.0 L1050.3 554.0Z" fill="rgba(178,120,60,.018)" stroke="#c07a0a" stroke-width=".9" stroke-opacity=".85"/><path d="M1085.4 510.0 L1193.4 550.8 L1127.1 575.4 L1020.0 535.0Z" fill="rgba(178,120,60,.018)" stroke="#c07a0a" stroke-width=".9" stroke-opacity=".85"/><path d="M788.7 440.0 L866.0 461.0 L866.0 560.0 L788.7 539.0Z" fill="rgba(178,120,60,.018)" stroke="#c07a0a" stroke-width=".9" stroke-opacity=".85"/><path d="M798.8 452.0 L798.8 584.0 L866.0 556.0 L866.0 424.0Z" fill="rgba(178,120,60,.018)" stroke="#c07a0a" stroke-width=".9" stroke-opacity=".85"/><path d="M756.9 514.5 L828.9 486.9 L907.0 510.0 L835.0 540.0Z" fill="rgba(178,120,60,.018)" stroke="#c07a0a" stroke-width=".9" stroke-opacity=".85"/><path d="M722.6 561.3 L790.4 533.7 L866.0 556.0 L798.8 584.0Z" fill="rgba(178,120,60,.018)" stroke="#c07a0a" stroke-width=".9" stroke-opacity=".85"/><path d="M788.7 560.0 L788.7 656.0 L866.0 628.0 L866.0 532.0Z" fill="rgba(178,120,60,.018)" stroke="#c07a0a" stroke-width=".9" stroke-opacity=".85"/><path d="M722.4 679.6 L788.5 654.3 L866.0 676.0 L799.0 701.9Z" fill="rgba(178,120,60,.018)" stroke="#c07a0a" stroke-width=".9" stroke-opacity=".85"/><path d="M789.3 600.0 L789.3 700.0 L842.0 720.0 L842.0 620.0Z" fill="rgba(178,120,60,.018)" stroke="#c07a0a" stroke-width=".9" stroke-opacity=".85"/><path d="M960.6 988.0 L1009.0 1003.0 L1009.0 1098.0 L960.6 1083.0Z" fill="rgba(178,120,60,.018)" stroke="#c07a0a" stroke-width=".9" stroke-opacity=".85"/><path d="M972.0 1035.0 L1020.0 1050.0 L1020.0 1145.0 L972.0 1130.0Z" fill="rgba(178,120,60,.018)" stroke="#c07a0a" stroke-width=".9" stroke-opacity=".85"/><path d="M979.0 1047.0 L993.0 1052.0 L993.0 1165.0 L979.0 1160.0Z" fill="rgba(178,120,60,.018)" stroke="#c07a0a" stroke-width=".9" stroke-opacity=".85"/><path d="M948.0 1070.0 L1003.0 1090.0 L1003.0 1160.0 L948.0 1140.0Z" fill="rgba(178,120,60,.018)" stroke="#c07a0a" stroke-width=".9" stroke-opacity=".85"/><path d="M1134.6 1187.7 L1203.3 1207.2 L1153.4 1226.8 L1081.6 1206.5Z" fill="rgba(178,120,60,.018)" stroke="#c07a0a" stroke-width=".9" stroke-opacity=".85"/><path d="M1148.7 1180.7 L1225.2 1202.6 L1159.6 1227.5 L1085.0 1205.0Z" fill="rgba(178,120,60,.018)" stroke="#c07a0a" stroke-width=".9" stroke-opacity=".85"/></g><path d="M876.4 487.6 L876.4 325.6 M899.8 484.5 L899.8 337.5 M974.1 489.2 L974.1 312.2 M865.6 667.8 L865.6 385.8 M1049.2 536.0 L1049.2 384.0 M1097.9 559.7 L1097.9 387.7 M847.7 604.3 L847.7 432.3 M1083.8 527.9 L1083.8 450.9 M906.7 502.0 L740.6 457.3 M883.7 505.3 L765.9 473.6 M897.9 460.4 L838.0 444.3 M829.1 545.8 L730.6 519.3 M839.5 666.7 L731.3 637.6 M869.2 812.8 L757.0 743.3 M905.4 879.8 L768.2 842.9 M860.2 522.7 L784.4 554.1 M874.1 551.2 L752.1 601.8 M855.5 680.7 L751.1 721.1 M880.3 826.4 L776.8 869.3 M1157.4 822.6 L789.8 926.5 M964.6 506.2 L845.6 533.0 M964.9 892.9 L926.1 909.0 M998.8 938.5 L932.2 966.1 M973.4 1033.0 L925.3 1052.9 M1094.8 736.0 L970.6 780.9 M899.6 759.0 L860.4 774.2 M905.0 739.6 L875.2 751.1 M851.1 688.6 L839.2 687.4 M903.0 752.2 L903.0 710.2 M970.2 702.1 L948.6 697.6 M1094.4 537.7 L1166.0 509.3 M1008.0 596.7 L1214.3 514.7 M949.1 721.1 L1216.3 631.0 M912.9 915.0 L1159.3 825.9 M1082.2 1203.4 L1174.9 1166.0 M1082.9 1207.7 L1197.9 1161.3 M1048.7 556.7 L1185.8 593.6 M1088.5 1216.8 L1195.5 1249.9 M1090.9 1209.7 L1218.0 1245.3 M1103.0 824.7 L1103.0 846.7" fill="none" stroke="#c07a0a" stroke-width="1.25"/><path d="M974 720 L974 600" stroke="#7a7ad8" stroke-width="1.2" opacity=".7"/><path d="M974 575 L968 600 L980 600Z" fill="#8a8ae0" opacity=".75"/><path d="M974 726 L878 701" stroke="#f05a4a" stroke-width="1.1" opacity=".85"/><path d="M855.5 695 L878 696 L876 706Z" fill="#f0a0a0" opacity=".7"/><path d="M974 722 L891 763" stroke="#58c838" stroke-width="1.1"/><path d="M873.3 769.5 L890 758 L892.5 769Z" fill="#2ac02a"/><path d="M873.3 769.5 L891.4 764 L892.5 769Z" fill="#148a14"/><g transform="translate(876.4 307.6) rotate(-90.0)" opacity="1"><path d="M0 0 L-20 -4.8 L-20 4.8Z" fill="#c47e0a"/><path d="M0 0 L-20 -4.8 L-20 -0.7Z" fill="#7e4c00"/><path d="M0 0 L-20 1.7 L-20 4.8Z" fill="#eaa21c"/><ellipse cx="-20" cy="0" rx="2.4" ry="4.8" fill="#a86c06"/></g><g transform="translate(899.8 319.5) rotate(-90.0)" opacity="1"><path d="M0 0 L-20 -4.8 L-20 4.8Z" fill="#c47e0a"/><path d="M0 0 L-20 -4.8 L-20 -0.7Z" fill="#7e4c00"/><path d="M0 0 L-20 1.7 L-20 4.8Z" fill="#eaa21c"/><ellipse cx="-20" cy="0" rx="2.4" ry="4.8" fill="#a86c06"/></g><g transform="translate(974.1 294.2) rotate(-90.0)" opacity="1"><path d="M0 0 L-20 -4.8 L-20 4.8Z" fill="#c47e0a"/><path d="M0 0 L-20 -4.8 L-20 -0.7Z" fill="#7e4c00"/><path d="M0 0 L-20 1.7 L-20 4.8Z" fill="#eaa21c"/><ellipse cx="-20" cy="0" rx="2.4" ry="4.8" fill="#a86c06"/></g><g transform="translate(865.6 367.8) rotate(-90.0)" opacity="1"><path d="M0 0 L-20 -4.8 L-20 4.8Z" fill="#c47e0a"/><path d="M0 0 L-20 -4.8 L-20 -0.7Z" fill="#7e4c00"/><path d="M0 0 L-20 1.7 L-20 4.8Z" fill="#eaa21c"/><ellipse cx="-20" cy="0" rx="2.4" ry="4.8" fill="#a86c06"/></g><g transform="translate(1049.2 366.0) rotate(-90.0)" opacity="1"><path d="M0 0 L-20 -4.8 L-20 4.8Z" fill="#c47e0a"/><path d="M0 0 L-20 -4.8 L-20 -0.7Z" fill="#7e4c00"/><path d="M0 0 L-20 1.7 L-20 4.8Z" fill="#eaa21c"/><ellipse cx="-20" cy="0" rx="2.4" ry="4.8" fill="#a86c06"/></g><g transform="translate(1097.9 369.7) rotate(-90.0)" opacity="1"><path d="M0 0 L-20 -4.8 L-20 4.8Z" fill="#c47e0a"/><path d="M0 0 L-20 -4.8 L-20 -0.7Z" fill="#7e4c00"/><path d="M0 0 L-20 1.7 L-20 4.8Z" fill="#eaa21c"/><ellipse cx="-20" cy="0" rx="2.4" ry="4.8" fill="#a86c06"/></g><g transform="translate(847.7 414.3) rotate(-90.0)" opacity="1"><path d="M0 0 L-20 -4.8 L-20 4.8Z" fill="#c47e0a"/><path d="M0 0 L-20 -4.8 L-20 -0.7Z" fill="#7e4c00"/><path d="M0 0 L-20 1.7 L-20 4.8Z" fill="#eaa21c"/><ellipse cx="-20" cy="0" rx="2.4" ry="4.8" fill="#a86c06"/></g><g transform="translate(1083.8 432.9) rotate(-90.0)" opacity="1"><path d="M0 0 L-20 -4.8 L-20 4.8Z" fill="#c47e0a"/><path d="M0 0 L-20 -4.8 L-20 -0.7Z" fill="#7e4c00"/><path d="M0 0 L-20 1.7 L-20 4.8Z" fill="#eaa21c"/><ellipse cx="-20" cy="0" rx="2.4" ry="4.8" fill="#a86c06"/></g><g transform="translate(723.2 452.6) rotate(-164.9)" opacity="1"><path d="M0 0 L-20 -4.8 L-20 4.8Z" fill="#c47e0a"/><path d="M0 0 L-20 -4.8 L-20 -0.7Z" fill="#7e4c00"/><path d="M0 0 L-20 1.7 L-20 4.8Z" fill="#eaa21c"/><ellipse cx="-20" cy="0" rx="2.4" ry="4.8" fill="#a86c06"/></g><g transform="translate(748.5 468.9) rotate(-164.9)" opacity="1"><path d="M0 0 L-20 -4.8 L-20 4.8Z" fill="#c47e0a"/><path d="M0 0 L-20 -4.8 L-20 -0.7Z" fill="#7e4c00"/><path d="M0 0 L-20 1.7 L-20 4.8Z" fill="#eaa21c"/><ellipse cx="-20" cy="0" rx="2.4" ry="4.8" fill="#a86c06"/></g><g transform="translate(820.6 439.6) rotate(-164.9)" opacity="1"><path d="M0 0 L-20 -4.8 L-20 4.8Z" fill="#c47e0a"/><path d="M0 0 L-20 -4.8 L-20 -0.7Z" fill="#7e4c00"/><path d="M0 0 L-20 1.7 L-20 4.8Z" fill="#eaa21c"/><ellipse cx="-20" cy="0" rx="2.4" ry="4.8" fill="#a86c06"/></g><g transform="translate(713.2 514.6) rotate(-164.9)" opacity="1"><path d="M0 0 L-20 -4.8 L-20 4.8Z" fill="#c47e0a"/><path d="M0 0 L-20 -4.8 L-20 -0.7Z" fill="#7e4c00"/><path d="M0 0 L-20 1.7 L-20 4.8Z" fill="#eaa21c"/><ellipse cx="-20" cy="0" rx="2.4" ry="4.8" fill="#a86c06"/></g><g transform="translate(713.9 632.9) rotate(-164.9)" opacity="1"><path d="M0 0 L-20 -4.8 L-20 4.8Z" fill="#c47e0a"/><path d="M0 0 L-20 -4.8 L-20 -0.7Z" fill="#7e4c00"/><path d="M0 0 L-20 1.7 L-20 4.8Z" fill="#eaa21c"/><ellipse cx="-20" cy="0" rx="2.4" ry="4.8" fill="#a86c06"/></g><g transform="translate(741.7 733.8) rotate(-148.2)" opacity="1"><path d="M0 0 L-20 -4.8 L-20 4.8Z" fill="#c47e0a"/><path d="M0 0 L-20 -4.8 L-20 -0.7Z" fill="#7e4c00"/><path d="M0 0 L-20 1.7 L-20 4.8Z" fill="#eaa21c"/><ellipse cx="-20" cy="0" rx="2.4" ry="4.8" fill="#a86c06"/></g><g transform="translate(750.8 838.2) rotate(-164.9)" opacity="1"><path d="M0 0 L-20 -4.8 L-20 4.8Z" fill="#c47e0a"/><path d="M0 0 L-20 -4.8 L-20 -0.7Z" fill="#7e4c00"/><path d="M0 0 L-20 1.7 L-20 4.8Z" fill="#eaa21c"/><ellipse cx="-20" cy="0" rx="2.4" ry="4.8" fill="#a86c06"/></g><g transform="translate(767.8 561.0) rotate(157.5)" opacity="1"><path d="M0 0 L-20 -4.8 L-20 4.8Z" fill="#c47e0a"/><path d="M0 0 L-20 -4.8 L-20 -0.7Z" fill="#7e4c00"/><path d="M0 0 L-20 1.7 L-20 4.8Z" fill="#eaa21c"/><ellipse cx="-20" cy="0" rx="2.4" ry="4.8" fill="#a86c06"/></g><g transform="translate(735.5 608.7) rotate(157.5)" opacity="1"><path d="M0 0 L-20 -4.8 L-20 4.8Z" fill="#c47e0a"/><path d="M0 0 L-20 -4.8 L-20 -0.7Z" fill="#7e4c00"/><path d="M0 0 L-20 1.7 L-20 4.8Z" fill="#eaa21c"/><ellipse cx="-20" cy="0" rx="2.4" ry="4.8" fill="#a86c06"/></g><g transform="translate(734.3 727.6) rotate(158.8)" opacity="1"><path d="M0 0 L-20 -4.8 L-20 4.8Z" fill="#c47e0a"/><path d="M0 0 L-20 -4.8 L-20 -0.7Z" fill="#7e4c00"/><path d="M0 0 L-20 1.7 L-20 4.8Z" fill="#eaa21c"/><ellipse cx="-20" cy="0" rx="2.4" ry="4.8" fill="#a86c06"/></g><g transform="translate(760.2 876.2) rotate(157.5)" opacity="1"><path d="M0 0 L-20 -4.8 L-20 4.8Z" fill="#c47e0a"/><path d="M0 0 L-20 -4.8 L-20 -0.7Z" fill="#7e4c00"/><path d="M0 0 L-20 1.7 L-20 4.8Z" fill="#eaa21c"/><ellipse cx="-20" cy="0" rx="2.4" ry="4.8" fill="#a86c06"/></g><g transform="translate(772.5 931.4) rotate(164.2)" opacity="1"><path d="M0 0 L-20 -4.8 L-20 4.8Z" fill="#c47e0a"/><path d="M0 0 L-20 -4.8 L-20 -0.7Z" fill="#7e4c00"/><path d="M0 0 L-20 1.7 L-20 4.8Z" fill="#eaa21c"/><ellipse cx="-20" cy="0" rx="2.4" ry="4.8" fill="#a86c06"/></g><g transform="translate(828.0 537.0) rotate(167.3)" opacity="1"><path d="M0 0 L-20 -4.8 L-20 4.8Z" fill="#c47e0a"/><path d="M0 0 L-20 -4.8 L-20 -0.7Z" fill="#7e4c00"/><path d="M0 0 L-20 1.7 L-20 4.8Z" fill="#eaa21c"/><ellipse cx="-20" cy="0" rx="2.4" ry="4.8" fill="#a86c06"/></g><g transform="translate(909.5 915.9) rotate(157.5)" opacity="1"><path d="M0 0 L-20 -4.8 L-20 4.8Z" fill="#c47e0a"/><path d="M0 0 L-20 -4.8 L-20 -0.7Z" fill="#7e4c00"/><path d="M0 0 L-20 1.7 L-20 4.8Z" fill="#eaa21c"/><ellipse cx="-20" cy="0" rx="2.4" ry="4.8" fill="#a86c06"/></g><g transform="translate(915.6 973.0) rotate(157.5)" opacity="1"><path d="M0 0 L-20 -4.8 L-20 4.8Z" fill="#c47e0a"/><path d="M0 0 L-20 -4.8 L-20 -0.7Z" fill="#7e4c00"/><path d="M0 0 L-20 1.7 L-20 4.8Z" fill="#eaa21c"/><ellipse cx="-20" cy="0" rx="2.4" ry="4.8" fill="#a86c06"/></g><g transform="translate(908.7 1059.8) rotate(157.5)" opacity="1"><path d="M0 0 L-20 -4.8 L-20 4.8Z" fill="#c47e0a"/><path d="M0 0 L-20 -4.8 L-20 -0.7Z" fill="#7e4c00"/><path d="M0 0 L-20 1.7 L-20 4.8Z" fill="#eaa21c"/><ellipse cx="-20" cy="0" rx="2.4" ry="4.8" fill="#a86c06"/></g><g transform="translate(953.7 787.0) rotate(160.1)" opacity="1"><path d="M0 0 L-20 -4.8 L-20 4.8Z" fill="#c47e0a"/><path d="M0 0 L-20 -4.8 L-20 -0.7Z" fill="#7e4c00"/><path d="M0 0 L-20 1.7 L-20 4.8Z" fill="#eaa21c"/><ellipse cx="-20" cy="0" rx="2.4" ry="4.8" fill="#a86c06"/></g><g transform="translate(843.6 780.7) rotate(158.8)" opacity="1"><path d="M0 0 L-20 -4.8 L-20 4.8Z" fill="#c47e0a"/><path d="M0 0 L-20 -4.8 L-20 -0.7Z" fill="#7e4c00"/><path d="M0 0 L-20 1.7 L-20 4.8Z" fill="#eaa21c"/><ellipse cx="-20" cy="0" rx="2.4" ry="4.8" fill="#a86c06"/></g><g transform="translate(858.4 757.6) rotate(158.8)" opacity="1"><path d="M0 0 L-20 -4.8 L-20 4.8Z" fill="#c47e0a"/><path d="M0 0 L-20 -4.8 L-20 -0.7Z" fill="#7e4c00"/><path d="M0 0 L-20 1.7 L-20 4.8Z" fill="#eaa21c"/><ellipse cx="-20" cy="0" rx="2.4" ry="4.8" fill="#a86c06"/></g><g transform="translate(821.3 685.5) rotate(-174.1)" opacity="1"><path d="M0 0 L-20 -4.8 L-20 4.8Z" fill="#c47e0a"/><path d="M0 0 L-20 -4.8 L-20 -0.7Z" fill="#7e4c00"/><path d="M0 0 L-20 1.7 L-20 4.8Z" fill="#eaa21c"/><ellipse cx="-20" cy="0" rx="2.4" ry="4.8" fill="#a86c06"/></g><g transform="translate(903.0 692.2) rotate(-90.0)" opacity="1"><path d="M0 0 L-20 -4.8 L-20 4.8Z" fill="#c47e0a"/><path d="M0 0 L-20 -4.8 L-20 -0.7Z" fill="#7e4c00"/><path d="M0 0 L-20 1.7 L-20 4.8Z" fill="#eaa21c"/><ellipse cx="-20" cy="0" rx="2.4" ry="4.8" fill="#a86c06"/></g><g transform="translate(931.0 694.0) rotate(-168.3)" opacity="1"><path d="M0 0 L-20 -4.8 L-20 4.8Z" fill="#c47e0a"/><path d="M0 0 L-20 -4.8 L-20 -0.7Z" fill="#7e4c00"/><path d="M0 0 L-20 1.7 L-20 4.8Z" fill="#eaa21c"/><ellipse cx="-20" cy="0" rx="2.4" ry="4.8" fill="#a86c06"/></g><g transform="translate(1182.7 502.6) rotate(-21.7)" opacity="1"><path d="M0 0 L-20 -4.8 L-20 4.8Z" fill="#c47e0a"/><path d="M0 0 L-20 -4.8 L-20 -0.7Z" fill="#7e4c00"/><path d="M0 0 L-20 1.7 L-20 4.8Z" fill="#eaa21c"/><ellipse cx="-20" cy="0" rx="2.4" ry="4.8" fill="#a86c06"/></g><g transform="translate(1231.0 508.0) rotate(-21.7)" opacity="1"><path d="M0 0 L-20 -4.8 L-20 4.8Z" fill="#c47e0a"/><path d="M0 0 L-20 -4.8 L-20 -0.7Z" fill="#7e4c00"/><path d="M0 0 L-20 1.7 L-20 4.8Z" fill="#eaa21c"/><ellipse cx="-20" cy="0" rx="2.4" ry="4.8" fill="#a86c06"/></g><g transform="translate(1233.4 625.3) rotate(-18.6)" opacity="1"><path d="M0 0 L-20 -4.8 L-20 4.8Z" fill="#c47e0a"/><path d="M0 0 L-20 -4.8 L-20 -0.7Z" fill="#7e4c00"/><path d="M0 0 L-20 1.7 L-20 4.8Z" fill="#eaa21c"/><ellipse cx="-20" cy="0" rx="2.4" ry="4.8" fill="#a86c06"/></g><g transform="translate(1176.2 819.8) rotate(-19.9)" opacity="1"><path d="M0 0 L-20 -4.8 L-20 4.8Z" fill="#c47e0a"/><path d="M0 0 L-20 -4.8 L-20 -0.7Z" fill="#7e4c00"/><path d="M0 0 L-20 1.7 L-20 4.8Z" fill="#eaa21c"/><ellipse cx="-20" cy="0" rx="2.4" ry="4.8" fill="#a86c06"/></g><g transform="translate(1191.6 1159.3) rotate(-22.0)" opacity="1"><path d="M0 0 L-20 -4.8 L-20 4.8Z" fill="#c47e0a"/><path d="M0 0 L-20 -4.8 L-20 -0.7Z" fill="#7e4c00"/><path d="M0 0 L-20 1.7 L-20 4.8Z" fill="#eaa21c"/><ellipse cx="-20" cy="0" rx="2.4" ry="4.8" fill="#a86c06"/></g><g transform="translate(1214.6 1154.6) rotate(-22.0)" opacity="1"><path d="M0 0 L-20 -4.8 L-20 4.8Z" fill="#c47e0a"/><path d="M0 0 L-20 -4.8 L-20 -0.7Z" fill="#7e4c00"/><path d="M0 0 L-20 1.7 L-20 4.8Z" fill="#eaa21c"/><ellipse cx="-20" cy="0" rx="2.4" ry="4.8" fill="#a86c06"/></g><g transform="translate(1203.2 598.3) rotate(15.1)" opacity="1"><path d="M0 0 L-20 -4.8 L-20 4.8Z" fill="#c47e0a"/><path d="M0 0 L-20 -4.8 L-20 -0.7Z" fill="#7e4c00"/><path d="M0 0 L-20 1.7 L-20 4.8Z" fill="#eaa21c"/><ellipse cx="-20" cy="0" rx="2.4" ry="4.8" fill="#a86c06"/></g><g transform="translate(1212.7 1255.2) rotate(17.2)" opacity="1"><path d="M0 0 L-20 -4.8 L-20 4.8Z" fill="#c47e0a"/><path d="M0 0 L-20 -4.8 L-20 -0.7Z" fill="#7e4c00"/><path d="M0 0 L-20 1.7 L-20 4.8Z" fill="#eaa21c"/><ellipse cx="-20" cy="0" rx="2.4" ry="4.8" fill="#a86c06"/></g><g transform="translate(1235.3 1250.2) rotate(15.7)" opacity="1"><path d="M0 0 L-20 -4.8 L-20 4.8Z" fill="#c47e0a"/><path d="M0 0 L-20 -4.8 L-20 -0.7Z" fill="#7e4c00"/><path d="M0 0 L-20 1.7 L-20 4.8Z" fill="#eaa21c"/><ellipse cx="-20" cy="0" rx="2.4" ry="4.8" fill="#a86c06"/></g><g transform="translate(1103.0 864.7) rotate(90.0)" opacity="1"><path d="M0 0 L-20 -4.8 L-20 4.8Z" fill="#c47e0a"/><path d="M0 0 L-20 -4.8 L-20 -0.7Z" fill="#7e4c00"/><path d="M0 0 L-20 1.7 L-20 4.8Z" fill="#eaa21c"/><ellipse cx="-20" cy="0" rx="2.4" ry="4.8" fill="#a86c06"/></g><g transform="translate(1096.0 1206.0) rotate(5.7)" opacity="1"><path d="M0 0 L-18 -5 L-18 5Z" fill="#c47e0a"/><path d="M0 0 L-18 -5 L-18 -0.8Z" fill="#7e4c00"/><path d="M0 0 L-18 1.8 L-18 5Z" fill="#eaa21c"/><ellipse cx="-18" cy="0" rx="2.4" ry="5" fill="#a86c06"/></g><text x="875.6" y="294.6" font-size="21" fill="#c07a0a" text-anchor="middle" font-family="Liberation Sans,sans-serif">Y</text><text x="899.8" y="307.6" font-size="21" fill="#c07a0a" text-anchor="middle" font-family="Liberation Sans,sans-serif">Y</text><text x="974.1" y="280.6" font-size="21" fill="#c07a0a" text-anchor="middle" font-family="Liberation Sans,sans-serif">Z</text><text x="864.5" y="355.1" font-size="21" fill="#c07a0a" text-anchor="middle" font-family="Liberation Sans,sans-serif">Z</text><text x="1049.2" y="350.1" font-size="21" fill="#c07a0a" text-anchor="middle" font-family="Liberation Sans,sans-serif">Y</text><text x="1097.9" y="355.6" font-size="21" fill="#c07a0a" text-anchor="middle" font-family="Liberation Sans,sans-serif">Y</text><text x="847.7" y="399.6" font-size="21" fill="#c07a0a" text-anchor="middle" font-family="Liberation Sans,sans-serif">Y</text><text x="1083.8" y="418.2" font-size="21" fill="#c07a0a" text-anchor="middle" font-family="Liberation Sans,sans-serif">Z</text><text x="706.5" y="455.3" font-size="21" fill="#c07a0a" text-anchor="middle" font-family="Liberation Sans,sans-serif">X</text><text x="730.0" y="471.6" font-size="21" fill="#c07a0a" text-anchor="middle" font-family="Liberation Sans,sans-serif">Z</text><text x="804.2" y="443.6" font-size="21" fill="#c07a0a" text-anchor="middle" font-family="Liberation Sans,sans-serif">X</text><text x="695.5" y="517.6" font-size="21" fill="#c07a0a" text-anchor="middle" font-family="Liberation Sans,sans-serif">X</text><text x="695.5" y="635.6" font-size="21" fill="#c07a0a" text-anchor="middle" font-family="Liberation Sans,sans-serif">X</text><text x="719.0" y="741.6" font-size="21" fill="#c07a0a" text-anchor="middle" font-family="Liberation Sans,sans-serif">Y</text><text x="733.6" y="839.6" font-size="21" fill="#c07a0a" text-anchor="middle" font-family="Liberation Sans,sans-serif">X</text><text x="752.9" y="576.6" font-size="21" fill="#c07a0a" text-anchor="middle" font-family="Liberation Sans,sans-serif">X</text><text x="718.4" y="623.1" font-size="21" fill="#c07a0a" text-anchor="middle" font-family="Liberation Sans,sans-serif">Y</text><text x="725.4" y="728.6" font-size="21" fill="#c07a0a" text-anchor="middle" font-family="Liberation Sans,sans-serif">Y</text><text x="743.8" y="893.1" font-size="21" fill="#c07a0a" text-anchor="middle" font-family="Liberation Sans,sans-serif">Z</text><text x="757.3" y="948.1" font-size="21" fill="#c07a0a" text-anchor="middle" font-family="Liberation Sans,sans-serif">Y</text><text x="894.0" y="929.6" font-size="21" fill="#c07a0a" text-anchor="middle" font-family="Liberation Sans,sans-serif">Z</text><text x="900.5" y="987.6" font-size="21" fill="#c07a0a" text-anchor="middle" font-family="Liberation Sans,sans-serif">Y</text><text x="891.0" y="1074.6" font-size="21" fill="#c07a0a" text-anchor="middle" font-family="Liberation Sans,sans-serif">Y</text><text x="938.0" y="800.6" font-size="21" fill="#c07a0a" text-anchor="middle" font-family="Liberation Sans,sans-serif">Y</text><text x="828.7" y="794.6" font-size="21" fill="#c07a0a" text-anchor="middle" font-family="Liberation Sans,sans-serif">Y</text><text x="843.6" y="773.6" font-size="21" fill="#c07a0a" text-anchor="middle" font-family="Liberation Sans,sans-serif">X</text><text x="805.6" y="689.6" font-size="21" fill="#c07a0a" text-anchor="middle" font-family="Liberation Sans,sans-serif">X</text><text x="938.0" y="685.1" font-size="21" fill="#c07a0a" text-anchor="middle" font-family="Liberation Sans,sans-serif">Y</text><text x="915.0" y="695.6" font-size="21" fill="#c07a0a" text-anchor="middle" font-family="Liberation Sans,sans-serif">X</text><text x="1197.2" y="504.8" font-size="21" fill="#c07a0a" text-anchor="middle" font-family="Liberation Sans,sans-serif">X</text><text x="1244.8" y="510.0" font-size="21" fill="#c07a0a" text-anchor="middle" font-family="Liberation Sans,sans-serif">Z</text><text x="1249.2" y="627.6" font-size="21" fill="#c07a0a" text-anchor="middle" font-family="Liberation Sans,sans-serif">X</text><text x="1190.9" y="821.2" font-size="21" fill="#c07a0a" text-anchor="middle" font-family="Liberation Sans,sans-serif">X</text><text x="1206.0" y="1157.6" font-size="21" fill="#c07a0a" text-anchor="middle" font-family="Liberation Sans,sans-serif">Z</text><text x="1229.3" y="1156.6" font-size="21" fill="#c07a0a" text-anchor="middle" font-family="Liberation Sans,sans-serif">X</text><text x="1219.5" y="611.6" font-size="21" fill="#c07a0a" text-anchor="middle" font-family="Liberation Sans,sans-serif">Z</text><text x="1229.0" y="1268.6" font-size="21" fill="#c07a0a" text-anchor="middle" font-family="Liberation Sans,sans-serif">Y</text><text x="1251.7" y="1263.6" font-size="21" fill="#c07a0a" text-anchor="middle" font-family="Liberation Sans,sans-serif">Z</text><text x="1103.0" y="895.6" font-size="21" fill="#c07a0a" text-anchor="middle" font-family="Liberation Sans,sans-serif">Y</text><text x="819.9" y="667.2" font-size="21" fill="#c07a0a" text-anchor="middle" font-family="Liberation Sans,sans-serif">Z</text><text x="1113.6" y="1223.6" font-size="21" fill="#c07a0a" text-anchor="middle" font-family="Liberation Sans,sans-serif">Z</text><text x="1085.0" y="1227.6" font-size="21" fill="#c07a0a" text-anchor="middle" font-family="Liberation Sans,sans-serif">Y</text><text x="849.0" y="399.6" font-size="21" fill="#c07a0a" text-anchor="middle" font-family="Liberation Sans,sans-serif"></text><text x="1083.0" y="533.2" font-size="20" fill="#c07a0a" text-anchor="middle" font-family="Liberation Sans,sans-serif">Z</text><text x="1035.0" y="696.8" font-size="19" fill="#c07a0a" text-anchor="middle" font-family="Liberation Sans,sans-serif">Z</text><g><path d="M573 1172 V1100" stroke="#1414f0" stroke-width="1.4"/><path d="M573 1084 L568.4 1102 H577.6Z" fill="#1414d8"/><ellipse cx="573" cy="1102" rx="4.6" ry="1.6" fill="#0a0a90"/>
<path d="M573 1172 L522 1157" stroke="#f01414" stroke-width="1.4"/><path d="M504 1152.6 L522 1152 L520 1161.6Z" fill="#d81010"/><ellipse cx="521" cy="1156.8" rx="1.8" ry="4.8" fill="#900a0a" transform="rotate(-16 521 1156.8)"/>
<path d="M573 1172 L528 1191" stroke="#18c818" stroke-width="1.4"/><path d="M511 1198 L526 1186.6 L530 1196Z" fill="#12a012"/><ellipse cx="528" cy="1191.2" rx="1.8" ry="5" fill="#0a700a" transform="rotate(22 528 1191.2)"/></g><text x="573.5" y="1078.6" font-size="21" fill="#1414e0" text-anchor="middle" font-family="Liberation Sans,sans-serif">Z</text><text x="491.5" y="1156.6" font-size="21" fill="#e81414" text-anchor="middle" font-family="Liberation Sans,sans-serif">X</text><text x="503.0" y="1207.6" font-size="21" fill="#18b818" text-anchor="middle" font-family="Liberation Sans,sans-serif">Y</text></g></svg>
<div class="a" style="left:4px;top:187.5px;width:443px;height:1043px;border:2.5px solid #ff1408;"></div>
</body></html>
